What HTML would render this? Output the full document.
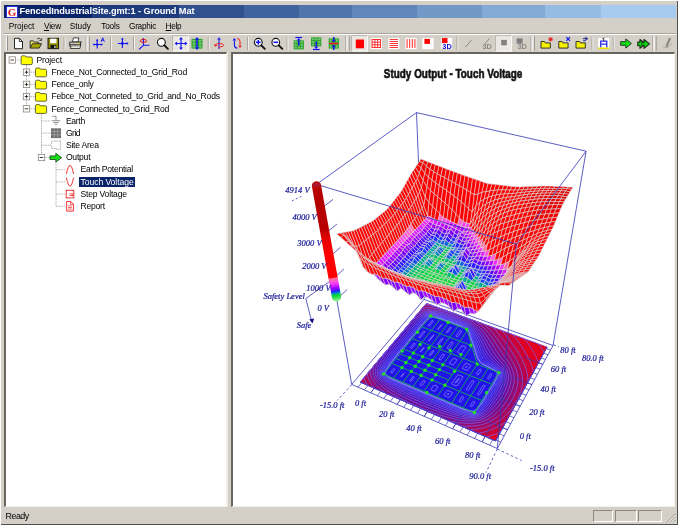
<!DOCTYPE html>
<html lang="en"><head><meta charset="utf-8">
<title>FencedIndustrialSite.gmt:1 - Ground Mat</title>
<style>

html,body{margin:0;padding:0;background:#fff;}
body{width:680px;height:527px;overflow:hidden;position:relative;font-family:"Liberation Sans",sans-serif;font-size:8.25px;color:#000;}
#win{will-change:transform;position:absolute;left:1px;top:1px;width:676px;height:523px;background:#d4d0c8;border-right:1px solid #505050;border-bottom:1px solid #505050;}
#win div,#win span{position:absolute;}
#title{left:3px;top:4px;width:672px;height:13px;background:linear-gradient(to right,#0a246a 0,#0a246a 88px,#1c3a7c 88px,#1c3a7c 175px,#30508e 175px,#30508e 240px,#40629e 240px,#40629e 295px,#5074ac 295px,#5074ac 348px,#6086ba 348px,#6086ba 413px,#7298c8 413px,#7298c8 478px,#84aad6 478px,#84aad6 541px,#96bce4 541px,#96bce4 597px,#a6caf0 597px);}
#title .ttl{left:15.5px;top:1px;color:#fff;font-weight:bold;font-size:9.2px;white-space:nowrap;line-height:11px}
#menu{left:3px;top:18px;width:672px;height:15px;}
#menu span{top:3.4px;line-height:10px;white-space:nowrap}
#menu u{text-decoration:underline;text-underline-offset:1px}
#tbar{left:3px;top:33px;width:672px;height:18px;border-top:1px solid #fff;box-shadow:0 -1px 0 #a8a49c;}
.sep{top:3px;width:1px;height:13px;background:#8c8880;border-right:1px solid #fff;}
.grip{top:2px;width:2px;height:15px;background:#fff;border-right:1px solid #8c8880;}
#tree{left:3px;top:51px;width:223px;height:455px;background:#fff;border-left:2px solid #686660;border-top:2px solid #686660;box-sizing:border-box;overflow:hidden;border-right:1px solid #f4f2ee;border-bottom:1px solid #f4f2ee}
#view{left:230px;top:51px;width:444px;height:455px;background:#fff;border-left:2px solid #686660;border-top:2px solid #686660;box-sizing:border-box;overflow:hidden;border-right:1px solid #f4f2ee;border-bottom:1px solid #f4f2ee}
#split{left:226px;top:51px;width:4px;height:455px;background:#d4d0c8;border-left:1px solid #ece9e2;box-sizing:border-box}
#status{left:3px;top:507px;width:672px;height:16px;}
#status .rdy{left:1.6px;top:3.4px;line-height:10px;font-size:8.9px;letter-spacing:-0.5px}
.pane{top:2px;height:12px;border:1px solid;border-color:#8c8880 #fff #fff #8c8880;box-sizing:border-box}
.ti{white-space:nowrap;line-height:12px;font-size:8.6px;height:12px}
.sel{background:#0a246a;color:#fff}

</style></head>
<body>
<div id="win">
<div id="title"><svg style="position:absolute;left:2px;top:0.5px" width="12" height="12" viewBox="0 0 12 12"><rect x="0.5" y="0.5" width="11" height="11" fill="#fff" stroke="#2a2ae0"/><text x="6" y="10" font-family="Liberation Serif,serif" font-weight="bold" font-size="11" fill="#e02020" text-anchor="middle">G</text></svg><span class="ttl" style="letter-spacing:-0.07px">FencedIndustrialSite.gmt:1 - Ground Mat</span></div>
<div id="menu"><span class="mi" style="left:4.8px;letter-spacing:-0.013px">Project</span><span class="mi" style="left:40.0px;letter-spacing:-0.188px"><u>V</u>iew</span><span class="mi" style="left:65.7px;letter-spacing:0.038px">Study</span><span class="mi" style="left:97.2px;letter-spacing:-0.153px">Tools</span><span class="mi" style="left:125.0px;letter-spacing:-0.27px">Graphic</span><span class="mi" style="left:161.6px;letter-spacing:-0.346px"><u>H</u>elp</span></div>
<div id="tbar"><svg style="position:absolute;left:0;top:0" width="672" height="18" viewBox="4 35 672 18"><path d="M6.3 36.4v14.4" stroke="#fff" stroke-width="1"/><path d="M7.5 36.4v14.4" stroke="#8c8880" stroke-width="0.9"/><g transform="translate(18.50 43.5)"><path d="M-4 -5.2h4.8l3.2 3.2v7.2h-8z" fill="#fff" stroke="#111" stroke-width="0.9" stroke-linejoin="round"/><path d="M0.8 -5.2v3.2h3.2" fill="none" stroke="#111" stroke-width="0.8"/></g><g transform="translate(36.00 43.5)"><path d="M-5.8 4.6v-7.2h3l1 1.2h4.4v2" fill="#e8e460" stroke="#222" stroke-width="0.9" stroke-linejoin="round"/><path d="M-5.8 4.6l2.2 -4.4h9.2l-2.4 4.4z" fill="#a8a400" stroke="#222" stroke-width="0.9" stroke-linejoin="round"/><path d="M1.2 -4.6q2.2 -1.6 3.6 0.4" fill="none" stroke="#222" stroke-width="0.8"/><path d="M5.6 -5.2v2.2h-2.2" fill="none" stroke="#222" stroke-width="0.8"/></g><g transform="translate(53.30 43.5)"><rect x="-5.3" y="-5.2" width="10.6" height="10.4" fill="#8c8800" stroke="#111" stroke-width="0.9"/><rect x="-3.2" y="-4.8" width="6.4" height="4.6" fill="#fff"/><rect x="-2.8" y="1.6" width="5.6" height="3.4" fill="#111"/><rect x="1" y="2.3" width="1.3" height="2.2" fill="#ddd"/></g><path d="M64.2 37v13" stroke="#8c8880" stroke-width="0.8"/><path d="M65.0 37v13" stroke="#fff" stroke-width="0.8"/><g transform="translate(75.70 43.5)"><path d="M-3.4 -1.6l1.2 -4h5.4l-0.8 4z" fill="#fff" stroke="#222" stroke-width="0.8" stroke-linejoin="round"/><path d="M-6 -1.4h11.8l-1 0v4.2h-9.6l-1.2 -0z" fill="#c8c4bc" stroke="#222" stroke-width="0.9" stroke-linejoin="round"/><path d="M-6 1.2h11.6M-4.6 2.8l-0.8 2.2h9.6l0.6 -2.2" fill="#e8e6e0" stroke="#222" stroke-width="0.8"/><rect x="1.6" y="-0.4" width="2.2" height="1" fill="#e8e000"/></g><path d="M88.1 36.4v14.4" stroke="#fff" stroke-width="1"/><path d="M89.3 36.4v14.4" stroke="#8c8880" stroke-width="0.9"/><path d="M86.1 36v15.4" stroke="#8c8880" stroke-width="0.8"/><path d="M86.8 36v15.4" stroke="#fff" stroke-width="0.8"/><g transform="translate(99.00 43.5)"><path d="M-5.4 1h8.2M-1.8 -3.6v8.6" stroke="#1414f0" stroke-width="1.1"/><circle cx="-1.8" cy="1" r="1.3" fill="#1414f0"/><circle cx="-1.8" cy="-3.2" r="1" fill="#1414f0"/><circle cx="2.6" cy="1" r="1" fill="#1414f0"/><circle cx="-5" cy="1" r="0.9" fill="#1414f0"/><path d="M2 -1.6l1.7 -4.2l1.7 4.2M2.7 -3.2h2" fill="none" stroke="#1414f0" stroke-width="0.9"/></g><path d="M110.6 37v13" stroke="#8c8880" stroke-width="0.8"/><path d="M111.4 37v13" stroke="#fff" stroke-width="0.8"/><g transform="translate(123.00 43.5)"><path d="M-5.2 0h9.4M-0.6 -4.6v9.2" stroke="#1414f0" stroke-width="1.1"/><circle cx="-0.6" cy="0" r="1.4" fill="#1414f0"/><circle cx="-0.6" cy="-4.4" r="1" fill="#1414f0"/><path d="M5.6 0.0L3.6 1.5L3.6 -1.5Z" fill="#1414f0"/></g><path d="M133.6 37v13" stroke="#8c8880" stroke-width="0.8"/><path d="M134.4 37v13" stroke="#fff" stroke-width="0.8"/><g transform="translate(144.00 43.5)"><path d="M-0.6 -5.4v7.2l6 0M-0.6 1.8l-4.4 4" stroke="#1414f0" stroke-width="1.1" fill="none"/><ellipse cx="-0.6" cy="-2.6" rx="3.2" ry="1.5" fill="none" stroke="#f01414" stroke-width="1"/></g><g transform="translate(162.60 43.5)"><circle cx="-1.2" cy="-1.2" r="3.9" fill="#fff" stroke="#111" stroke-width="1.1"/><path d="M1.8 1.8L5.3 5.3" stroke="#111" stroke-width="1.9" stroke-linecap="round"/></g><rect x="172.5" y="35.6" width="16" height="15.6" fill="#ebe8e3"/><path d="M172.5 51.2v-15.6h16" fill="none" stroke="#aaa69e" stroke-width="0.7"/><path d="M172.5 51.2h16v-15.6" fill="none" stroke="#fff" stroke-width="0.8"/><g transform="translate(181.00 43.5)"><path d="M-5 0h10M0 -5v10" stroke="#1414f0" stroke-width="1.2"/><path d="M6.4 0.0L3.9 1.9L3.9 -1.9Z" fill="#1414f0"/><path d="M-6.4 0.0L-3.9 -1.9L-3.9 1.9Z" fill="#1414f0"/><path d="M0.0 6.4L-1.9 3.9L1.9 3.9Z" fill="#1414f0"/><path d="M0.0 -6.4L1.9 -3.9L-1.9 -3.9Z" fill="#1414f0"/></g><g transform="translate(197.00 43.5)"><rect x="-5" y="-4.2" width="10" height="8.8" fill="#7ec87e" stroke="#18a018" stroke-width="0.9"/><path d="M-1.6666666666666665 -4.2v8.8M1.666666666666667 -4.2v8.8M-5 -1.2666666666666666h10M-5 1.666666666666667h10" stroke="#18a018" stroke-width="0.8" fill="none"/><path d="M0 -4v8" stroke="#1414f0" stroke-width="1.6"/><path d="M0.0 -6.6L2.2 -3.7L-2.2 -3.7Z" fill="#1414f0"/><path d="M0.0 6.6L-2.2 3.7L2.2 3.7Z" fill="#1414f0"/></g><path d="M208.3 37v13" stroke="#8c8880" stroke-width="0.8"/><path d="M209.2 37v13" stroke="#fff" stroke-width="0.8"/><g transform="translate(219.00 43.5)"><path d="M0 -3.6v9" stroke="#1414f0" stroke-width="1.1"/><path d="M0.0 -6.2L1.9 -3.7L-1.9 -3.7Z" fill="#1414f0"/><path d="M-3.6 2.2a4.2 1.7 0 1 1 3 1.2" fill="none" stroke="#f01414" stroke-width="0.9"/><path d="M-4.2 3.2L-4.6 0.4L-1.6 2.1Z" fill="#f01414"/></g><g transform="translate(237.00 43.5)"><path d="M-2.6 -2.8v4.6q0.4 2.8 3 2.8" fill="none" stroke="#1414f0" stroke-width="1.1"/><path d="M-2.6 -5.6L-0.7 -3.1L-4.5 -3.1Z" fill="#1414f0"/><path d="M0.2 -5q2.6 0 2.8 2.8v3.6" fill="none" stroke="#f01414" stroke-width="1"/><path d="M3.0 4.4L1.2 2.1L4.8 2.1Z" fill="#f01414"/></g><path d="M247.6 37v13" stroke="#8c8880" stroke-width="0.8"/><path d="M248.4 37v13" stroke="#fff" stroke-width="0.8"/><g transform="translate(259.50 43.5)"><circle cx="-1.2" cy="-1.2" r="3.9" fill="#fff" stroke="#111" stroke-width="1.1"/><path d="M-3.6 -1.2h4.8M-1.2 -3.6v4.8" stroke="#1414f0" stroke-width="1.5"/><path d="M1.8 1.8L5.3 5.3" stroke="#111" stroke-width="1.9" stroke-linecap="round"/></g><g transform="translate(277.00 43.5)"><circle cx="-1.2" cy="-1.2" r="3.9" fill="#fff" stroke="#111" stroke-width="1.1"/><path d="M-3.6 -1.2h4.8" stroke="#1414f0" stroke-width="1.6"/><path d="M1.8 1.8L5.3 5.3" stroke="#111" stroke-width="1.9" stroke-linecap="round"/></g><path d="M287.1 37v13" stroke="#8c8880" stroke-width="0.8"/><path d="M287.9 37v13" stroke="#fff" stroke-width="0.8"/><g transform="translate(298.75 43.5)"><rect x="-4.6" y="-2.6" width="9.2" height="8" fill="#7ec87e" stroke="#18a018" stroke-width="0.9"/><path d="M-1.5333333333333332 -2.6v8M1.5333333333333332 -2.6v8M-4.6 0.06666666666666643h9.2M-4.6 2.733333333333333h9.2" stroke="#18a018" stroke-width="0.8" fill="none"/><path d="M-3.4 -6h6.8" stroke="#1414f0" stroke-width="1.2"/><path d="M0 -3v5" stroke="#1414f0" stroke-width="1.5"/><path d="M0.0 -5.6L2.1 -2.9L-2.1 -2.9Z" fill="#1414f0"/></g><g transform="translate(316.25 43.5)"><rect x="-4.6" y="-5.6" width="9.2" height="8" fill="#7ec87e" stroke="#18a018" stroke-width="0.9"/><path d="M-1.5333333333333332 -5.6v8M1.5333333333333332 -5.6v8M-4.6 -2.933333333333333h9.2M-4.6 -0.2666666666666666h9.2" stroke="#18a018" stroke-width="0.8" fill="none"/><path d="M-3.4 6h6.8" stroke="#1414f0" stroke-width="1.2"/><path d="M0 -2v5" stroke="#1414f0" stroke-width="1.5"/><path d="M0.0 5.6L-2.1 2.9L2.1 2.9Z" fill="#1414f0"/></g><g transform="translate(333.75 43.5)"><rect x="-4.6" y="-4.6" width="9.2" height="9.2" fill="#7ec87e" stroke="#18a018" stroke-width="0.9"/><path d="M-1.5333333333333332 -4.6v9.2M1.5333333333333332 -4.6v9.2M-4.6 -1.5333333333333332h9.2M-4.6 1.5333333333333332h9.2" stroke="#18a018" stroke-width="0.8" fill="none"/><path d="M0 -6.4v3M0 3.4v3" stroke="#1414f0" stroke-width="1.5"/><path d="M0.0 -0.8L-2.0 -3.4L2.0 -3.4Z" fill="#1414f0"/><path d="M0.0 0.8L2.0 3.4L-2.0 3.4Z" fill="#1414f0"/><path d="M-4.4 0h8.8" stroke="#f01414" stroke-width="1.5"/></g><path d="M348.0 36.4v14.4" stroke="#fff" stroke-width="1"/><path d="M349.2 36.4v14.4" stroke="#8c8880" stroke-width="0.9"/><path d="M346.0 36v15.4" stroke="#8c8880" stroke-width="0.8"/><path d="M346.7 36v15.4" stroke="#fff" stroke-width="0.8"/><rect x="351.5" y="35.6" width="16" height="15.6" fill="#ebe8e3"/><path d="M351.5 51.2v-15.6h16" fill="none" stroke="#aaa69e" stroke-width="0.7"/><path d="M351.5 51.2h16v-15.6" fill="none" stroke="#fff" stroke-width="0.8"/><g transform="translate(360.00 43.5)"><rect x="-4.2" y="-4" width="8.2" height="8.8" fill="#ff0000"/></g><g transform="translate(376.30 43.5)"><rect x="-5.6" y="-5.6" width="11.2" height="11.2" fill="#fff"/><path d="M-4.2 -4.4v8.8M-1.4 -4.4v8.8M1.4 -4.4v8.8M4.2 -4.4v8.8M-4.6 -4h9.2M-4.6 -1.3h9.2M-4.6 1.3h9.2M-4.6 4h9.2" stroke="#ff2020" stroke-width="0.9"/></g><g transform="translate(393.75 43.5)"><rect x="-5.6" y="-5.6" width="11.2" height="11.2" fill="#fff"/><path d="M-4.2 -4h8.4M-4.2 -2h8.4M-4.2 0h8.4M-4.2 2h8.4M-4.2 4h8.4" stroke="#ff2020" stroke-width="0.9"/></g><g transform="translate(411.00 43.5)"><rect x="-5.6" y="-5.6" width="11.2" height="11.2" fill="#fff"/><path d="M-3.9 -4.4v8.8M-1.3 -4.4v8.8M1.3 -4.4v8.8M3.9 -4.4v8.8" stroke="#ff2020" stroke-width="1"/></g><g transform="translate(428.00 43.5)"><rect x="-5.6" y="-5.6" width="11.2" height="11.2" fill="#fff"/><rect x="-3.6" y="-4.6" width="5.6" height="5" fill="#ff0000"/></g><g transform="translate(446.50 43.5)"><rect x="-5.6" y="-5.6" width="11.2" height="11.2" fill="#fff"/><rect x="-4.6" y="-5.4" width="5.6" height="5" fill="#ff0000"/><text x="-4.2" y="5.4" font-family="Liberation Sans,sans-serif" font-weight="bold" font-size="7.4" fill="#1010e0" textLength="9.4" lengthAdjust="spacingAndGlyphs">3D</text></g><path d="M457.1 37v13" stroke="#8c8880" stroke-width="0.8"/><path d="M457.9 37v13" stroke="#fff" stroke-width="0.8"/><g transform="translate(468.75 43.5)"><path d="M-3.4 3.6L3.2 -3.8" stroke="#8c8880" stroke-width="1"/></g><g transform="translate(487.00 43.5)"><path d="M-2.4 0.4L2.6 -5" stroke="#8c8880" stroke-width="1"/><text x="-4.6" y="5.6" font-family="Liberation Sans,sans-serif" font-weight="bold" font-size="7.4" fill="#8c8880" textLength="9.4" lengthAdjust="spacingAndGlyphs">3D</text></g><rect x="495.5" y="35.6" width="16" height="15.6" fill="#ebe8e3"/><path d="M495.5 51.2v-15.6h16" fill="none" stroke="#aaa69e" stroke-width="0.7"/><path d="M495.5 51.2h16v-15.6" fill="none" stroke="#fff" stroke-width="0.8"/><g transform="translate(504.00 43.5)"><rect x="-2.8" y="-3.6" width="5.6" height="5.4" fill="#808080"/></g><g transform="translate(521.00 43.5)"><rect x="-4.4" y="-5.2" width="6" height="5.4" fill="#808080"/><text x="-3.6" y="5.8" font-family="Liberation Sans,sans-serif" font-weight="bold" font-size="7.4" fill="#8c8880" textLength="9.4" lengthAdjust="spacingAndGlyphs">3D</text></g><path d="M533.1 36.4v14.4" stroke="#fff" stroke-width="1"/><path d="M534.4 36.4v14.4" stroke="#8c8880" stroke-width="0.9"/><path d="M531.1 36v15.4" stroke="#8c8880" stroke-width="0.8"/><path d="M531.9 36v15.4" stroke="#fff" stroke-width="0.8"/><g transform="translate(546.00 43.5)"><path d="M-5 -0.6v-1.4h3.4l0.8 1.4h5.1v5.2h-9.3z" fill="#f4f000" stroke="#222" stroke-width="0.9" stroke-linejoin="round"/><path d="M4.6 -6.4v4.4M2.4 -4.2h4.4M3 -5.8l3.2 3.2M6.2 -5.8l-3.2 3.2" stroke="#f01414" stroke-width="1"/></g><g transform="translate(563.75 43.5)"><path d="M-5 -0.6v-1.4h3.4l0.8 1.4h5.1v5.2h-9.3z" fill="#f4f000" stroke="#222" stroke-width="0.9" stroke-linejoin="round"/><path d="M2.6 -6.4l3.6 3.8M6.2 -6.4l-3.6 3.8" stroke="#1414f0" stroke-width="1.2"/></g><g transform="translate(581.00 43.5)"><path d="M-5 -0.6v-1.4h3.4l0.8 1.4h5.1v5.2h-9.3z" fill="#f4f000" stroke="#222" stroke-width="0.9" stroke-linejoin="round"/><path d="M2 -4.8h4.4M4.2 -6.4l2.4 1.6l-2.4 1.6" fill="none" stroke="#202090" stroke-width="1"/><path d="M2.2 -2.8h2.6" stroke="#202090" stroke-width="0.9"/></g><path d="M592.1 37v13" stroke="#8c8880" stroke-width="0.8"/><path d="M592.9 37v13" stroke="#fff" stroke-width="0.8"/><g transform="translate(603.75 43.5)"><rect x="-5.6" y="-5.6" width="11.2" height="11.2" fill="#fff"/><path d="M-3 4v-6.4h6v6.4M-3 0.6h6" fill="none" stroke="#2828e0" stroke-width="1.3"/><path d="M0 -5.4v3M-1.4 -4.4l1.4 -1.4" stroke="#222" stroke-width="0.9" fill="none"/><path d="M-5.6 4.8h11.2" stroke="#e8e000" stroke-width="1.6"/></g><path d="M613.4 37v13" stroke="#8c8880" stroke-width="0.8"/><path d="M614.1 37v13" stroke="#fff" stroke-width="0.8"/><g transform="translate(626.00 43.5)"><path d="M-5.4 -1.8h5.2v-2.8l5.6 4.6l-5.6 4.6v-2.8h-5.2z" fill="#10e010" stroke="#222" stroke-width="0.9" stroke-linejoin="round"/></g><g transform="translate(643.75 43.5)"><path d="M-6 -1.4h2.2v-2.6l4 3.2v-3.2l5.6 4.4l-5.6 4.4v-3.2l-4 3.2v-2.6h-2.2z" fill="#10d810" stroke="#1c2c1c" stroke-width="1.1" stroke-linejoin="round"/><path d="M-1.8 -2.6v5.2" stroke="#1c2c1c" stroke-width="0.9"/></g><path d="M654.9 36.4v14.4" stroke="#fff" stroke-width="1"/><path d="M656.1 36.4v14.4" stroke="#8c8880" stroke-width="0.9"/><path d="M652.9 36v15.4" stroke="#8c8880" stroke-width="0.8"/><path d="M653.6 36v15.4" stroke="#fff" stroke-width="0.8"/><g transform="translate(667.50 43.5)"><path d="M-1.2 3.2L2.6 -5.4" stroke="#8c8880" stroke-width="2.2"/><path d="M-5 2.6q2.6 3 5.4 1.2q3.4 -2.4 4 -4.2" fill="none" stroke="#a8a49c" stroke-width="0.9"/></g></svg></div>
<div id="tree"><svg style="position:absolute;left:0;top:0" width="222" height="180" viewBox="6 54 222 180"><path d="M12.3 60.0h8M26.5 65.0V108.8M26.5 72.2h8.5M26.5 84.4h8.5M26.5 96.6h8.5M26.5 108.8h8.5M41.5 113.8V157.5M41.5 120.9h9M41.5 133.1h9M41.5 145.3h9M41.5 157.5h9M56 162.5V206.3M56 169.7h9M56 181.9h9M56 194.1h9M56 206.3h9" stroke="#8c8880" stroke-width="0.8" stroke-dasharray="0.8 0.8" fill="none"/><rect x="9.1" y="56.8" width="6.4" height="6.4" fill="#fff" stroke="#8c8880" stroke-width="0.8"/><path d="M10.5 60.0h3.6" stroke="#111" stroke-width="0.8"/><g transform="translate(26.7 60.0)"><path d="M-5.6 -2.6q0 -1.6 1.4 -1.6h2.2q1 0 1.4 1.2h4.8q1.4 0 1.4 1.4v5q0 1.2 -1.4 1.2h-8.4q-1.4 0 -1.4 -1.2z" fill="#ffff00" stroke="#3c3c28" stroke-width="0.8"/></g><rect x="23.3" y="69.0" width="6.4" height="6.4" fill="#fff" stroke="#8c8880" stroke-width="0.8"/><path d="M24.7 72.2h3.6" stroke="#111" stroke-width="0.8"/><path d="M26.5 70.4v3.6" stroke="#111" stroke-width="0.8"/><g transform="translate(41.0 72.2)"><path d="M-5.6 -2.6q0 -1.6 1.4 -1.6h2.2q1 0 1.4 1.2h4.8q1.4 0 1.4 1.4v5q0 1.2 -1.4 1.2h-8.4q-1.4 0 -1.4 -1.2z" fill="#ffff00" stroke="#3c3c28" stroke-width="0.8"/></g><rect x="23.3" y="81.2" width="6.4" height="6.4" fill="#fff" stroke="#8c8880" stroke-width="0.8"/><path d="M24.7 84.4h3.6" stroke="#111" stroke-width="0.8"/><path d="M26.5 82.6v3.6" stroke="#111" stroke-width="0.8"/><g transform="translate(41.0 84.4)"><path d="M-5.6 -2.6q0 -1.6 1.4 -1.6h2.2q1 0 1.4 1.2h4.8q1.4 0 1.4 1.4v5q0 1.2 -1.4 1.2h-8.4q-1.4 0 -1.4 -1.2z" fill="#ffff00" stroke="#3c3c28" stroke-width="0.8"/></g><rect x="23.3" y="93.4" width="6.4" height="6.4" fill="#fff" stroke="#8c8880" stroke-width="0.8"/><path d="M24.7 96.6h3.6" stroke="#111" stroke-width="0.8"/><path d="M26.5 94.8v3.6" stroke="#111" stroke-width="0.8"/><g transform="translate(41.0 96.6)"><path d="M-5.6 -2.6q0 -1.6 1.4 -1.6h2.2q1 0 1.4 1.2h4.8q1.4 0 1.4 1.4v5q0 1.2 -1.4 1.2h-8.4q-1.4 0 -1.4 -1.2z" fill="#ffff00" stroke="#3c3c28" stroke-width="0.8"/></g><rect x="23.3" y="105.6" width="6.4" height="6.4" fill="#fff" stroke="#8c8880" stroke-width="0.8"/><path d="M24.7 108.8h3.6" stroke="#111" stroke-width="0.8"/><g transform="translate(41.0 108.8)"><path d="M-5.6 -2.6q0 -1.6 1.4 -1.6h2.2q1 0 1.4 1.2h4.8q1.4 0 1.4 1.4v5q0 1.2 -1.4 1.2h-8.4q-1.4 0 -1.4 -1.2z" fill="#ffff00" stroke="#3c3c28" stroke-width="0.8"/></g><g transform="translate(56.0 120.9)"><path d="M-3.8 -4.6h3.8v4.4M-4.2 -0.2h8.4M-2.8 1.6h5.6M-1.3 3.4h2.6" fill="none" stroke="#808080" stroke-width="0.85"/></g><g transform="translate(56.0 133.1)"><rect x="-5" y="-4.8" width="10" height="9.8" fill="#6e6e6e"/><path d="M-1.7 -4.8v9.8M1.7 -4.8v9.8M-5 -1.6h10M-5 1.7h10" stroke="#b4b4b4" stroke-width="0.6"/></g><g transform="translate(56.0 145.3)"><path d="M-4.4 -4.2h7.6l1.2 -0.8v9.2h-3.6v-1h-5.2v-3.2l-1 -0.6l1 -0.8z" fill="none" stroke="#a4a4a4" stroke-width="0.8" stroke-dasharray="1.8 0.6"/></g><rect x="38.3" y="154.3" width="6.4" height="6.4" fill="#fff" stroke="#8c8880" stroke-width="0.8"/><path d="M39.7 157.5h3.6" stroke="#111" stroke-width="0.8"/><g transform="translate(56.0 157.5)"><path d="M-6 -1.6h5.8v-2.6l5.8 4.4l-5.8 4.4v-2.6h-5.8z" fill="#10e010" stroke="#1a3a1a" stroke-width="0.8" stroke-linejoin="round"/></g><g transform="translate(70.0 169.7)"><path d="M-3.6 4.2q3.6 -17 7.2 0" fill="none" stroke="#f02020" stroke-width="0.9"/></g><g transform="translate(70.0 181.9)"><path d="M-3.6 -4.2q3.6 17 7.2 0" fill="none" stroke="#f02020" stroke-width="0.9"/></g><g transform="translate(70.0 194.1)"><rect x="-3.8" y="-3.8" width="7.6" height="7.6" fill="#fff" stroke="#f02020" stroke-width="0.9"/><path d="M-0.4 -0.2h3.4v1.6h-3.4" fill="none" stroke="#f02020" stroke-width="0.8"/></g><g transform="translate(70.0 206.3)"><path d="M-3.4 -4.8h4.2l2.6 2.6v7h-6.8z" fill="#fff" stroke="#f02020" stroke-width="0.9"/><path d="M-1.8 -0.4h3.6M-1.8 1.2h3.6M-1.8 2.8h3.6M0.6 -4.6v2.6h2.6" fill="none" stroke="#f02020" stroke-width="0.7"/></g></svg><span class="ti" style="left:30.5px;top:-0.3px;letter-spacing:-0.193px;">Project</span><span class="ti" style="left:45.4px;top:11.9px;letter-spacing:-0.203px;">Fnece_Not_Connected_to_Grid_Rod</span><span class="ti" style="left:45.4px;top:24.1px;letter-spacing:-0.214px;">Fence_only</span><span class="ti" style="left:45.4px;top:36.3px;letter-spacing:-0.221px;">Febce_Not_Conneted_to_Grid_and_No_Rods</span><span class="ti" style="left:45.4px;top:48.5px;letter-spacing:-0.224px;">Fence_Connected_to_Grid_Rod</span><span class="ti" style="left:59.9px;top:60.6px;letter-spacing:-0.309px;">Earth</span><span class="ti" style="left:59.9px;top:72.8px;letter-spacing:-0.513px;">Grid</span><span class="ti" style="left:59.9px;top:85.0px;letter-spacing:-0.231px;">Site Area</span><span class="ti" style="left:59.9px;top:97.2px;letter-spacing:-0.235px;">Output</span><span class="ti" style="left:74.5px;top:109.4px;letter-spacing:-0.265px;">Earth Potential</span><div class="sel" style="left:72.9px;top:122.7px;width:55.7px;height:10.6px"></div><span class="ti" style="left:74.5px;top:121.6px;letter-spacing:-0.069px;color:#fff;">Touch Voltage</span><span class="ti" style="left:74.5px;top:133.8px;letter-spacing:-0.204px;">Step Voltage</span><span class="ti" style="left:74.5px;top:146.0px;letter-spacing:-0.249px;">Report</span></div>
<div id="split"></div>
<div id="view"><svg style="position:absolute;left:-233px;top:-54px" width="680" height="527" viewBox="0 0 680 527">
<text x="383.8" y="77.6" font-family="Liberation Sans,sans-serif" font-weight="bold" font-size="13.4" fill="#141414" stroke="#141414" stroke-width="0.65" textLength="138.6" lengthAdjust="spacingAndGlyphs">Study Output - Touch Voltage</text>
<path d="M351.7,384.4 424.1,299.4M424.1,299.4 553,345.5M424.1,299.4 416.5,112.6" fill="none" stroke="#3434b4" stroke-width="0.8"/>
<polygon points="360.3,382 495.5,440.9 547.2,347 426.4,303.5" fill="#e4001e"/>
<path d="M360.3,382 362,382.8 363.6,383.5 365.3,384.2 366.9,384.9 368.6,385.6 370.2,386.4 371.9,387.1 373.6,387.8 375.2,388.5 376.9,389.3 378.6,390 380.3,390.7 382,391.5 383.7,392.2 385.4,392.9 387.1,393.7 388.8,394.4 390.5,395.2 392.2,395.9 393.9,396.7 395.6,397.4 397.4,398.2 399.1,398.9 400.8,399.7 402.6,400.4 404.3,401.2 406.1,402 407.8,402.7 409.6,403.5 411.3,404.3 413.1,405 414.9,405.8 416.6,406.6 418.4,407.4 420.2,408.1 422,408.9 423.8,409.7 425.6,410.5 427.4,411.3 429.2,412.1 431,412.8 432.8,413.6 434.6,414.4 436.5,415.2 438.3,416 440.1,416.8 442,417.6 443.8,418.4 445.7,419.2 447.5,420 449.4,420.8 451.2,421.7 453.1,422.5 455,423.3 456.9,424.1 458.7,424.9 460.6,425.8 462.5,426.6 464.4,427.4 466.3,428.2 468.2,429.1 470.1,429.9 472.1,430.7 474,431.6 475.9,432.4 477.8,433.3 479.8,434.1 481.7,434.9 483.7,435.8 485.6,436.6 487.6,437.5 489.5,438.4 491.5,439.2 493.5,440.1 495.5,440.9 496.3,439.5 497.1,438 497.9,436.6 498.7,435.1 499.5,433.7 500.3,432.2 501,430.8 501.8,429.4 502.6,428 503.4,426.6 504.1,425.2 504.9,423.8 505.7,422.4 506.4,421 507.2,419.6 507.9,418.3 508.7,416.9 509.4,415.5 510.2,414.2 510.9,412.8 511.7,411.5 512.4,410.2 513.1,408.8 513.9,407.5 514.6,406.2 515.3,404.9 516,403.6 516.7,402.3 517.4,401 518.2,399.7 518.9,398.4 519.6,397.2 520.3,395.9 521,394.6 521.7,393.4 522.3,392.1 523,390.9 523.7,389.6 524.4,388.4 525.1,387.1 525.8,385.9 526.4,384.7 527.1,383.5 527.8,382.3 528.4,381 529.1,379.8 529.8,378.6 530.4,377.5 531.1,376.3 531.7,375.1 532.4,373.9 533,372.7 533.7,371.6 534.3,370.4 534.9,369.2 535.6,368.1 536.2,366.9 536.8,365.8 537.5,364.6 538.1,363.5 538.7,362.4 539.3,361.3 539.9,360.1 540.6,359 541.2,357.9 541.8,356.8 542.4,355.7 543,354.6 543.6,353.5 544.2,352.4 544.8,351.3 545.4,350.2 546,349.2 546.6,348.1 547.2,347 545.4,346.4 543.7,345.8 541.9,345.1 540.2,344.5 538.5,343.9 536.7,343.3 535,342.6 533.3,342 531.6,341.4 529.9,340.8 528.2,340.2 526.5,339.6 524.8,338.9 523.1,338.3 521.4,337.7 519.7,337.1 518,336.5 516.3,335.9 514.7,335.3 513,334.7 511.3,334.1 509.6,333.5 508,332.9 506.3,332.3 504.7,331.7 503,331.1 501.4,330.5 499.7,329.9 498.1,329.3 496.5,328.7 494.8,328.2 493.2,327.6 491.6,327 489.9,326.4 488.3,325.8 486.7,325.2 485.1,324.7 483.5,324.1 481.9,323.5 480.3,322.9 478.7,322.3 477.1,321.8 475.5,321.2 473.9,320.6 472.3,320.1 470.8,319.5 469.2,318.9 467.6,318.4 466,317.8 464.5,317.2 462.9,316.7 461.3,316.1 459.8,315.5 458.2,315 456.7,314.4 455.1,313.9 453.6,313.3 452.1,312.7 450.5,312.2 449,311.6 447.5,311.1 445.9,310.5 444.4,310 442.9,309.4 441.4,308.9 439.8,308.4 438.3,307.8 436.8,307.3 435.3,306.7 433.8,306.2 432.3,305.6 430.8,305.1 429.3,304.6 427.8,304 426.4,303.5 425.6,304.4 424.8,305.3 424.1,306.2 423.3,307.1 422.5,308.1 421.7,309 421,309.9 420.2,310.8 419.4,311.8 418.6,312.7 417.8,313.6 417,314.6 416.2,315.5 415.4,316.5 414.6,317.4 413.8,318.4 413,319.4 412.2,320.3 411.4,321.3 410.6,322.3 409.8,323.2 408.9,324.2 408.1,325.2 407.3,326.2 406.4,327.2 405.6,328.2 404.8,329.2 403.9,330.2 403.1,331.2 402.2,332.2 401.4,333.2 400.5,334.2 399.7,335.3 398.8,336.3 397.9,337.3 397.1,338.3 396.2,339.4 395.3,340.4 394.4,341.5 393.6,342.5 392.7,343.6 391.8,344.6 390.9,345.7 390,346.8 389.1,347.8 388.2,348.9 387.3,350 386.4,351.1 385.5,352.2 384.5,353.2 383.6,354.3 382.7,355.4 381.8,356.5 380.8,357.7 379.9,358.8 378.9,359.9 378,361 377.1,362.1 376.1,363.3 375.1,364.4 374.2,365.6 373.2,366.7 372.3,367.8 371.3,369 370.3,370.2 369.3,371.3 368.3,372.5 367.4,373.7 366.4,374.9 365.4,376 364.4,377.2 363.4,378.4 362.4,379.6 361.3,380.8Z" fill="#e4001e" fill-rule="evenodd" stroke="#7466f0" stroke-width="0.75"/>
<path d="M360.3,382 362,382.8 363.6,383.5 365.3,384.2 366.9,384.9 368.6,385.6 370.2,386.4 371.9,387.1 373.6,387.8 375.2,388.5 376.9,389.3 378.6,390 380.3,390.7 382,391.5 383.7,392.2 385.4,392.9 387.1,393.7 388.8,394.4 390.5,395.2 392.2,395.9 393.9,396.7 395.6,397.4 397.4,398.2 399.1,398.9 400.8,399.7 402.6,400.4 404.3,401.2 406.1,402 407.8,402.7 409.6,403.5 411.3,404.3 413.1,405 414.9,405.8 416.6,406.6 418.4,407.4 420.2,408.1 422,408.9 423.8,409.7 425.6,410.5 427.4,411.3 429.2,412.1 431,412.8 432.8,413.6 434.6,414.4 436.5,415.2 438.3,416 440.1,416.8 442,417.6 443.8,418.4 445.7,419.2 447.5,420 449.4,420.8 451.2,421.7 453.1,422.5 455,423.3 456.9,424.1 458.7,424.9 460.6,425.8 462.5,426.6 464.4,427.4 466.3,428.2 468.2,429.1 470.1,429.9 472.1,430.7 474,431.6 475.9,432.4 477.8,433.3 479.8,434.1 481.7,434.9 483.7,435.8 485.6,436.6 487.6,437.5 489.5,438.4 491.5,439.2 493.5,440.1 495.5,440.9 496.3,439.5 497.1,438 497.9,436.6 498.7,435.1 499.5,433.7 500.3,432.2 501,430.8 501.8,429.4 502.6,428 503.4,426.6 504.1,425.2 504.9,423.8 505.7,422.4 506.4,421 507.2,419.6 507.9,418.3 508.7,416.9 509.4,415.5 510.2,414.2 510.9,412.8 511.7,411.5 512.4,410.2 513.1,408.8 513.9,407.5 514.6,406.2 515.3,404.9 516,403.6 516.7,402.3 517.4,401 518.2,399.7 518.9,398.4 519.6,397.2 520.3,395.9 521,394.6 521.7,393.4 522.3,392.1 523,390.9 523.7,389.6 524.4,388.4 525.1,387.1 525.8,385.9 526.4,384.7 527.1,383.5 527.8,382.3 528.4,381 529.1,379.8 529.8,378.6 530.4,377.5 531.1,376.3 531.7,375.1 532.4,373.9 533,372.7 533.7,371.6 534.3,370.4 534.9,369.2 535.6,368.1 536.2,366.9 536.8,365.8 537.5,364.6 538.1,363.5 538.7,362.4 539.3,361.3 539.9,360.1 540.6,359 541.2,357.9 541.8,356.8 542.4,355.7 543,354.6 543.6,353.5 543.5,351.7 542.9,350.6 542,349 541,347.3 540.3,346.2 539.4,344.9 538.5,343.9 536.7,343.3 535,342.6 533.3,342 531.6,341.4 529.9,340.8 528.2,340.2 526.5,339.6 524.8,338.9 523.1,338.3 521.4,337.7 519.7,337.1 518,336.5 516.3,335.9 514.7,335.3 513,334.7 511.3,334.1 509.6,333.5 508,332.9 506.3,332.3 504.7,331.7 503,331.1 501.4,330.5 499.7,329.9 498.1,329.3 496.5,328.7 494.8,328.2 493.2,327.6 491.6,327 489.9,326.4 488.3,325.8 486.7,325.2 485.1,324.7 483.5,324.1 481.9,323.5 480.3,322.9 478.7,322.3 477.1,321.8 475.5,321.2 473.9,320.6 472.3,320.1 470.8,319.5 469.2,318.9 467.6,318.4 466,317.8 464.5,317.2 462.9,316.7 461.3,316.1 459.8,315.5 458.2,315 456.7,314.4 455.1,313.9 453.6,313.3 452.1,312.7 450.5,312.2 449,311.6 447.5,311.1 445.9,310.5 444.4,310 442.9,309.4 441.4,308.9 439.8,308.4 438.3,307.8 436.8,307.3 435.3,306.7 433.8,306.2 432.3,305.6 430.8,305.1 429.3,304.6 427.8,304 426.4,303.5 425.6,304.4 424.8,305.3 424.1,306.2 423.3,307.1 422.5,308.1 421.7,309 421,309.9 420.2,310.8 419.4,311.8 418.6,312.7 417.8,313.6 417,314.6 416.2,315.5 415.4,316.5 414.6,317.4 413.8,318.4 413,319.4 412.2,320.3 411.4,321.3 410.6,322.3 409.8,323.2 408.9,324.2 408.1,325.2 407.3,326.2 406.4,327.2 405.6,328.2 404.8,329.2 403.9,330.2 403.1,331.2 402.2,332.2 401.4,333.2 400.5,334.2 399.7,335.3 398.8,336.3 397.9,337.3 397.1,338.3 396.2,339.4 395.3,340.4 394.4,341.5 393.6,342.5 392.7,343.6 391.8,344.6 390.9,345.7 390,346.8 389.1,347.8 388.2,348.9 387.3,350 386.4,351.1 385.5,352.2 384.5,353.2 383.6,354.3 382.7,355.4 381.8,356.5 380.8,357.7 379.9,358.8 378.9,359.9 378,361 377.1,362.1 376.1,363.3 375.1,364.4 374.2,365.6 373.2,366.7 372.3,367.8 371.3,369 370.3,370.2 369.3,371.3 368.3,372.5 367.4,373.7 366.4,374.9 365.4,376 364.4,377.2 363.4,378.4 362.4,379.6 361.3,380.8Z" fill="#e4001e" fill-rule="evenodd" stroke="#7466f0" stroke-width="0.75"/>
<path d="M360.3,382 362,382.8 363.6,383.5 365.3,384.2 366.9,384.9 368.6,385.6 370.2,386.4 371.9,387.1 373.6,387.8 375.2,388.5 376.9,389.3 378.6,390 380.3,390.7 382,391.5 383.7,392.2 385.4,392.9 387.1,393.7 388.8,394.4 390.5,395.2 392.2,395.9 393.9,396.7 395.6,397.4 397.4,398.2 399.1,398.9 400.8,399.7 402.6,400.4 404.3,401.2 406.1,402 407.8,402.7 409.6,403.5 411.3,404.3 413.1,405 414.9,405.8 416.6,406.6 418.4,407.4 420.2,408.1 422,408.9 423.8,409.7 425.6,410.5 427.4,411.3 429.2,412.1 431,412.8 432.8,413.6 434.6,414.4 436.5,415.2 438.3,416 440.1,416.8 442,417.6 443.8,418.4 445.7,419.2 447.5,420 449.4,420.8 451.2,421.7 453.1,422.5 455,423.3 456.9,424.1 458.7,424.9 460.6,425.8 462.5,426.6 464.4,427.4 466.3,428.2 468.2,429.1 470.1,429.9 472.1,430.7 474,431.6 475.9,432.4 477.8,433.3 479.8,434.1 481.7,434.9 483.7,435.8 485.6,436.6 487.6,437.5 489.5,438.4 491.5,439.2 493.5,440.1 495.5,440.9 496.3,439.5 497.1,438 497.9,436.6 498.7,435.1 499.5,433.7 500.3,432.2 501,430.8 501.8,429.4 502.6,428 503.4,426.6 504.1,425.2 504.9,423.8 505.7,422.4 506.4,421 507.2,419.6 507.9,418.3 508.7,416.9 509.4,415.5 510.2,414.2 510.9,412.8 511.7,411.5 512.4,410.2 513.1,408.8 513.9,407.5 514.6,406.2 515.3,404.9 516,403.6 516.7,402.3 517.4,401 518.2,399.7 518.9,398.4 519.6,397.2 520.3,395.9 521,394.6 521.7,393.4 522.3,392.1 523,390.9 523.7,389.6 524.4,388.4 525.1,387.1 525.8,385.9 526.4,384.7 527.1,383.5 527.8,382.3 528.4,381 529.1,379.8 529.8,378.6 530.4,377.5 531.1,376.3 531.7,375.1 532.4,373.9 533,372.7 533.7,371.6 534.3,370.4 534.9,369.2 535.6,368.1 536.2,366.9 536.8,365.8 537.5,364.6 538.1,363.5 538.1,361.5 537.4,359.9 536.7,358.3 536,356.6 535.2,355.2 534.3,353.4 533.7,352.3 532.9,350.9 532.1,349.5 531.4,348.4 530.5,346.9 529.8,345.9 528.8,344.4 528.1,343.3 527.1,342 526.2,340.7 525.4,339.7 523.9,338.6 522.2,338 520.5,337.4 518.9,336.8 517.2,336.2 515.5,335.6 513.8,335 512.1,334.4 510.5,333.8 508.8,333.2 507.2,332.6 505.5,332 503.8,331.4 502.2,330.8 500.6,330.2 498.9,329.6 497.3,329 495.6,328.5 494,327.9 492.4,327.3 490.8,326.7 489.1,326.1 487.5,325.5 485.9,324.9 484.3,324.4 482.7,323.8 481.1,323.2 479.5,322.6 477.9,322.1 476.3,321.5 474.7,320.9 473.1,320.3 471.5,319.8 470,319.2 468.4,318.6 466.8,318.1 465.3,317.5 463.7,316.9 462.1,316.4 460.6,315.8 459,315.3 457.5,314.7 455.9,314.1 454.4,313.6 452.8,313 451.3,312.5 449.7,311.9 448.2,311.4 446.7,310.8 445.2,310.3 443.6,309.7 442.1,309.2 440.6,308.6 439.1,308.1 437.6,307.5 436.1,307 434.6,306.5 433.1,305.9 431.6,305.4 430.1,304.8 428.6,304.3 427.1,303.8 425.6,304.4 424.8,305.3 424.1,306.2 423.3,307.1 422.5,308.1 421.7,309 421,309.9 420.2,310.8 419.4,311.8 418.6,312.7 417.8,313.6 417,314.6 416.2,315.5 415.4,316.5 414.6,317.4 413.8,318.4 413,319.4 412.2,320.3 411.4,321.3 410.6,322.3 409.8,323.2 408.9,324.2 408.1,325.2 407.3,326.2 406.4,327.2 405.6,328.2 404.8,329.2 403.9,330.2 403.1,331.2 402.2,332.2 401.4,333.2 400.5,334.2 399.7,335.3 398.8,336.3 397.9,337.3 397.1,338.3 396.2,339.4 395.3,340.4 394.4,341.5 393.6,342.5 392.7,343.6 391.8,344.6 390.9,345.7 390,346.8 389.1,347.8 388.2,348.9 387.3,350 386.4,351.1 385.5,352.2 384.5,353.2 383.6,354.3 382.7,355.4 381.8,356.5 380.8,357.7 379.9,358.8 378.9,359.9 378,361 377.1,362.1 376.1,363.3 375.1,364.4 374.2,365.6 373.2,366.7 372.3,367.8 371.3,369 370.3,370.2 369.3,371.3 368.3,372.5 367.4,373.7 366.4,374.9 365.4,376 364.4,377.2 363.4,378.4 362.4,379.6 361.3,380.8Z" fill="#df0023" fill-rule="evenodd" stroke="#7466f0" stroke-width="0.75"/>
<path d="M360.3,382 362,382.8 363.6,383.5 365.3,384.2 366.9,384.9 368.6,385.6 370.2,386.4 371.9,387.1 373.6,387.8 375.2,388.5 376.9,389.3 378.6,390 380.3,390.7 382,391.5 383.7,392.2 385.4,392.9 387.1,393.7 388.8,394.4 390.5,395.2 392.2,395.9 393.9,396.7 395.6,397.4 397.4,398.2 399.1,398.9 400.8,399.7 402.6,400.4 404.3,401.2 406.1,402 407.8,402.7 409.6,403.5 411.3,404.3 413.1,405 414.9,405.8 416.6,406.6 418.4,407.4 420.2,408.1 422,408.9 423.8,409.7 425.6,410.5 427.4,411.3 429.2,412.1 431,412.8 432.8,413.6 434.6,414.4 436.5,415.2 438.3,416 440.1,416.8 442,417.6 443.8,418.4 445.7,419.2 447.5,420 449.4,420.8 451.2,421.7 453.1,422.5 455,423.3 456.9,424.1 458.7,424.9 460.6,425.8 462.5,426.6 464.4,427.4 466.3,428.2 468.2,429.1 470.1,429.9 472.1,430.7 474,431.6 475.9,432.4 477.8,433.3 479.8,434.1 481.7,434.9 483.7,435.8 485.6,436.6 487.7,436.7 489,436.3 491,435.7 492.5,435.2 493.8,434.8 495.6,434.1 497,433.5 498.8,432.7 500,432.2 501,430.8 501.8,429.4 502.6,428 503.4,426.6 504.1,425.2 504.9,423.8 505.7,422.4 506.4,421 507.2,419.6 507.9,418.3 508.7,416.9 509.4,415.5 510.2,414.2 510.9,412.8 511.7,411.5 512.4,410.2 513.1,408.8 513.9,407.5 514.6,406.2 515.3,404.9 516,403.6 516.7,402.3 517.4,401 518.2,399.7 518.9,398.4 519.6,397.2 520.3,395.9 521,394.6 521.7,393.4 522.3,392.1 523,390.9 523.7,389.6 524.4,388.4 525.1,387.1 525.8,385.9 526.4,384.7 527.1,383.5 527.8,382.3 528.4,381 529.1,379.8 529.8,378.6 530.4,377.5 531.1,376.3 531.7,375.1 532.4,373.9 533,372.7 533.1,370.6 532.7,369.3 532.3,368 531.9,366.8 531.5,365.6 531.1,364.3 530.4,362.7 529.8,361.1 529,359.5 528.3,358 527.4,356.2 526.8,355 526,353.7 525.2,352.2 524.6,351.1 523.6,349.6 523,348.6 522,347 521.3,346 520.3,344.6 519.5,343.4 518.7,342.2 517.6,340.8 516.4,339.2 515.6,338.1 514.8,337.3 514.1,336.4 513.3,335.5 512.6,334.6 511.3,334.1 509.6,333.5 508,332.9 506.3,332.3 504.7,331.7 503,331.1 501.4,330.5 499.7,329.9 498.1,329.3 496.5,328.7 494.8,328.2 493.2,327.6 491.6,327 489.9,326.4 488.3,325.8 486.7,325.2 485.1,324.7 483.5,324.1 481.9,323.5 480.3,322.9 478.7,322.3 477.1,321.8 475.5,321.2 473.9,320.6 472.3,320.1 470.8,319.5 469.2,318.9 467.6,318.4 466,317.8 464.5,317.2 462.9,316.7 461.3,316.1 459.8,315.5 458.2,315 456.7,314.4 455.1,313.9 453.6,313.3 452.1,312.7 450.5,312.2 449,311.6 447.5,311.1 445.9,310.5 444.4,310 442.9,309.4 441.4,308.9 439.8,308.4 438.3,307.8 436.8,307.3 435.3,306.7 433.8,306.2 432.3,305.6 430.8,305.1 429.3,304.6 427.8,304 426.4,303.5 425.6,304.4 424.8,305.3 424.1,306.2 423.3,307.1 422.5,308.1 421.7,309 421,309.9 420.2,310.8 419.4,311.8 418.6,312.7 417.8,313.6 417,314.6 416.2,315.5 415.4,316.5 414.6,317.4 413.8,318.4 413,319.4 412.2,320.3 411.4,321.3 410.6,322.3 409.8,323.2 408.9,324.2 408.1,325.2 407.3,326.2 406.4,327.2 405.6,328.2 404.8,329.2 403.9,330.2 403.1,331.2 402.2,332.2 401.4,333.2 400.5,334.2 399.7,335.3 398.8,336.3 397.9,337.3 397.1,338.3 396.2,339.4 395.3,340.4 394.4,341.5 393.6,342.5 392.7,343.6 391.8,344.6 390.9,345.7 390,346.8 389.1,347.8 388.2,348.9 387.3,350 386.4,351.1 385.5,352.2 384.5,353.2 383.6,354.3 382.7,355.4 381.8,356.5 380.8,357.7 379.9,358.8 378.9,359.9 378,361 377.1,362.1 376.1,363.3 375.1,364.4 374.2,365.6 373.2,366.7 372.3,367.8 371.3,369 370.3,370.2 369.3,371.3 368.3,372.5 367.4,373.7 366.4,374.9 365.4,376 364.4,377.2 363.4,378.4 362.4,379.6 361.3,380.8Z" fill="#cc0237" fill-rule="evenodd" stroke="#7466f0" stroke-width="0.75"/>
<path d="M360.3,382 362,382.8 363.6,383.5 365.3,384.2 366.9,384.9 368.6,385.6 370.2,386.4 371.9,387.1 373.6,387.8 375.2,388.5 376.9,389.3 378.6,390 380.3,390.7 382,391.5 383.7,392.2 385.4,392.9 387.1,393.7 388.8,394.4 390.5,395.2 392.2,395.9 393.9,396.7 395.6,397.4 397.4,398.2 399.1,398.9 400.8,399.7 402.6,400.4 404.3,401.2 406.1,402 407.8,402.7 409.6,403.5 411.3,404.3 413.1,405 414.9,405.8 416.6,406.6 418.4,407.4 420.2,408.1 422,408.9 423.8,409.7 425.6,410.5 427.4,411.3 429.2,412.1 431,412.8 432.8,413.6 434.6,414.4 436.5,415.2 438.3,416 440.1,416.8 442,417.6 443.8,418.4 445.7,419.2 447.5,420 449.4,420.8 451.2,421.7 453.1,422.5 455,423.3 456.9,424.1 458.7,424.9 460.6,425.8 462.5,426.6 464.4,427.4 466.3,428.2 468.2,429.1 470.1,429.9 472.1,430.7 474,431.6 475.9,432.4 477.8,433.2 479.3,433 480.8,432.7 482.2,432.5 483.6,432.2 484.9,431.8 486.1,431.5 487.6,431.1 489.1,430.6 490.6,430.1 491.9,429.6 493.7,428.8 495,428.2 496.9,427.3 498.7,426.4 500.4,425.4 502.2,424.3 503.8,423.3 505.3,422.2 506.4,421 507.2,419.6 507.9,418.3 508.7,416.9 509.4,415.5 510.2,414.2 510.9,412.8 511.7,411.5 512.4,410.2 513.1,408.8 513.9,407.5 514.6,406.2 515.3,404.9 516,403.6 516.7,402.3 517.4,401 518.2,399.7 518.9,398.4 519.6,397.2 520.3,395.9 521,394.6 521.7,393.4 522.3,392.1 523,390.9 523.7,389.6 524.4,388.4 525.1,387.1 525.8,385.9 526.4,384.7 527.1,383.5 527.8,382.3 527.9,380.1 527.8,378.2 527.6,376.5 527.4,374.9 527.1,373.4 526.8,372 526.5,370.7 526.1,369.4 525.7,368.1 525.3,366.9 524.8,365.4 524.1,363.8 523.6,362.5 523,361.3 522.2,359.6 521.6,358.5 520.9,357.1 520.1,355.6 519.5,354.5 518.5,352.9 517.4,351.2 516.4,349.5 515.3,347.8 514.6,346.8 513.6,345.4 512.8,344.2 511.9,343 510.8,341.5 509.7,340 508.8,338.9 508,337.8 506.8,336.4 505.9,335.3 505.1,334.4 504.3,333.5 503.5,332.5 502.7,331.6 501.8,330.7 500.6,330.2 498.9,329.6 497.3,329 495.6,328.5 494,327.9 492.4,327.3 490.8,326.7 489.1,326.1 487.5,325.5 485.9,324.9 484.3,324.4 482.7,323.8 481.1,323.2 479.5,322.6 477.9,322.1 476.3,321.5 474.7,320.9 473.1,320.3 471.5,319.8 470,319.2 468.4,318.6 466.8,318.1 465.3,317.5 463.7,316.9 462.1,316.4 460.6,315.8 459,315.3 457.5,314.7 455.9,314.1 454.4,313.6 452.8,313 451.3,312.5 449.7,311.9 448.2,311.4 446.7,310.8 445.2,310.3 443.6,309.7 442.1,309.2 440.6,308.6 439.1,308.1 437.6,307.5 436.1,307 434.6,306.5 433.1,305.9 431.6,305.4 430.1,304.8 428.6,304.3 427.1,303.8 425.6,304.4 424.8,305.3 424.1,306.2 423.3,307.1 422.5,308.1 421.7,309 421,309.9 420.2,310.8 419.4,311.8 418.6,312.7 417.8,313.6 417,314.6 416.2,315.5 415.4,316.5 414.6,317.4 413.8,318.4 413,319.4 412.2,320.3 411.4,321.3 410.6,322.3 409.8,323.2 408.9,324.2 408.1,325.2 407.3,326.2 406.4,327.2 405.6,328.2 404.8,329.2 403.9,330.2 403.1,331.2 402.2,332.2 401.4,333.2 400.5,334.2 399.7,335.3 398.8,336.3 397.9,337.3 397.1,338.3 396.2,339.4 395.3,340.4 394.4,341.5 393.6,342.5 392.7,343.6 391.8,344.6 390.9,345.7 390,346.8 389.1,347.8 388.2,348.9 387.3,350 386.4,351.1 385.5,352.2 384.5,353.2 383.6,354.3 382.7,355.4 381.8,356.5 380.8,357.7 379.9,358.8 378.9,359.9 378,361 377.1,362.1 376.1,363.3 375.1,364.4 374.2,365.6 373.2,366.7 372.3,367.8 371.3,369 370.3,370.2 369.3,371.3 368.3,372.5 367.4,373.7 366.4,374.9 365.4,376 364.4,377.2 363.4,378.4 362.4,379.6 361.3,380.8 360.3,382Z" fill="#b9044b" fill-rule="evenodd" stroke="#7466f0" stroke-width="0.75"/>
<path d="M366.8,384 367.5,385.2 369.4,386 371.1,386.7 372.7,387.4 374.4,388.2 376.1,388.9 377.7,389.6 379.4,390.4 381.1,391.1 382.8,391.8 384.5,392.6 386.2,393.3 387.9,394.1 389.6,394.8 391.3,395.6 393,396.3 394.8,397 396.5,397.8 398.2,398.6 400,399.3 401.7,400.1 403.4,400.8 405.2,401.6 406.9,402.4 408.7,403.1 410.4,403.9 412.2,404.7 414,405.4 415.8,406.2 417.5,407 419.3,407.7 421.1,408.5 422.9,409.3 424.7,410.1 426.5,410.9 428.3,411.7 430.1,412.4 431.9,413.2 433.7,414 435.6,414.8 437.4,415.6 439.2,416.4 441.1,417.2 442.9,418 444.7,418.8 446.6,419.6 448.4,420.4 450.3,421.3 452.2,422.1 454,422.9 455.9,423.7 457.8,424.5 459.7,425.3 461.6,426.2 463.5,427 465.4,427.8 467.3,428.6 469.2,429.5 471.5,429.6 473.3,429.5 475,429.3 476.6,429.1 478,428.9 479.5,428.6 480.9,428.4 482.3,428 483.6,427.7 484.9,427.3 486.4,426.9 487.9,426.3 489.3,425.8 491,425.1 492.3,424.5 494.2,423.5 495.9,422.6 497.6,421.5 499.2,420.5 500.7,419.4 501.9,418.5 502.8,417.8 504.1,416.7 505.4,415.5 506.5,414.4 507.8,413.2 508.9,412 509.9,410.8 510.9,409.6 511.9,408.3 512.8,407.1 513.7,405.9 514.6,404.6 515.4,403.3 516.1,402.1 516.8,400.8 517.5,399.5 518.2,398.2 518.8,396.8 519.3,395.5 519.8,394.2 520.3,392.8 520.8,391.5 521.1,390.1 521.5,388.7 521.8,387.3 522,385.9 522.2,384.5 522.4,382.4 522.4,380.2 522.4,378 522.2,376.5 522,374.9 521.7,373.4 521.4,371.9 521,370.6 520.7,369.4 520.1,367.8 519.5,366.2 518.9,364.9 518.4,363.7 517.6,362 517,360.9 516.2,359.4 515.4,358 514.7,356.8 513.9,355.3 513.2,354.2 512.2,352.8 511.5,351.6 510.6,350.2 509.8,349 509,347.8 508,346.3 507.3,345.4 506.2,343.8 505.5,342.8 504.6,341.5 503.6,340.2 502.3,338.5 501.5,337.5 500.8,336.6 500.1,335.7 499.3,334.8 498.6,333.9 497.8,333 496.9,332 496.1,331.1 495.2,330.2 494.3,329.2 493.3,328.2 492.4,327.3 490.8,326.7 489.1,326.1 487.5,325.5 485.9,324.9 484.3,324.4 482.7,323.8 481.1,323.2 479.5,322.6 477.9,322.1 476.3,321.5 474.7,320.9 473.1,320.3 471.5,319.8 470,319.2 468.4,318.6 466.8,318.1 465.3,317.5 463.7,316.9 462.1,316.4 460.6,315.8 459,315.3 457.5,314.7 455.9,314.1 454.4,313.6 452.8,313 451.3,312.5 449.7,311.9 448.2,311.4 446.7,310.8 445.2,310.3 443.6,309.7 442.1,309.2 440.6,308.6 439.1,308.1 437.6,307.5 436.1,307 434.6,306.5 433.1,305.9 431.6,305.4 429.9,305 427.9,305.2 425.6,305.5 424.1,306.2 423.3,307.1 422.5,308.1 421.7,309 421,309.9 420.2,310.8 419.4,311.8 418.6,312.7 417.8,313.6 417,314.6 416.2,315.5 415.4,316.5 414.6,317.4 413.8,318.4 413,319.4 412.2,320.3 411.4,321.3 410.6,322.3 409.8,323.2 408.9,324.2 408.1,325.2 407.3,326.2 406.4,327.2 405.6,328.2 404.8,329.2 403.9,330.2 403.1,331.2 402.2,332.2 401.4,333.2 400.5,334.2 399.7,335.3 398.8,336.3 397.9,337.3 397.1,338.3 396.2,339.4 395.3,340.4 394.4,341.5 393.6,342.5 392.7,343.6 391.8,344.6 390.9,345.7 390,346.8 389.1,347.8 388.2,348.9 387.3,350 386.4,351.1 385.5,352.2 384.5,353.2 383.6,354.3 382.7,355.4 381.8,356.5 380.8,357.7 379.9,358.8 378.9,359.9 378,361 377.1,362.1 376.1,363.3 375.1,364.4 374.2,365.6 373.2,366.7 372.3,367.8 371.3,369 370.3,370.2 369.3,371.3 368.3,372.5 367.4,373.7 366.4,374.9 365.4,376 364.4,377.2 364.3,378.8 365,380.5 365.6,381.9 366.2,382.9Z" fill="#a7065e" fill-rule="evenodd" stroke="#7466f0" stroke-width="0.75"/>
<path d="M373.9,387.1 375.2,388.5 376.9,389.3 378.6,390 380.3,390.7 382,391.5 383.7,392.2 385.4,392.9 387.1,393.7 388.8,394.4 390.5,395.2 392.2,395.9 393.9,396.7 395.6,397.4 397.4,398.2 399.1,398.9 400.8,399.7 402.6,400.4 404.3,401.2 406.1,402 407.8,402.7 409.6,403.5 411.3,404.3 413.1,405 414.9,405.8 416.6,406.6 418.4,407.4 420.2,408.1 422,408.9 423.8,409.7 425.6,410.5 427.4,411.3 429.2,412.1 431,412.8 432.8,413.6 434.6,414.4 436.5,415.2 438.3,416 440.1,416.8 442,417.6 443.8,418.4 445.7,419.2 447.5,420 449.4,420.8 451.2,421.7 453.1,422.5 455,423.3 456.9,424.1 458.7,424.9 460.6,425.8 462.9,426 465.2,426.2 467.5,426.2 469.9,426.2 471.7,426.1 473.5,426 475,425.9 476.7,425.6 478.2,425.4 479.6,425.1 480.9,424.8 483.1,424.2 484.5,423.8 486.1,423.2 487.7,422.5 489.3,421.8 490.6,421.2 492.4,420.2 494,419.2 495.6,418.1 496.6,417.4 497.7,416.5 498.7,415.7 499.7,414.8 501,413.7 502.2,412.5 503.3,411.4 504.4,410.2 505.5,409 506.5,407.8 507.4,406.7 508.4,405.3 509.3,404 510.1,402.8 510.9,401.5 511.7,400.2 512.4,399 513.1,397.7 513.7,396.4 514.3,395.1 514.9,393.7 515.4,392.4 515.9,391.1 516.3,389.7 516.7,388.4 517.1,387 517.4,385.6 517.6,384.2 517.8,382.1 517.9,379.9 517.9,378.1 517.8,376.4 517.5,374.8 517.3,373.4 516.9,372.1 516.6,370.8 516,369.1 515.3,367.4 514.6,365.7 513.9,364.3 513.3,363.1 512.3,361.5 511.3,359.7 510.2,357.9 509.6,356.9 508.5,355.3 507.8,354.2 506.9,352.8 506,351.6 505.3,350.4 504.3,348.9 503.1,347.1 502,345.6 501.3,344.5 500.4,343.2 499.4,341.9 498.7,340.9 497.6,339.4 496.9,338.3 496,337.2 494.9,335.7 494.1,334.8 493.4,333.9 492.6,333 491.8,332.1 491,331.1 490.2,330.2 489.3,329.3 488.3,328.3 487.3,327.3 486.2,326.3 485.1,325.3 484.2,324.5 482.7,323.8 481.1,323.2 479.5,322.6 477.9,322.1 476.3,321.5 474.7,320.9 473.1,320.3 471.5,319.8 470,319.2 468.4,318.6 466.8,318.1 465.3,317.5 463.7,316.9 462.1,316.4 460.6,315.8 459,315.3 457.5,314.7 455.9,314.1 454.4,313.6 452.8,313 451.3,312.5 449.7,311.9 448.2,311.4 446.7,310.8 445.2,310.3 443.6,309.7 442.1,309.2 440.6,308.6 439.1,308.1 437.6,307.5 436.2,307 434.4,307 432.9,307 431.1,307.1 429,307.3 427.5,307.5 425.7,307.7 424.1,308 422.1,308.5 421.4,309.4 420.6,310.4 419.8,311.3 419,312.2 418.2,313.2 417.4,314.1 416.6,315.1 415.8,316 415,317 414.2,317.9 413.4,318.9 412.6,319.8 411.8,320.8 411,321.8 410.2,322.8 409.3,323.7 408.5,324.7 407.7,325.7 406.9,326.7 406,327.7 405.2,328.7 404.3,329.7 403.5,330.7 402.7,331.7 401.8,332.7 400.9,333.7 400.1,334.7 399.2,335.8 398.4,336.8 397.5,337.8 396.6,338.9 395.8,339.9 394.9,340.9 394,342 393.1,343 392.2,344.1 391.3,345.2 390.4,346.2 389.5,347.3 388.6,348.4 387.7,349.4 386.8,350.5 385.9,351.6 385,352.7 384.1,353.8 383.1,354.9 382.2,356 381.3,357.1 380.4,358.2 379.4,359.3 378.5,360.5 377.5,361.6 376.6,362.7 375.6,363.8 374.7,365 373.7,366.1 372.7,367.3 371.8,368.4 370.8,369.6 369.8,370.7 368.8,371.9 367.8,373.1 367.2,374.4 367.6,376 368.2,377.9 369,379.7 369.7,381.2 370.3,382.2 371,383.4 371.8,384.5 372.8,385.8Z" fill="#950870" fill-rule="evenodd" stroke="#7466f0" stroke-width="0.75"/>
<path d="M383.2,391.2 384.7,392.3 386,393.2 387.9,394.1 389.6,394.8 391.3,395.6 393,396.3 394.8,397 396.5,397.8 398.2,398.6 400,399.3 401.7,400.1 403.4,400.8 405.2,401.6 406.9,402.4 408.7,403.1 410.4,403.9 412.2,404.7 414,405.4 415.8,406.2 417.5,407 419.3,407.7 421.1,408.5 422.9,409.3 424.7,410.1 426.5,410.9 428.3,411.7 430.1,412.4 431.9,413.2 433.7,414 435.6,414.8 437.4,415.6 439.2,416.4 441.1,417.2 442.9,418 444.7,418.8 446.6,419.6 448.4,420.4 450.5,421 452.6,421.4 454.7,421.8 456.4,422.1 457.9,422.4 459.6,422.7 461.2,422.9 463.5,423.1 465,423.2 466.9,423.4 469.3,423.4 471.4,423.4 473.2,423.3 474.9,423.1 476.4,422.9 477.9,422.6 479.2,422.4 480.5,422 482.3,421.5 483.9,420.9 485.4,420.3 486.9,419.6 488.7,418.7 490.4,417.7 491.9,416.6 493.4,415.5 494.7,414.5 496.1,413.3 497.1,412.4 497.9,411.6 499.1,410.4 499.9,409.6 500.7,408.6 501.8,407.4 502.7,406.2 503.6,405.1 504.6,403.7 505.5,402.5 506.3,401.2 507.1,400 507.9,398.7 508.6,397.4 509.3,396.1 509.9,394.9 510.5,393.6 511.1,392.2 511.6,391 512.2,389.6 512.6,388.2 513,386.9 513.4,385.5 513.7,384.1 513.9,382.8 514.1,380.8 514.2,379.2 514.1,377 514,375.4 513.7,373.9 513.4,372.5 513,371.3 512.5,369.9 511.8,368.2 511.2,367 510.5,365.5 509.6,364.1 508.9,362.8 508,361.5 507.1,360.1 506.3,359 505.2,357.3 504.5,356.4 503.5,354.9 502.6,353.6 501.8,352.5 500.8,350.9 499.6,349.2 499,348.3 498,346.8 497.3,345.6 496.5,344.4 495.5,343 494.9,342 493.8,340.5 492.8,339 492,337.8 491.2,336.7 490.1,335.3 489.3,334.3 488.4,333.1 487.3,331.8 486.3,330.7 485.6,329.8 484.6,328.8 483.8,328 482.6,326.8 481.5,325.8 480.2,324.7 478.8,323.6 477.5,322.6 476.1,321.7 475.1,321.1 473.9,320.6 472.3,320.1 470.8,319.5 469.2,318.9 467.6,318.4 466,317.8 464.5,317.2 462.9,316.7 461.3,316.1 459.8,315.5 458.2,315 456.7,314.4 455.1,313.9 453.6,313.3 452.1,312.7 450.5,312.2 449,311.6 447.5,311.1 445.9,310.5 444.4,310 443.1,309.5 441.1,309.2 439.3,309 437.5,308.9 435.6,308.8 433.7,308.8 431.6,308.8 429.9,309 428.5,309.1 426.4,309.5 425,309.7 423.3,310.2 421.5,310.7 419.8,311.3 419,312.2 418.2,313.2 417.4,314.1 416.6,315.1 415.8,316 415,317 414.2,317.9 413.4,318.9 412.6,319.8 411.8,320.8 411,321.8 410.2,322.8 409.3,323.7 408.5,324.7 407.7,325.7 406.9,326.7 406,327.7 405.2,328.7 404.3,329.7 403.5,330.7 402.7,331.7 401.8,332.7 400.9,333.7 400.1,334.7 399.2,335.8 398.4,336.8 397.5,337.8 396.6,338.9 395.8,339.9 394.9,340.9 394,342 393.1,343 392.2,344.1 391.3,345.2 390.4,346.2 389.5,347.3 388.6,348.4 387.7,349.4 386.8,350.5 385.9,351.6 385,352.7 384.1,353.8 383.1,354.9 382.2,356 381.3,357.1 380.4,358.2 379.4,359.3 378.5,360.5 377.5,361.6 376.6,362.7 375.6,363.8 374.7,365 373.7,366.1 372.7,367.3 371.8,368.4 370.8,369.6 370.2,370.9 370.3,372.5 370.5,374.2 371,376 371.6,377.8 372.1,379 372.7,380 373.4,381.1 374.2,382.3 375,383.3 376.1,384.7 377.3,386 378.6,387.2 379.9,388.4 380.9,389.3 381.9,390.1Z" fill="#840a82" fill-rule="evenodd" stroke="#7466f0" stroke-width="0.75"/>
<path d="M404.6,400.5 406.5,401.4 408.2,402.2 409.9,403 411.6,403.8 413.4,404.6 415.1,405.4 416.9,406.2 418.7,407 420.5,407.7 422.3,408.5 424.1,409.2 426,409.9 427.8,410.6 429.7,411.3 431.6,412 433.4,412.7 435.3,413.4 437.3,414 439.2,414.7 441.1,415.3 443.1,415.9 445.1,416.5 446.4,416.9 448,417.4 450.1,417.9 451.8,418.4 453.1,418.7 455.2,419.2 457.3,419.6 459.4,420 461.6,420.4 463.8,420.7 465.6,420.9 467.2,421 469.5,421.1 471.9,421.1 473.9,420.9 475.5,420.8 477,420.5 478.3,420.2 479.7,419.9 481.2,419.4 482.7,418.8 483.9,418.3 485.7,417.4 487.4,416.4 489,415.4 489.9,414.7 491.1,413.7 492.1,412.9 493,412.1 494.3,410.9 495.4,409.7 496.5,408.5 497.6,407.3 498.6,406.1 499.5,404.9 500.5,403.7 501.4,402.4 502.2,401.2 503,399.9 503.8,398.7 504.6,397.4 505.3,396.1 506,394.8 506.7,393.6 507.3,392.3 507.9,391 508.5,389.6 509,388.3 509.4,387 509.9,385.7 510.2,384.3 510.5,382.9 510.8,381.5 511,379.4 511.1,377.2 511,375.7 510.7,374.2 510.3,372.6 509.8,371.1 509.1,369.3 508.4,368 507.6,366.6 506.8,365.3 505.8,363.8 505.1,362.8 504.4,361.8 503.6,360.9 502.9,359.9 502.2,358.9 501.5,358 500.7,357 500,356.1 499.4,355.1 498.7,354.1 497.5,352.5 496.8,351.5 495.9,350.1 495.1,348.8 494.3,347.7 493.4,346.2 492.3,344.5 491.3,342.8 490.3,341.2 489.2,339.6 488.5,338.5 487.7,337.2 486.8,335.9 485.6,334.3 484.9,333.3 484,332.2 482.9,330.8 481.9,329.7 481,328.8 480.1,327.8 479,326.8 478.1,326 476.9,324.9 475.6,323.9 474.2,323 472.9,322.1 471.5,321.2 470.1,320.5 468.6,319.7 467.2,319 465.7,318.3 464.2,317.6 462.7,317 461.2,316.3 459.6,315.8 458.1,315.2 456.5,314.7 454.9,314.1 453.3,313.6 451.7,313.2 450.1,312.7 448.5,312.3 446.8,311.9 445.1,311.6 443.4,311.2 441.7,310.9 439.9,310.7 438.1,310.5 436.3,310.3 434.4,310.2 432.4,310.2 430.5,310.4 428.2,310.7 425.9,311.1 424.6,311.5 423.2,311.9 421.8,312.4 420.3,313 418.7,313.8 417.1,314.6 416.2,315.5 415.4,316.5 414.6,317.4 413.8,318.4 413,319.4 412.2,320.3 411.4,321.3 410.6,322.3 409.8,323.2 408.9,324.2 408.1,325.2 407.3,326.2 406.4,327.2 405.6,328.2 404.8,329.2 403.9,330.2 403.1,331.2 402.2,332.2 401.4,333.2 400.5,334.2 399.7,335.3 398.8,336.3 397.9,337.3 397.1,338.3 396.2,339.4 395.3,340.4 394.4,341.5 393.6,342.5 392.7,343.6 391.8,344.6 390.9,345.7 390,346.8 389.1,347.8 388.2,348.9 387.3,350 386.4,351.1 385.5,352.2 384.5,353.2 383.6,354.3 382.7,355.4 381.8,356.5 380.8,357.7 379.9,358.8 378.9,359.9 378,361 377.1,362.1 376.1,363.3 375.1,364.4 374.2,365.6 373.5,366.8 373.2,368.3 373,369.7 373,371.3 373.1,372.9 373.3,374.5 373.9,376.4 374.7,378.2 375.5,379.6 376.3,380.7 377.2,381.9 378.4,383.2 379.6,384.5 380.9,385.7 382.3,386.8 383.6,387.9 385.1,389 386.5,390 388,391 389.5,392 390.5,392.6 391.8,393.5 393.4,394.4 394.9,395.3 396.5,396.2 398.1,397.1 399.8,398 401.4,398.9 403.1,399.7Z" fill="#730c93" fill-rule="evenodd" stroke="#7466f0" stroke-width="0.75"/>
<path d="M400.4,395.3 402.3,396.2 403.9,397.1 405.6,397.9 407.3,398.7 409,399.5 410.7,400.3 412.5,401.1 414.2,401.9 416,402.7 417.7,403.4 419.5,404.2 421.3,405 423.1,405.7 424.9,406.5 426.7,407.2 428.5,407.9 430.4,408.6 432.2,409.3 434.1,410 436,410.7 437.9,411.4 439.7,412.1 441.7,412.7 443.6,413.4 445.5,414 447.5,414.6 449.4,415.2 451.4,415.8 453.4,416.4 455.5,416.9 457.5,417.4 459.6,417.8 461.5,418.2 463.9,418.6 466.1,418.9 468.3,419.1 470.6,419.2 473,419.2 475.3,418.9 476.7,418.7 478.1,418.4 479.7,417.9 481.2,417.3 482.4,416.8 484.2,415.9 485.8,414.9 487.2,413.8 488.6,412.7 489.9,411.6 491.1,410.4 492.2,409.2 493.3,408 494.4,406.8 495.4,405.6 496.3,404.4 497.2,403.2 498.1,401.9 499,400.7 499.8,399.4 500.6,398.1 501.4,396.9 502.2,395.6 502.9,394.3 503.6,393.1 504.2,391.8 504.8,390.5 505.4,389.2 506,387.9 506.5,386.6 507,385.3 507.4,383.9 507.8,382.6 508.1,381.2 508.3,379.8 508.5,377.7 508.4,375.5 508.2,373.9 507.8,372.6 507.1,370.6 506.5,369.4 505.6,367.9 504.8,366.8 503.6,365.2 502.7,364 501.8,363 501,361.9 500.1,360.9 499.3,359.9 498.4,358.9 497.6,357.9 496.8,356.9 496,355.9 495.3,355 494.7,354 493.5,352.3 492.8,351.3 491.9,349.8 491.2,348.7 490.4,347.3 489.7,346.1 488.9,344.8 488.2,343.6 487.5,342.3 486.8,341.1 486,339.8 485.3,338.6 484.5,337.4 483.7,336.1 483,335.1 482,333.6 481.3,332.6 480.4,331.4 479.3,330.1 478.3,329 477.4,328.1 476.4,327.1 475.1,326 473.8,324.9 472.5,324 471.1,323.1 469.7,322.3 468.3,321.5 466.9,320.7 465.4,320 463.9,319.3 462.4,318.7 460.9,318 459.4,317.4 457.8,316.8 456.2,316.3 454.7,315.8 453.1,315.2 451.5,314.7 449.9,314.3 448.3,313.8 446.6,313.4 445,313 443.6,312.7 441.6,312.3 440.1,312.1 438.1,311.8 436.3,311.6 434.4,311.5 432.4,311.4 430.5,311.6 428.1,311.9 426.1,312.4 424.3,313 422.8,313.6 421.3,314.3 419.9,315 418.6,315.8 417.3,316.6 416.1,317.4 415,318.2 413.9,319 412.8,319.9 411.8,320.8 411,321.8 410.2,322.8 409.3,323.7 408.5,324.7 407.7,325.7 406.9,326.7 406,327.7 405.2,328.7 404.3,329.7 403.5,330.7 402.7,331.7 401.8,332.7 400.9,333.7 400.1,334.7 399.2,335.8 398.4,336.8 397.5,337.8 396.6,338.9 395.8,339.9 394.9,340.9 394,342 393.1,343 392.2,344.1 391.3,345.2 390.4,346.2 389.5,347.3 388.6,348.4 387.7,349.4 386.8,350.5 385.9,351.6 385,352.7 384.1,353.8 383.1,354.9 382.2,356 381.3,357.1 380.4,358.2 379.4,359.3 378.5,360.5 377.9,361.7 377.4,363 376.8,364.4 376.4,365.7 376,367.1 375.6,368.5 375.4,369.9 375.3,371.5 375.3,373.1 375.7,374.8 376.2,376.4 376.9,377.7 377.5,378.8 378.4,380 379.6,381.3 380.4,382.2 381.7,383.3 382.9,384.4 384.4,385.6 385.4,386.3 386.5,387.1 388,388.1 389.5,389.1 391,390 392.6,391 394.2,391.9 395.7,392.8 397.4,393.7 399,394.5Z" fill="#640da3" fill-rule="evenodd" stroke="#7466f0" stroke-width="0.75"/>
<path d="M401.7,393.3 402.9,393.9 404.5,394.7 406.2,395.5 407.9,396.3 409.6,397.1 411.3,397.9 413.1,398.7 414.8,399.5 416.5,400.3 418.3,401 420.1,401.8 421.8,402.5 423.6,403.3 425.4,404 427.2,404.8 429,405.5 430.9,406.2 432.7,406.9 434.5,407.7 436.4,408.4 438.1,409 440.1,409.8 442,410.4 443.9,411.1 445.8,411.8 447.7,412.4 449,412.8 450.7,413.4 452.6,414 454.6,414.6 455.9,414.9 457.6,415.4 459.6,415.9 461.7,416.4 463.8,416.8 465.9,417.2 467.7,417.4 469.2,417.6 471.5,417.7 474,417.6 475.7,417.4 477,417.1 479.3,416.4 481.1,415.6 482.9,414.5 484.5,413.5 485.8,412.4 487.1,411.2 488.3,410.1 489.4,408.9 490.4,407.8 491.6,406.5 492.5,405.3 493.5,404 494.4,402.8 495.3,401.5 496.1,400.3 497,399 497.8,397.8 498.6,396.5 499.3,395.3 500.1,394 500.8,392.7 501.5,391.5 502.1,390.2 502.8,388.9 503.4,387.6 503.9,386.3 504.4,385 504.9,383.7 505.3,382.4 505.7,381 506,379.7 506.2,378.3 506.3,376.1 506.2,374.6 505.9,373 505.3,371.4 504.3,369.6 503.1,367.8 502.1,366.6 501.2,365.6 500.1,364.4 499.2,363.5 498,362.2 496.9,361.1 496,360.1 494.9,358.9 494.1,358 493.2,356.9 492.5,355.9 491.8,355 490.7,353.4 490,352.3 489.1,350.9 488.4,349.6 487.6,348.3 487,347.1 486.2,345.7 485.3,343.9 484.4,342.2 483.5,340.5 482.6,338.9 481.6,337.2 480.7,335.6 479.7,334 478.6,332.5 477.8,331.4 477.1,330.4 475.9,329.1 474.8,327.9 473.5,326.8 472.3,325.7 470.9,324.8 469.9,324.1 468.9,323.5 467.4,322.7 466,321.9 464.5,321.2 463,320.5 461.5,319.9 460,319.2 458.4,318.6 456.9,318 455.3,317.5 453.8,316.9 452.2,316.4 450.6,315.9 449,315.4 447.4,315 445.8,314.5 444.1,314.1 442.4,313.7 440.8,313.3 439,313 437.3,312.8 435.5,312.6 433.6,312.5 431.6,312.5 430,312.6 428.3,312.9 426.8,313.3 425.1,313.9 423.6,314.6 422.5,315.1 421,316 419.7,316.8 418.6,317.7 417.4,318.5 416.4,319.3 415.3,320.2 414.2,321.1 413.2,322 412.2,322.9 411.2,323.8 410.2,324.7 409.3,325.7 408.3,326.6 407.4,327.5 406.4,328.5 405.5,329.5 404.5,330.4 403.6,331.4 402.7,332.4 401.8,333.4 400.9,334.4 400,335.4 399.1,336.4 398.2,337.4 397.3,338.4 396.4,339.5 395.5,340.5 394.6,341.5 393.8,342.6 392.9,343.7 392,344.7 391.2,345.8 390.3,346.9 389.5,348 388.6,349.1 387.8,350.2 387,351.3 386.2,352.5 385.4,353.6 384.6,354.8 383.9,355.9 383.1,357.1 382.4,358.3 381.7,359.5 381,360.7 380.3,362 379.7,363.2 379.1,364.5 378.6,365.8 378.1,367.2 377.7,368.6 377.3,370 377.2,371.5 377.2,373.1 377.5,374.7 378.2,376.6 379,377.8 379.7,378.8 380.9,380.1 382.2,381.3 383.5,382.4 384.9,383.5 386.3,384.5 387.8,385.5 389.3,386.5 390.8,387.4 392.4,388.3 393.4,388.9 394.7,389.7 396.3,390.5 397.9,391.4 399.6,392.2 401.2,393.1Z" fill="#550fb2" fill-rule="evenodd" stroke="#7466f0" stroke-width="0.75"/>
<path d="M398.1,389.3 400,390.2 401.6,391 403.3,391.9 404.9,392.7 406.6,393.5 408.3,394.2 410,395 411.7,395.8 413.5,396.6 415.2,397.3 416.9,398.1 418.7,398.9 420.4,399.6 422.2,400.4 424,401.1 425.8,401.9 427.6,402.6 429.4,403.4 431.2,404.1 433,404.8 434.8,405.5 436.7,406.3 438.5,407 440.4,407.7 442.2,408.4 444.1,409.1 446,409.8 447.9,410.5 449.8,411.1 451.7,411.8 453.6,412.4 455.1,412.9 456.6,413.4 458.5,413.9 460.5,414.5 462.6,415 464.6,415.5 466.7,415.9 468.9,416.2 471.2,416.4 473.3,416.4 475,416.2 476.4,416 478.6,415.2 480.5,414.3 482,413.3 483.4,412.2 484.7,411.1 485.9,409.9 487,408.7 488.1,407.5 489.1,406.3 490.1,405.1 491,403.8 491.9,402.6 492.8,401.3 493.6,400.1 494.4,398.8 495.3,397.5 496,396.3 496.8,395 497.6,393.8 498.3,392.5 499,391.2 499.7,390 500.4,388.7 501,387.4 501.6,386.2 502.2,384.9 502.7,383.6 503.2,382.4 503.6,381 504,379.6 504.3,378.3 504.5,376.3 504.5,374.7 504.2,373.2 503.5,371.4 502.8,370.1 501.6,368.5 500.5,367.4 499.6,366.4 498.2,365.1 496.8,363.9 495.4,362.7 494.1,361.4 492.9,360.2 491.8,359.1 490.9,358.1 490.1,357.1 489.3,356.1 488.7,355.2 488,354.2 487,352.5 486,350.8 485.2,349.1 484.3,347.4 483.7,346.2 483.1,345 482.4,343.5 481.6,341.8 480.8,340.2 479.9,338.6 479.3,337.4 478.7,336.1 478,334.9 477.3,333.7 476.6,332.6 475.6,331.2 474.5,329.7 473.3,328.5 472.2,327.4 470.8,326.3 469.5,325.3 468.1,324.5 466.7,323.7 465.2,322.9 463.8,322.2 462.2,321.6 460.7,320.9 459.2,320.3 457.7,319.7 456.1,319.1 454.5,318.5 453,318 451.4,317.4 449.8,316.9 448.2,316.4 446.6,315.9 445,315.5 443.4,315 441.7,314.6 440,314.2 438.3,313.9 436.6,313.6 434.8,313.4 432.9,313.3 430.9,313.4 429.3,313.6 427.3,314.1 425.9,314.6 424.3,315.4 423,316.2 421.8,317 420.7,317.8 419.6,318.7 418.5,319.5 417.5,320.4 416.5,321.3 415.5,322.2 414.5,323.1 413.6,324 412.6,325 411.7,325.9 410.7,326.9 409.8,327.8 408.9,328.8 408,329.8 407.1,330.7 406.1,331.7 405.2,332.7 404.3,333.7 403.4,334.7 402.5,335.7 401.7,336.7 400.8,337.7 399.9,338.8 399,339.8 398.1,340.8 397.2,341.9 396.4,342.9 395.5,344 394.6,345 393.7,346.1 392.9,347.2 392,348.3 391.2,349.4 390.3,350.5 389.5,351.6 388.6,352.7 387.8,353.9 387,355 386.2,356.2 385.5,357.3 384.7,358.5 383.9,359.7 383.2,360.9 382.6,362 381.8,363.4 381.2,364.6 380.5,365.9 380,367.2 379.5,368.5 379.1,369.9 378.8,371.4 378.7,372.9 378.9,374.4 379.4,375.6 380.1,377 381.2,378.3 382.5,379.6 383.8,380.7 385.2,381.7 386.6,382.7 388.1,383.7 389.6,384.6 390.9,385.4 391.9,386 393.5,386.9 395.1,387.7 396.7,388.6Z" fill="#4810c1" fill-rule="evenodd" stroke="#7466f0" stroke-width="0.75"/>
<path d="M401.8,389.2 403.5,390 405.2,390.8 406.9,391.6 408.6,392.4 410.3,393.2 412,393.9 413.7,394.7 415.4,395.4 417.2,396.2 418.9,397 420.7,397.7 422.4,398.5 424.2,399.2 426,400 427.8,400.7 429.5,401.4 431.3,402.2 433.1,402.9 435,403.6 436.8,404.4 438.6,405.1 440.4,405.8 441.9,406.4 443.2,406.9 445.1,407.6 446.9,408.3 448.8,409 450.7,409.7 452.6,410.4 454.5,411.1 456.2,411.7 458.4,412.4 460.3,413 462.3,413.6 464.3,414.1 466.4,414.6 468.5,415 470.7,415.3 472.9,415.4 474.6,415.2 476,415 478.2,414.2 479.9,413.2 481.3,412.2 482.6,411 483.8,409.8 484.9,408.6 485.9,407.4 486.9,406.2 487.9,405 488.8,403.7 489.7,402.5 490.5,401.2 491.4,399.9 492.2,398.7 493,397.4 493.8,396.2 494.6,394.9 495.3,393.6 496.1,392.4 496.8,391.1 497.5,389.9 498.2,388.6 498.9,387.4 499.5,386.1 500.2,384.8 500.7,383.5 501.3,382.3 501.8,381 502.2,379.7 502.6,378.3 502.9,377 503.1,375.1 502.9,373.5 502.2,371.6 501.5,370.5 500.2,369 498.8,367.7 497.4,366.5 495.9,365.3 494.9,364.5 493.8,363.6 492.3,362.5 490.9,361.3 489.6,360 488.3,358.6 487.3,357.4 486.6,356.4 485.5,354.8 484.9,353.7 484.1,352.1 483.2,350.4 482.4,348.7 481.9,347.5 481.4,346.3 480.7,344.7 479.9,343.1 479.4,341.9 478.9,340.8 478.1,339.2 477.4,337.6 476.6,336 476,334.8 475.4,333.6 474.6,332.4 473.8,331.2 473.1,330.2 472,328.9 470.8,327.7 469.5,326.7 468.2,325.8 466.8,325 465.3,324.2 463.8,323.5 462.3,322.8 460.8,322.1 459.3,321.5 457.7,320.9 456.2,320.3 454.6,319.7 453.1,319.2 451.5,318.6 449.9,318.1 448.3,317.6 446.7,317 445.1,316.6 443.5,316.1 441.9,315.6 440.3,315.2 438.6,314.8 436.9,314.5 435.1,314.2 433.3,314 431.3,314 429.5,314.3 427.8,314.8 426.2,315.5 424.8,316.2 423.7,317 422.6,317.9 421.5,318.7 420.5,319.6 419.5,320.5 418.5,321.4 417.5,322.3 416.6,323.2 415.6,324.2 414.7,325.1 413.8,326.1 412.9,327 412,328 411.1,329 410.2,329.9 409.3,330.9 408.4,331.9 407.5,332.9 406.6,333.9 405.7,334.9 404.8,335.9 404,336.9 403.1,338 402.2,339 401.3,340 400.4,341.1 399.6,342.1 398.7,343.1 397.8,344.2 396.9,345.3 396,346.3 395.2,347.4 394.3,348.5 393.4,349.6 392.6,350.7 391.7,351.8 390.9,352.9 390,354 389.2,355.1 388.4,356.3 387.6,357.4 386.8,358.6 386,359.8 385.2,361 384.5,362.2 383.7,363.4 383,364.6 382.3,365.9 381.7,367.1 381.1,368.4 380.6,369.8 380.2,371.2 380,372.7 380.2,374.2 380.9,376 382,377.4 383.2,378.6 384.6,379.7 386,380.7 387.5,381.6 389,382.6 390.5,383.4 391.7,384.1 392.9,384.7 394.5,385.6 396.1,386.4 397.7,387.2 399.4,388 401,388.8Z" fill="#3b11ce" fill-rule="evenodd" stroke="#7466f0" stroke-width="0.75"/>
<path d="M401.8,387.6 403.6,388.4 405.3,389.2 407,390 408.7,390.7 410.4,391.5 412.1,392.2 413.8,393 415.5,393.7 417.3,394.5 419,395.3 420.7,396 422.5,396.7 424.3,397.5 426,398.2 427.8,399 429.6,399.7 431.4,400.5 433.2,401.2 435,401.9 436.8,402.7 438.6,403.4 440.4,404.1 442.3,404.9 444.1,405.6 445.9,406.3 447.8,407.1 449.6,407.8 451.5,408.5 453.4,409.2 455.3,409.9 457.2,410.6 459.1,411.3 461,411.9 463,412.5 465,413.1 466.5,413.5 468,413.9 470.1,414.3 472.3,414.5 474.6,414.4 475.9,414.1 477.8,413.3 479.4,412.2 480.7,411.1 481.9,409.9 482.8,408.8 484,407.4 485,406.2 485.9,405 486.8,403.7 487.7,402.5 488.5,401.3 489.4,399.9 490.2,398.7 491,397.4 491.7,396.1 492.5,394.9 493.3,393.6 494.1,392.4 494.8,391.1 495.6,389.9 496.3,388.6 497,387.4 497.7,386.1 498.2,385 498.9,383.6 499.5,382.3 500.1,381 500.6,379.8 501.1,378.5 501.5,377.1 501.7,375.8 501.7,373.7 501.1,371.9 500.3,370.7 498.9,369.3 498,368.6 496.7,367.6 495.2,366.5 493.7,365.5 492.2,364.4 490.7,363.4 489.4,362.4 487.8,361.1 486.6,359.9 485.7,358.9 484.9,357.9 484.2,356.9 483.2,355.1 482.3,353.4 481.5,351.8 480.9,350.4 480.2,348.6 479.5,347 479,345.6 478.2,343.8 477.6,342.3 477,340.8 476.3,339.1 475.6,337.6 475,336.3 474.2,334.5 473.4,332.9 472.4,331.3 471.4,329.8 470.3,328.6 469,327.5 467.6,326.5 466.2,325.7 464.8,325 463.3,324.3 461.8,323.6 460.2,322.9 458.7,322.3 457.1,321.7 455.6,321.1 454,320.5 452.4,320 450.9,319.4 449.3,318.9 447.7,318.3 446.1,317.8 444.6,317.3 442.9,316.8 441.3,316.3 439.7,315.9 438.1,315.5 436.4,315.1 434.6,314.8 432.8,314.6 430.8,314.7 428.6,315.2 427.1,315.8 425.9,316.6 424.7,317.4 423.7,318.3 422.7,319.2 421.7,320.1 420.7,321 419.8,321.9 418.8,322.8 417.9,323.8 417,324.7 416.1,325.7 415.2,326.6 414.4,327.6 413.5,328.6 412.6,329.6 411.8,330.5 410.9,331.5 410,332.5 409.1,333.5 408.2,334.5 407.3,335.5 406.5,336.5 405.6,337.6 404.7,338.6 403.9,339.6 403,340.7 402.1,341.7 401.2,342.8 400.3,343.8 399.5,344.9 398.6,345.9 397.7,347 396.8,348.1 395.9,349.1 395,350.2 394.2,351.3 393.3,352.4 392.5,353.5 391.6,354.7 390.8,355.8 389.9,356.9 389.2,357.8 388.3,359.2 387.4,360.4 386.6,361.6 385.9,362.7 385.1,364 384.3,365.2 383.6,366.4 382.9,367.7 382.3,368.9 381.7,370.3 381.3,371.7 381.1,373.2 381.5,374.9 382.2,376 383.3,377.2 384.6,378.3 385.8,379.1 386.7,379.8 388.2,380.7 389.8,381.6 391.3,382.4 392.9,383.3 394.5,384.1 396.2,384.9 397.8,385.7 399.4,386.5 401.1,387.3Z" fill="#3013d9" fill-rule="evenodd" stroke="#7466f0" stroke-width="0.75"/>
<path d="M396.5,383.7 397.7,384.3 399.4,385.1 401.1,385.8 402.7,386.6 404.4,387.3 406.1,388.1 407.8,388.9 409.5,389.6 411.2,390.4 412.9,391.1 414.6,391.8 416.4,392.6 418.1,393.3 419.8,394.1 421.6,394.8 423.3,395.6 425.1,396.3 426.9,397 428.6,397.8 430.4,398.5 432.2,399.3 434,400 435.8,400.8 437.6,401.5 439.4,402.2 441.2,403 443,403.7 444.8,404.5 446.7,405.2 448.5,406 450.3,406.7 452.2,407.4 454.1,408.1 455.9,408.9 457.8,409.6 459.7,410.3 461.6,411 463.5,411.6 465.4,412.2 467.5,412.8 469.6,413.3 471.7,413.6 474,413.6 475.4,413.3 476.8,412.8 478.3,411.7 479.6,410.6 480.7,409.4 481.7,408.2 482.7,406.9 483.7,405.7 484.6,404.4 485.5,403.2 486.3,401.9 487.2,400.6 488,399.3 488.7,398.1 489.5,396.8 490.3,395.5 491.1,394.3 491.8,393 492.6,391.8 493.4,390.5 494.1,389.3 494.9,388 495.6,386.8 496.3,385.6 497,384.3 497.6,383.1 498.2,381.8 498.8,380.5 499.3,379.3 499.9,378 500.3,376.7 500.6,375.4 500.6,373.6 500.2,372.3 499.6,371.3 498.4,370.2 496.9,369 495.4,368 493.8,367 492.2,366 490.7,365.1 489.1,364.1 487.6,363.1 486.1,362 484.8,360.8 483.6,359.5 482.8,358.5 481.9,357 481.3,355.8 480.5,354.3 479.8,352.5 479.3,351.3 478.8,350.1 478.3,348.5 477.8,347.3 477.1,345.4 476.5,343.8 475.9,342.4 475.3,340.7 474.8,339.5 474.1,337.7 473.5,336.1 472.9,334.8 472.1,333.1 471.3,331.5 470.3,330 469.2,328.8 467.9,327.7 466.4,326.8 465.1,326.1 463.5,325.3 462,324.6 460.5,324 458.9,323.3 457.4,322.7 455.8,322.2 454.2,321.6 452.7,321 451.1,320.4 449.5,319.9 448,319.3 446.4,318.8 444.8,318.2 443.2,317.7 441.6,317.2 440,316.7 438.5,316.3 436.7,315.9 435.1,315.5 433.3,315.2 431.4,315.2 429.5,315.5 428,316.2 426.8,317 425.7,317.8 424.7,318.7 423.7,319.6 422.8,320.5 421.9,321.4 420.9,322.3 420,323.3 419.1,324.2 418.2,325.2 417.4,326.1 416.5,327.1 415.7,328.1 414.8,329.1 414,330.1 413.1,331.1 412.3,332.1 411.4,333.1 410.5,334.1 409.6,335.1 408.7,336.1 407.9,337.1 407,338.1 406.2,339.2 405.3,340.2 404.5,341.2 403.6,342.3 402.7,343.3 401.8,344.4 400.9,345.4 400,346.5 399.1,347.6 398.2,348.6 397.4,349.7 396.5,350.8 395.6,351.9 394.7,353 393.9,354.1 393,355.2 392.1,356.3 391.3,357.5 390.4,358.6 389.6,359.8 388.7,360.9 387.9,362 387.1,363.3 386.3,364.5 385.5,365.7 384.8,366.9 384,368.1 383.3,369.4 382.7,370.7 382.2,372.1 382.1,373.6 382.7,375.2 383.8,376.5 385.2,377.6 386.6,378.5 388.1,379.4 389.7,380.3 391.3,381.1 392.9,381.9 394.5,382.7 396.1,383.5Z" fill="#2713e2" fill-rule="evenodd" stroke="#7466f0" stroke-width="0.75"/>
<path d="M389.7,379.2 391.1,379.9 392.7,380.7 394.3,381.5 396,382.2 397.6,383 399.3,383.8 400.9,384.5 402.6,385.3 404.3,386 406,386.7 407.7,387.5 409.4,388.2 411.1,389 412.8,389.7 414.5,390.5 416.3,391.2 418,391.9 419.7,392.7 421.5,393.4 423.2,394.2 425,394.9 426.7,395.6 428.5,396.4 430.3,397.1 432,397.9 433.8,398.6 435.6,399.4 437.4,400.1 439.2,400.8 441,401.6 442.8,402.3 444.6,403.1 446.4,403.8 448.2,404.6 450.1,405.4 451.9,406.1 453.7,406.8 455.6,407.6 457.5,408.3 459.3,409 461.2,409.7 463.1,410.4 465,411.1 467,411.7 469,412.2 471.1,412.7 473.1,412.9 474.6,412.7 476.1,412.1 477.3,411.3 478.5,410.2 479.6,408.9 480.6,407.7 481.5,406.4 482.5,405.2 483.4,403.9 484.3,402.7 485.1,401.4 485.9,400.1 486.7,398.8 487.4,397.5 488.2,396.3 489,395 489.7,393.7 490.5,392.5 491.3,391.2 492,390 492.8,388.8 493.6,387.5 494.3,386.3 495.1,385.1 495.7,383.8 496.4,382.6 497,381.3 497.6,380.1 498.2,378.8 498.7,377.5 499.2,376.3 499.6,374.9 499.4,372.7 498.6,371.5 497.5,370.5 496.4,369.8 494.9,368.8 493.3,367.9 491.6,367 490.6,366.4 489.2,365.7 487.6,364.8 486.5,364.1 485.3,363.3 484.1,362.5 483.1,361.7 481.9,360.3 481.1,359.2 480.3,357.8 479.6,356.5 478.9,355 478.3,353.3 477.8,352 477.2,350.1 476.7,348.9 476.2,347 475.7,345.8 475,343.9 474.4,342.4 473.9,340.9 473.3,339.3 472.8,338 472.2,336.3 471.7,335.1 471,333.3 470.3,331.8 469.7,330.7 468.6,329.4 467.4,328.3 466,327.4 464.5,326.6 463.1,325.9 461.5,325.3 460,324.6 458.4,324 456.9,323.4 455.3,322.8 453.7,322.2 452.2,321.6 450.6,321.1 449,320.5 447.5,320 445.9,319.4 444.3,318.9 442.7,318.3 441.2,317.8 439.6,317.3 437.9,316.9 436.3,316.4 434.6,316 432.9,315.8 430.9,315.8 429.6,316.1 428.2,316.9 427.1,317.7 426.1,318.6 425.2,319.5 424.2,320.4 423.3,321.3 422.4,322.3 421.5,323.2 420.6,324.1 419.8,325.1 418.9,326.1 418.1,327 417.3,328 416.4,329 415.6,330 414.8,331 413.9,332 413.1,333 412.2,334 411.3,335 410.4,336.1 409.6,337.1 408.7,338.1 407.9,339.1 407,340.2 406.2,341.2 405.3,342.3 404.5,343.3 403.6,344.4 402.7,345.4 401.8,346.5 400.9,347.5 400,348.6 399.1,349.7 398.2,350.8 397.3,351.9 396.4,353 395.6,354.1 394.7,355.2 393.8,356.3 392.9,357.4 392.1,358.5 391.2,359.7 390.3,360.8 389.5,362 388.6,363.1 387.8,364.3 387,365.5 386.2,366.7 385.4,367.9 384.7,369.2 384,370.4 383.4,371.8 383.1,373.2 383.7,375 385,376.4 386.5,377.3 388,378.2 389.5,379.1Z" fill="#2214e8" fill-rule="evenodd" stroke="#7466f0" stroke-width="0.75"/>
<path d="M392.4,379.5 394.1,380.3 395.8,381 397.4,381.8 399.1,382.5 400.7,383.3 402.4,384 404.1,384.8 405.8,385.5 407.5,386.2 409.2,386.9 410.9,387.7 412.6,388.4 414.4,389.1 416.1,389.9 417.8,390.6 419.6,391.3 421.3,392.1 423,392.9 424.8,393.6 426.6,394.3 428.3,395 430.1,395.7 431.8,396.5 433.6,397.3 435.4,398 437.1,398.8 439,399.5 440.8,400.2 442.6,400.9 444.4,401.7 446.2,402.5 448,403.3 449.8,404.1 451.6,404.8 453.4,405.5 455.3,406.3 457.1,407 459,407.8 460.8,408.5 462.7,409.3 464.6,409.9 466.5,410.6 468.5,411.1 469.8,411.5 471.6,411.9 473.9,411.9 475.4,411.4 476.8,410.2 477.9,409 478.9,407.8 479.8,406.5 480.8,405.3 481.7,404 482.6,402.8 483.5,401.5 484.3,400.3 485.1,399 485.8,397.7 486.5,396.4 487.3,395.1 488,393.8 488.8,392.6 489.6,391.3 490.3,390.1 491.1,388.9 491.9,387.6 492.7,386.4 493.5,385.2 494.2,384 494.8,382.7 495.5,381.5 496.1,380.2 496.7,379 497.3,377.7 497.8,376.5 498.3,375.2 498.5,373.8 498.1,372.4 496.7,371.1 495.2,370.1 493.5,369.2 492.4,368.5 491.1,367.8 489.4,367 487.8,366.2 486.3,365.5 484.5,364.5 483,363.5 481.6,362.4 480.3,361.1 479.6,360 478.7,358.6 478.2,357.4 477.5,355.7 476.9,354.1 476.4,352.5 475.9,351 475.4,349.5 475.1,348.2 474.5,346.4 474.1,345.1 473.4,343.3 473,342.2 472.3,340.3 471.7,338.8 471.2,337.3 470.8,335.8 470.3,334.3 469.7,332.8 469.1,331.5 468.4,330.4 467.6,329.5 466.3,328.4 464.8,327.6 463.3,326.9 461.8,326.2 460.3,325.6 458.7,324.9 457.2,324.3 455.6,323.8 454,323.2 452.4,322.6 450.9,322 449.3,321.4 447.8,320.9 446.2,320.3 444.6,319.8 443.1,319.2 441.5,318.7 439.9,318.1 438.3,317.7 436.7,317.2 435,316.8 433.3,316.5 431.4,316.4 429.8,316.8 428.6,317.6 427.5,318.5 426.6,319.4 425.7,320.3 424.8,321.3 423.9,322.2 423,323.1 422.2,323.9 421.2,325 420.4,326 419.5,327 418.8,328 418,329 417.2,330 416.4,331 415.5,332 414.7,333 413.8,334 413,335 412.1,336 411.2,337 410.3,338 409.5,339.1 408.7,340.1 407.9,341.2 407,342.3 406.2,343.3 405.3,344.4 404.4,345.4 403.4,346.4 402.5,347.5 401.6,348.5 400.7,349.6 399.8,350.7 398.9,351.8 398,352.9 397.2,354 396.3,355.1 395.4,356.2 394.5,357.3 393.6,358.4 392.7,359.6 391.9,360.7 391,361.8 390.1,363 389.3,364.2 388.6,365.2 387.7,366.6 386.9,367.8 386.1,369 385.4,370.2 384.7,371.5 384.2,372.9 384.5,374.3 385.7,375.6 387.1,376.6 388.6,377.5 390.1,378.3 391.7,379.2Z" fill="#2214e8" fill-rule="evenodd" stroke="#7466f0" stroke-width="0.75"/>
<path d="M392.9,379 391.4,378.1 389.9,377.2 388.4,376.3 387,375.3 386,374.4 385.5,373 386.1,371.3 386.8,370.1 387.6,368.8 388.3,367.6 389.1,366.4 389.8,365.1 390.5,363.9 391.4,362.8 392.3,361.6 393.2,360.5 394,359.3 394.9,358.2 395.8,357.1 396.7,356 397.6,354.9 398.5,353.8 399.4,352.7 400.3,351.6 401.2,350.5 402.1,349.4 403,348.4 403.9,347.3 404.9,346.3 405.8,345.3 406.7,344.2 407.5,343.3 408.4,342.1 409.2,341 410,340 410.8,338.9 411.6,337.9 412.5,336.9 413.5,335.9 414.4,334.9 415.3,333.9 416.2,332.9 417,331.9 417.8,330.9 418.5,329.8 419.3,328.8 420,327.8 420.7,326.8 421.6,325.8 422.5,324.9 423.5,323.9 424.5,323 425.4,322.1 426.3,321.2 427.2,320.2 428.1,319.3 429.2,318.5 430.3,317.6 431.7,317.2 433.6,317.3 435.4,317.6 437.1,318 438.7,318.4 440.1,318.7 441.9,319.4 443.4,320 445,320.6 446.6,321.1 448.2,321.6 449.8,322.2 451.3,322.8 452.8,323.4 454.4,324 456,324.6 457.6,325.1 459.1,325.7 460.7,326.4 462.1,327.2 463.6,327.9 465.1,328.6 466.5,329.5 467.7,330.7 468.3,331.7 469,333.2 469.4,334.7 469.9,336.1 470.3,337.6 470.8,339 471.3,340.6 471.9,342.1 472.5,343.7 473.1,345 473.6,346.8 474,348.2 474.4,349.8 474.8,351.3 475.2,352.7 475.7,354.4 476.2,355.9 476.9,357.6 477.5,358.8 478.2,360.2 479,361.4 480.2,362.8 481.7,363.9 483.2,364.9 484.8,365.7 486.5,366.5 488.2,367.3 489.9,368.1 491.1,368.8 492.3,369.4 493.9,370.4 494.9,371 496.2,371.9 497.1,373.2 496.8,375.3 496.3,376.6 495.9,377.8 495.3,379.1 494.7,380.4 494.1,381.7 493.6,383 493,384.2 492.2,385.5 491.3,386.6 490.4,387.8 489.6,389 488.8,390.2 488,391.5 487.2,392.7 486.4,394 485.7,395.2 485,396.5 484.4,397.9 483.7,399.2 483,400.5 482.2,401.8 481.2,403 480.2,404.2 479.2,405.5 478.3,406.6 477.1,407.9 476,409.1 475,410.1 473.8,410.7 472.4,410.9 470.1,410.5 468,410.1 466,409.5 464,409 462.8,408.5 461.2,407.9 460.1,407.4 458.5,406.7 456.7,405.9 455.2,405.3 453.9,404.8 452,404.1 450.2,403.3 448.5,402.5 446.7,401.7 444.9,400.9 443.2,400.1 441.3,399.4 439.5,398.7 437.7,398 435.9,397.3 434.1,396.5 432.4,395.7 430.7,395 429.3,394.4 428,393.8 426.2,393.2 424.4,392.5 422.7,391.8 421,391 419.3,390.2 417.5,389.5 415.8,388.8 414,388.1 412.3,387.4 410.6,386.6 408.9,385.9 407.2,385.1 405.5,384.4 403.8,383.7 402.1,383 400.4,382.3 398.8,381.5 397.1,380.8 395.4,380.1 393.8,379.4 392.9,379M390.5,372.4 392,373 393,371.9 393.9,370.7 394.8,369.5 393.8,368.4 392.9,369.5 391.9,370.6 391,371.8 390.5,372.4M400.8,376.7 402.3,375.8 403.2,374.6 404.1,373.4 402.6,374.3 401.6,375.5 400.8,376.7M410,380.6 411.2,381.1 412.1,379.9 413,378.7 413.9,377.5 413.3,376.4 412.2,377.6 411.3,378.7 410.4,380 410,380.6M420,384.8 421.3,385.9 422.6,385 423.5,383.8 424.3,382.6 425.1,381.3 424,380.7 422.6,381.1 421.8,382.3 420.9,383.5 420,384.8M431,389.4 431.6,390.3 433.4,391 435.1,391.1 436,389.9 436.8,388.6 437.7,387.4 436.9,386 435.2,385.3 433.6,385.7 432.7,386.9 431.8,388.1 431,389.4M444.1,394.9 444.9,395.9 446.7,396.6 448.4,397.4 450.1,396.6 450.9,395.3 451.7,394 452.6,392.7 451,391.9 449.2,391.1 447.4,390.4 446.3,391.7 445.4,393 444.6,394.2 444.1,394.9M458.9,401.1 460.2,402.2 461.4,401.3 462.2,400 463,398.7 463.7,397.4 462.6,396.7 461.3,397.2 460.5,398.5 459.7,399.8 458.9,401.1M470.3,405.9 471.2,406.9 472.5,406 473.4,404.7 474.2,403.4 474.8,402 473.5,401.2 472.3,402.6 471.5,403.9 470.7,405.2 470.3,405.9M451.7,383.7 452.6,384.4 454.4,385.1 456.2,385.8 457.6,385.3 458.4,384.1 459.2,382.9 460,381.7 460.8,380.5 461.6,379.3 462.4,378.1 463.1,376.8 461.6,376.1 459.9,375.4 458.1,374.7 457,375.9 456.2,377.1 455.4,378.3 454.6,379.5 453.8,380.7 453,381.9 452.1,383.1 451.7,383.7M466.4,389.7 467.7,390.6 468.7,389.9 469.5,388.6 470.3,387.4 471.1,386.2 471.9,384.9 472.7,383.7 473.5,382.5 474.1,381.2 473,380.7 471.8,381.1 471,382.3 470.2,383.5 469.4,384.7 468.6,385.9 467.8,387.2 467,388.4 466.4,389.7M477.5,394.3 478.6,395 479.7,394.4 480.5,393.1 481.3,391.9 482.1,390.6 482.8,389.4 483.6,388.1 484.4,386.9 484.8,385.6 483.7,385 482.6,386.2 481.8,387.4 481,388.6 480.3,389.9 479.5,391.1 478.7,392.4 477.9,393.6 477.5,394.3M410.3,347.7 411.7,348.3 412.6,347.2 413.5,346.2 414.3,345.1 415.2,344.1 414.2,343 413.3,344 412.4,345.1 411.6,346.1 410.7,347.2 410.3,347.7M420.2,351.7 421.7,350.8 422.5,349.7 423.3,348.7 424.2,347.6 422.7,348.4 421.9,349.5 421.1,350.6 420.2,351.7M429.2,355.2 430.8,355.1 431.6,354 432.5,353 433.2,351.9 434,350.7 432.5,350.8 431.6,351.9 430.8,353 430,354.1 429.2,355.2M438.9,359.1 440.2,359.9 441.3,359.3 442.1,358.2 442.9,357.1 443.8,356 444.3,354.8 442.6,354.1 441.7,355.2 440.9,356.3 440.1,357.4 439.2,358.5 438.9,359.1M449.5,363.3 451.1,364.3 452.8,364.9 453.9,364.3 454.7,363.1 455.5,362 456.3,360.9 456.9,359.7 455.8,359.1 454.2,358.5 452.7,358.8 451.9,359.9 451.1,361 450.3,362.1 449.5,363.3M462.2,368.3 464,369.3 465.7,370 467.5,370.4 468.3,369.3 469.1,368.1 469.9,367 470.6,365.8 469.4,364.4 467.7,363.8 466,363.1 464.9,364.3 464.2,365.4 463.4,366.6 462.6,367.7 462.2,368.3M476.5,374 477.9,374.8 478.9,374.2 479.6,373 480.4,371.8 481.1,370.6 480.5,369.1 479.1,369.8 478.3,371 477.6,372.2 476.8,373.3 476.5,374M487.5,378.3 488.5,379 489.7,378.4 490.4,377.2 491.1,376 491.9,374.9 490.9,373.4 490.1,374.2 489.3,375.3 488.6,376.5 487.9,377.7 487.5,378.3M418.8,337.3 420.1,337.7 421,336.8 421.8,335.7 422.6,334.7 423.4,333.7 424.3,332.7 425,331.6 423.7,331.1 422.8,332.1 422,333.1 421.1,334.1 420.4,335.2 419.5,336.2 418.8,337.3M428.6,341 429.9,340.2 430.7,339.1 431.5,338.1 432.3,337.1 433.1,336.1 433.9,335 432.5,335.8 431.8,336.9 430.9,337.9 430.2,338.9 429.3,339.9 428.6,341M437.4,344.4 438.9,344.3 439.7,343.3 440.5,342.2 441.3,341.2 442.1,340.1 442.9,339.1 442.2,338.2 441.3,339.2 440.5,340.2 439.7,341.2 438.9,342.3 438.1,343.3 437.4,344.4M447,348.1 448.3,348.9 449.3,348.3 450.1,347.3 450.9,346.2 451.6,345.1 452.4,344.1 453.2,343 452.4,341.8 451.1,342.3 450.4,343.3 449.6,344.4 448.8,345.4 448.1,346.5 447.3,347.6 447,348.1M457.3,352.1 459,353.1 460.7,353.7 462.1,352.6 462.9,351.5 463.6,350.4 464.4,349.3 465.1,348.3 465.8,347.2 464.7,346.5 463.1,345.9 461.6,346.2 460.8,347.3 460,348.4 459.3,349.4 458.5,350.5 457.7,351.6 457.3,352.1M428.1,325.6 429.3,326.1 430.2,325.2 431,324.2 431.8,323.2 432.6,322.2 433.3,321.3 432.3,320.3 431.5,321.2 430.8,322.2 430,323.2 429.2,324.2 428.4,325.1 428.1,325.6M437.6,329.2 439,328.5 439.8,327.5 440.6,326.5 441.3,325.5 442.1,324.5 440.7,325.3 440,326.3 439.2,327.2 438.5,328.3 437.6,329.2M446.5,332.6 448.3,331.9 449.1,330.9 449.8,329.9 450.6,328.9 451.3,327.9 450.5,327 449.7,328 449,329 448.2,330 447.5,331 446.7,332 446.5,332.6M455.8,336.1 457.2,336.7 458.5,335.8 459.2,334.7 460,333.7 460.7,332.7 461.5,331.7 460.9,330.3 459.5,331 458.7,332 458,333 457.2,334 456.5,335 455.8,336.1M388.8,377.2 387.3,376.3 385.9,375.3 384.7,374 384.8,372.3 385.4,371 386.1,369.8 386.9,368.5 387.7,367.3 388.5,366.1 389.2,364.9 390,363.7 390.9,362.5 391.7,361.4 392.6,360.3 393.5,359.1 394.4,358 395.3,356.9 396.2,355.8 397.1,354.7 397.9,353.6 398.8,352.5 399.7,351.4 400.6,350.3 401.5,349.2 402.4,348.2 403.3,347.1 404.3,346.1 405.2,345 406.1,344 407,342.9 407.8,341.9 408.6,340.8 409.4,339.7 410.2,338.7 411.1,337.6 412,336.6 412.9,335.6 413.8,334.6 414.6,333.6 415.5,332.6 416.3,331.6 417.2,330.6 417.9,329.6 418.7,328.6 419.5,327.6 420.3,326.6 421.1,325.6 422,324.7 422.9,323.7 423.8,322.8 424.7,321.8 425.6,320.9 426.5,320 427.4,319.1 428.4,318.2 429.5,317.3 431,316.7 433.1,316.7 434.8,317 436.2,317.3 438.2,317.9 439.8,318.3 441.4,318.8 442.9,319.4 444.5,320 446,320.5 447.6,321 449.2,321.6 450.8,322.2 452.3,322.8 453.9,323.4 455.4,324 457,324.5 458.6,325.1 460.1,325.8 461.7,326.4 463.2,327.1 464.4,327.7 465.4,328.2 466.8,329.1 468,330.3 468.9,331.8 469.6,333.4 470.1,334.9 470.6,336.4 471,337.6 471.5,339.3 472,340.6 472.7,342.4 473.3,343.9 473.8,345.5 474.3,347 474.8,348.5 475.2,350 475.6,351.6 476,353 476.6,354.7 477.1,356.1 477.9,358 478.8,359.7 480,361.5 481.3,362.8 482.8,363.9 484.3,364.8 486,365.7 487.6,366.5 489.3,367.3 490.9,368.1 492.6,369 494.2,369.9 495.8,370.8 497.1,371.8 497.9,372.8 498.1,374.2 497.7,375.7 497.1,376.9 496.6,378.2 496,379.4 495.4,380.7 494.8,381.9 494.2,383.2 493.5,384.5 492.8,385.7 492,386.9 491.1,388.1 490.3,389.3 489.5,390.5 488.8,391.8 488,393 487.2,394.3 486.5,395.6 485.7,396.8 485,398.1 484.3,399.5 483.6,400.8 482.7,402 481.8,403.3 480.9,404.5 480.1,405.5 479,407 478,408.2 476.9,409.5 475.9,410.5 475,411.1 472.9,411.6 470.7,411.4 468.7,410.9 466.7,410.3 464.8,409.7 462.8,409 461,408.3 459.1,407.5 457.3,406.7 455.5,406 453.6,405.3 451.7,404.5 449.9,403.8 448.1,403 446.4,402.2 444.6,401.4 442.8,400.6 441,399.9 439.2,399.2 437.3,398.5 435.5,397.8 433.8,397 432.1,396.2 430.3,395.4 428.5,394.7 426.8,394 425,393.3 423.2,392.6 421.5,391.8 419.8,391.1 418,390.3 416.3,389.6 414.6,388.9 412.8,388.2 411.1,387.4 409.4,386.7 407.7,385.9 406,385.2 404.3,384.5 402.6,383.8 400.9,383.1 399.3,382.3 397.6,381.5 396,380.8 394.3,380.1 392.7,379.3 391.1,378.5 389.5,377.7 388.8,377.2M447.4,394.6 449.1,393.7 447.7,393.9 447.4,394.6M455.2,382.8 457,382 457.8,380.8 458.6,379.6 459.4,378.4 457.7,379.2 456.9,380.4 456.1,381.6 455.2,382.8M465.6,367.4 467.3,366.7 465.6,367.4" fill="none" stroke="#a4a0ff" stroke-width="0.6"/>
<path d="M383.5,374.1 430.7,315.9M430.7,315.9 466.8,329.2M466.8,329.2 477.3,364.1M477.3,364.1 498.9,372.6M498.9,372.6 474.4,412.6M474.4,412.6 383.5,374.1M393.4,378.4 440,319.3M402.9,382.4 448.7,322.6M412.9,386.6 458,326M423.8,391.2 467.3,330.8M437,396.8 471.9,346.2M451.7,403 477.2,364.2M463.1,407.8 488.1,368.4M392.1,363.5 481.8,400.5M403.8,349.1 491.7,384.2M412.4,338.6 477.1,363.7M421.9,326.8 471.7,345.6M396.1,358.5 448.6,379.9M400,353.8 452.2,374.8" fill="none" stroke="#12a858" stroke-width="0.9"/>
<g fill="#22e222"><circle cx="383.5" cy="374.1" r="1.7"/><circle cx="402.2" cy="351.1" r="1.7"/><circle cx="417.4" cy="332.3" r="1.7"/><circle cx="430.7" cy="315.9" r="1.7"/><circle cx="448.1" cy="322.3" r="1.7"/><circle cx="466.8" cy="329.2" r="1.7"/><circle cx="470.8" cy="345.3" r="1.7"/><circle cx="477.3" cy="364.1" r="1.7"/><circle cx="498.9" cy="372.6" r="1.7"/><circle cx="486.6" cy="392.6" r="1.7"/><circle cx="474.4" cy="412.6" r="1.7"/><circle cx="426.8" cy="392.5" r="1.7"/><circle cx="420.1" cy="344.4" r="1.7"/><circle cx="429" cy="347.9" r="1.7"/><circle cx="439.7" cy="346.4" r="1.7"/><circle cx="450.3" cy="350.5" r="1.7"/><circle cx="461" cy="354.6" r="1.7"/><circle cx="454.5" cy="371.4" r="1.7"/><circle cx="445" cy="385.2" r="1.7"/><circle cx="402" cy="367.6" r="1.7"/><circle cx="405.9" cy="362.5" r="1.7"/><circle cx="409.7" cy="357.7" r="1.7"/><circle cx="413.4" cy="353" r="1.7"/><circle cx="411.3" cy="371.4" r="1.7"/><circle cx="415.2" cy="366.3" r="1.7"/><circle cx="419" cy="361.4" r="1.7"/><circle cx="422.6" cy="356.7" r="1.7"/><circle cx="421.1" cy="375.5" r="1.7"/><circle cx="425" cy="370.3" r="1.7"/><circle cx="428.7" cy="365.3" r="1.7"/><circle cx="432.3" cy="360.5" r="1.7"/><circle cx="432" cy="379.9" r="1.7"/><circle cx="435.7" cy="374.7" r="1.7"/><circle cx="439.4" cy="369.6" r="1.7"/><circle cx="442.9" cy="364.8" r="1.7"/></g>
<path d="M358,387.1 361.7,382.6M364.3,389.9 368,385.4M370.7,392.8 374.4,388.2M377.2,395.6 380.8,391M383.7,398.5 387.3,393.8M390.3,401.4 393.9,396.7M397,404.3 400.5,399.6M403.7,407.3 407.2,402.5M410.5,410.3 413.9,405.4M417.3,413.3 420.7,408.4M424.2,416.3 427.6,411.4M431.2,419.4 434.6,414.4M438.3,422.5 441.6,417.5M445.4,425.6 448.7,420.5M452.6,428.8 455.8,423.7M459.8,432 463,426.8M467.2,435.2 470.3,430M474.6,438.5 477.7,433.2M482.1,441.8 485.1,436.4M489.7,445.1 492.7,439.7M500.8,442.1 496,440M504.1,435.8 499.4,433.8M507.5,429.7 502.8,427.7M510.7,423.7 506,421.7M513.9,417.8 509.3,415.8M517.1,412 512.5,410.1M520.1,406.3 515.6,404.4M523.2,400.7 518.6,398.9M526.1,395.2 521.6,393.4M529,389.8 524.6,388.1M531.9,384.6 527.5,382.8M534.7,379.4 530.3,377.7M537.5,374.3 533.1,372.6M540.2,369.3 535.8,367.6M542.8,364.3 538.5,362.7M545.5,359.5 541.2,357.9M548,354.8 543.8,353.2M550.6,350.1 546.3,348.6M507.5,429.7 487.2,421.1M520.1,406.3 500.5,398.3M531.9,384.6 512.8,377.1M542.8,364.3 524.3,357.4M370.7,392.8 382,378.7M397,404.3 407.8,389.8M424.2,416.3 434.6,401.2M452.6,428.8 462.5,413.1M482.1,441.8 491.4,425.4M360.3,382 495.5,440.9M495.5,440.9 547.2,347" fill="none" stroke="#3434b4" stroke-width="0.7"/>
<path d="M351.7 384.8L337 400.5M497.3 449L486 472.5M497.3 449L521.5 460.5M553.5 344.7L559 347" fill="none" stroke="#3434b4" stroke-width="0.8" stroke-dasharray="2.5 2.5"/>
<path d="M292 200.8L302.5 195.8" fill="none" stroke="#3434b4" stroke-width="0.8" stroke-dasharray="2 2.2"/>
<path d="M336.8,299.4 347.1,289.4M333.2,278.9 343.9,269M329.3,257.1 340.5,247.3M325.2,233.7 336.9,224.1M320.8,208.8 333,199.4M333 279L305.8 298.6L311.6 321" fill="none" stroke="#3434b4" stroke-width="0.8"/>
<path d="M309.3 319.2L314.2 318.4L312.4 323.6Z" fill="#101080"/>
<filter id="sb" x="-5%" y="-5%" width="110%" height="110%"><feGaussianBlur stdDeviation="0.5"/></filter><g filter="url(#sb)" stroke="#dcd4d4" stroke-width="0.6" stroke-linejoin="round">
<path d="M425.7,218.4 429.3,221.5 431,217.3 427.5,215.5Z" fill="#fe4ee7"/>
<path d="M429.3,221.5 432.8,223.4 434.5,219 431,217.3Z" fill="#f129fe"/>
<path d="M432.8,223.4 436.4,225.4 438.1,220.7 434.5,219Z" fill="#dc18ff"/>
<path d="M427.5,223.6 431.1,227.3 432.8,223.4 429.3,221.5Z" fill="#be00ff"/>
<path d="M423.9,220.3 427.5,223.6 429.3,221.5 425.7,218.4Z" fill="#f22cfc"/>
<path d="M431.1,227.3 434.7,229.7 436.4,225.4 432.8,223.4Z" fill="#9a00ff"/>
<path d="M427.5,215.5 431,217.3 432.5,206.2 428.9,202.2Z" fill="#ff0000"/>
<path d="M431,217.3 434.5,219 436.1,209.9 432.5,206.2Z" fill="#ff0000"/>
<path d="M434.5,219 438.1,220.7 439.7,213.7 436.1,209.9Z" fill="#ff0000"/>
<path d="M436.4,225.4 439.9,225.8 441.6,222.4 438.1,220.7Z" fill="#d210ff"/>
<path d="M438.1,220.7 441.6,222.4 443.3,217.4 439.7,213.7Z" fill="#ff65c4"/>
<path d="M421.9,208.1 425.7,218.4 427.5,215.5 423.7,205.2Z" fill="#ff0000"/>
<path d="M429.3,229.3 432.9,233.4 434.7,229.7 431.1,227.3Z" fill="#7000ff"/>
<path d="M441.6,222.4 445.2,224.1 446.9,219.2 443.3,217.4Z" fill="#fc49ea"/>
<path d="M434.7,229.7 438.2,228.9 439.9,225.8 436.4,225.4Z" fill="#9c00ff"/>
<path d="M425.7,225.5 429.3,229.3 431.1,227.3 427.5,223.6Z" fill="#ad00ff"/>
<path d="M439.9,225.8 443.5,228.3 445.2,224.1 441.6,222.4Z" fill="#c505ff"/>
<path d="M445.2,224.1 448.8,225.8 450.5,221 446.9,219.2Z" fill="#f432f9"/>
<path d="M422.1,222.3 425.7,225.5 427.5,223.6 423.9,220.3Z" fill="#ef27ff"/>
<path d="M423.7,205.2 427.5,215.5 428.9,202.2 425.2,197Z" fill="#ff0000"/>
<path d="M443.5,228.3 447.1,230.3 448.8,225.8 445.2,224.1Z" fill="#ae00ff"/>
<path d="M432.9,233.4 436.5,232.6 438.2,228.9 434.7,229.7Z" fill="#6c01ff"/>
<path d="M438.2,228.9 441.8,232.3 443.5,228.3 439.9,225.8Z" fill="#9500ff"/>
<path d="M420.1,210.9 423.9,220.3 425.7,218.4 421.9,208.1Z" fill="#ff0000"/>
<path d="M441.8,232.3 445.4,234.3 447.1,230.3 443.5,228.3Z" fill="#7200ff"/>
<path d="M448.8,225.8 452.4,227.4 454.1,222.8 450.5,221Z" fill="#e721ff"/>
<path d="M427.5,231.2 431.2,235.4 432.9,233.4 429.3,229.3Z" fill="#5f05ff"/>
<path d="M436.5,232.6 440.1,236 441.8,232.3 438.2,228.9Z" fill="#6702ff"/>
<path d="M440.1,236 443.6,237.9 445.4,234.3 441.8,232.3Z" fill="#3613ff"/>
<path d="M447.1,230.3 450.7,229 452.4,227.4 448.8,225.8Z" fill="#af00ff"/>
<path d="M431.2,235.4 434.7,235.6 436.5,232.6 432.9,233.4Z" fill="#460dff"/>
<path d="M452.4,227.4 456,229.1 457.7,224.5 454.1,222.8Z" fill="#d613ff"/>
<path d="M423.9,227.4 427.5,231.2 429.3,229.3 425.7,225.5Z" fill="#ab00ff"/>
<path d="M420.3,224.3 423.9,227.4 425.7,225.5 422.1,222.3Z" fill="#eb24ff"/>
<path d="M443.3,217.4 446.9,219.2 448.6,206.4 445,203Z" fill="#ff0000"/>
<path d="M418.3,213.6 422.1,222.3 423.9,220.3 420.1,210.9Z" fill="#ff0000"/>
<path d="M439.7,213.7 443.3,217.4 445,203 441.3,199.8Z" fill="#ff0000"/>
<path d="M446.9,219.2 450.5,221 452.2,209.9 448.6,206.4Z" fill="#ff0000"/>
<path d="M456,229.1 459.6,230.8 461.3,226.2 457.7,224.5Z" fill="#c506ff"/>
<path d="M434.7,235.6 438.3,239.2 440.1,236 436.5,232.6Z" fill="#3712ff"/>
<path d="M450.5,221 454.1,222.8 455.8,213.7 452.2,209.9Z" fill="#ff0000"/>
<path d="M450.7,229 454.3,233 456,229.1 452.4,227.4Z" fill="#a500ff"/>
<path d="M454.1,222.8 457.7,224.5 459.4,217.8 455.8,213.7Z" fill="#ff0000"/>
<path d="M438.3,239.2 441.9,241.1 443.6,237.9 440.1,236Z" fill="#1e35fc"/>
<path d="M445.4,234.3 448.9,232.5 450.7,229 447.1,230.3Z" fill="#8800ff"/>
<path d="M457.7,224.5 461.3,226.2 463,221.2 459.4,217.8Z" fill="#ff5fce"/>
<path d="M436.1,209.9 439.7,213.7 441.3,199.8 437.7,196.7Z" fill="#ff0000"/>
<path d="M425.8,234.1 429.4,237.4 431.2,235.4 427.5,231.2Z" fill="#5608ff"/>
<path d="M454.3,233 457.9,235 459.6,230.8 456,229.1Z" fill="#8500ff"/>
<path d="M429.4,237.4 433,240.1 434.7,235.6 431.2,235.4Z" fill="#2e1bfe"/>
<path d="M432.5,206.2 436.1,209.9 437.7,196.7 434.1,193.5Z" fill="#ff0000"/>
<path d="M461.3,226.2 464.9,227.9 466.6,223 463,221.2Z" fill="#fa42ef"/>
<path d="M459.6,230.8 463.2,232.3 464.9,227.9 461.3,226.2Z" fill="#b600ff"/>
<path d="M422.1,230.3 425.8,234.1 427.5,231.2 423.9,227.4Z" fill="#9c00ff"/>
<path d="M433,240.1 436.6,242.4 438.3,239.2 434.7,235.6Z" fill="#1e35fc"/>
<path d="M428.9,202.2 432.5,206.2 434.1,193.5 430.4,190.2Z" fill="#ff0000"/>
<path d="M443.6,237.9 447.2,236 448.9,232.5 445.4,234.3Z" fill="#5608ff"/>
<path d="M452.6,236.9 456.2,238.8 457.9,235 454.3,233Z" fill="#4a0cff"/>
<path d="M448.9,232.5 452.6,236.9 454.3,233 450.7,229Z" fill="#8200ff"/>
<path d="M436.6,242.4 440.2,244.1 441.9,241.1 438.3,239.2Z" fill="#0b71d4"/>
<path d="M418.4,226.3 422.1,230.3 423.9,227.4 420.3,224.3Z" fill="#e11cff"/>
<path d="M416.4,216.3 420.3,224.3 422.1,222.3 418.3,213.6Z" fill="#ff0000"/>
<path d="M425.2,197 428.9,202.2 430.4,190.2 426.8,186.3Z" fill="#ff0000"/>
<path d="M457.9,235 461.6,232.6 463.2,232.3 459.6,230.8Z" fill="#8f00ff"/>
<path d="M464.9,227.9 468.6,227.8 470.3,223.8 466.6,223Z" fill="#fa42ee"/>
<path d="M450.8,240.3 454.5,242.2 456.2,238.8 452.6,236.9Z" fill="#2529fd"/>
<path d="M441.9,241.1 445.5,239.6 447.2,236 443.6,237.9Z" fill="#2d1dfe"/>
<path d="M447.2,236 450.8,240.3 452.6,236.9 448.9,232.5Z" fill="#5309ff"/>
<path d="M419.6,192 423.7,205.2 425.2,197 421.4,187.3Z" fill="#ff0000"/>
<path d="M427.6,239.3 431.2,241.3 433,240.1 429.4,237.4Z" fill="#2628fd"/>
<path d="M417.8,195.2 421.9,208.1 423.7,205.2 419.6,192Z" fill="#ff0000"/>
<path d="M423.9,235.4 427.6,239.3 429.4,237.4 425.8,234.1Z" fill="#500aff"/>
<path d="M463.2,232.3 466.9,231.5 468.6,227.8 464.9,227.9Z" fill="#c304ff"/>
<path d="M431.2,241.3 434.8,243.8 436.6,242.4 433,240.1Z" fill="#1545fa"/>
<path d="M440.2,244.1 443.8,245.5 445.5,239.6 441.9,241.1Z" fill="#105be7"/>
<path d="M420.3,232.1 423.9,235.4 425.8,234.1 422.1,230.3Z" fill="#9300ff"/>
<path d="M434.8,243.8 438.4,246.5 440.2,244.1 436.6,242.4Z" fill="#01a0a9"/>
<path d="M445.5,239.6 449.1,243.4 450.8,240.3 447.2,236Z" fill="#2c1efe"/>
<path d="M449.1,243.4 452.8,244.9 454.5,242.2 450.8,240.3Z" fill="#1448f9"/>
<path d="M414.6,218.9 418.4,226.3 420.3,224.3 416.4,216.3Z" fill="#ff0000"/>
<path d="M456.2,238.8 459.9,235.7 461.6,232.6 457.9,235Z" fill="#7700ff"/>
<path d="M416.6,228.3 420.3,232.1 422.1,230.3 418.4,226.3Z" fill="#d815ff"/>
<path d="M416,198.3 420.1,210.9 421.9,208.1 417.8,195.2Z" fill="#ff0000"/>
<path d="M461.6,232.6 465.2,234.5 466.9,231.5 463.2,232.3Z" fill="#a900ff"/>
<path d="M443.8,245.5 447.4,246.8 449.1,243.4 445.5,239.6Z" fill="#0e63e0"/>
<path d="M421.4,187.3 425.2,197 426.8,186.3 423,180.2Z" fill="#ff0000"/>
<path d="M438.4,246.5 442,247.3 443.8,245.5 440.2,244.1Z" fill="#00b67f"/>
<path d="M463,221.2 466.6,223 468.6,208.6 464.9,205Z" fill="#ff0000"/>
<path d="M459.4,217.8 463,221.2 464.9,205 461.3,201.7Z" fill="#ff0000"/>
<path d="M466.6,223 470.3,223.8 472.2,211.7 468.6,208.6Z" fill="#ff0000"/>
<path d="M454.5,242.2 458.2,238.7 459.9,235.7 456.2,238.8Z" fill="#4d0bff"/>
<path d="M455.8,213.7 459.4,217.8 461.3,201.7 457.6,198.7Z" fill="#ff0000"/>
<path d="M422.1,237.2 425.7,241.3 427.6,239.3 423.9,235.4Z" fill="#5409ff"/>
<path d="M447.4,246.8 451,247.6 452.8,244.9 449.1,243.4Z" fill="#029eac"/>
<path d="M425.7,241.3 429.3,241.5 431.2,241.3 427.6,239.3Z" fill="#2e1bfe"/>
<path d="M452.2,209.9 455.8,213.7 457.6,198.7 454,195.8Z" fill="#ff0000"/>
<path d="M466.9,231.5 470.6,230.4 472.4,226.4 468.6,227.8Z" fill="#f433f8"/>
<path d="M414.2,201.4 418.3,213.6 420.1,210.9 416,198.3Z" fill="#ff0000"/>
<path d="M448.6,206.4 452.2,209.9 454,195.8 450.3,193.1Z" fill="#ff0000"/>
<path d="M434.1,193.5 437.7,196.7 439.3,185.4 435.7,182.8Z" fill="#ff0000"/>
<path d="M442,247.3 445.6,248.7 447.4,246.8 443.8,245.5Z" fill="#00b978"/>
<path d="M412.7,221.5 416.6,228.3 418.4,226.3 414.6,218.9Z" fill="#ff0000"/>
<path d="M430.4,190.2 434.1,193.5 435.7,182.8 432,180.1Z" fill="#ff0000"/>
<path d="M437.7,196.7 441.3,199.8 443,187.9 439.3,185.4Z" fill="#ff0000"/>
<path d="M468.6,227.8 472.4,226.4 474.2,216.6 470.3,223.8Z" fill="#ff0000"/>
<path d="M445,203 448.6,206.4 450.3,193.1 446.6,190.4Z" fill="#ff0000"/>
<path d="M433,245.8 436.6,248.5 438.4,246.5 434.8,243.8Z" fill="#01a2a8"/>
<path d="M441.3,199.8 445,203 446.6,190.4 443,187.9Z" fill="#ff0000"/>
<path d="M418.4,233.2 422.1,237.2 423.9,235.4 420.3,232.1Z" fill="#9d00ff"/>
<path d="M429.3,241.5 433,245.8 434.8,243.8 431.2,241.3Z" fill="#1e35fc"/>
<path d="M426.8,186.3 430.4,190.2 432,180.1 428.4,177Z" fill="#ff0000"/>
<path d="M459.9,235.7 463.5,237.7 465.2,234.5 461.6,232.6Z" fill="#9d00ff"/>
<path d="M414.7,230.3 418.4,233.2 420.3,232.1 416.6,228.3Z" fill="#dc18ff"/>
<path d="M452.8,244.9 456.4,242.3 458.2,238.7 454.5,242.2Z" fill="#2d1dfe"/>
<path d="M465.2,234.5 468.9,234.3 470.6,230.4 466.9,231.5Z" fill="#c707ff"/>
<path d="M423,180.2 426.8,186.3 428.4,177 424.7,172.9Z" fill="#ff0000"/>
<path d="M445.6,248.7 449.3,250.1 451,247.6 447.4,246.8Z" fill="#00bd70"/>
<path d="M412.3,204.3 416.4,216.3 418.3,213.6 414.2,201.4Z" fill="#ff0000"/>
<path d="M436.6,248.5 440.2,246.6 442,247.3 438.4,246.5Z" fill="#029cad"/>
<path d="M451,247.6 454.7,247.9 456.4,242.3 452.8,244.9Z" fill="#1545fa"/>
<path d="M420.2,239.2 423.9,243.3 425.7,241.3 422.1,237.2Z" fill="#5309ff"/>
<path d="M458.2,238.7 461.8,241 463.5,237.7 459.9,235.7Z" fill="#7d00ff"/>
<path d="M463.5,237.7 467.2,238 468.9,234.3 465.2,234.5Z" fill="#9f00ff"/>
<path d="M410.9,224 414.7,230.3 416.6,228.3 412.7,221.5Z" fill="#ff0000"/>
<path d="M423.9,243.3 427.5,243.5 429.3,241.5 425.7,241.3Z" fill="#3314ff"/>
<path d="M415.7,181.5 419.6,192 421.4,187.3 417.5,177.9Z" fill="#ff0000"/>
<path d="M417.5,177.9 421.4,187.3 423,180.2 419.2,173.2Z" fill="#ff0000"/>
<path d="M431.2,247.8 434.8,250.5 436.6,248.5 433,245.8Z" fill="#00a5a4"/>
<path d="M416.5,235.1 420.2,239.2 422.1,237.2 418.4,233.2Z" fill="#a200ff"/>
<path d="M427.5,243.5 431.2,247.8 433,245.8 429.3,241.5Z" fill="#242cfd"/>
<path d="M419.1,161.8 422.7,162.5 424.5,160.5 420.9,159.1Z" fill="#f00000"/>
<path d="M440.2,246.6 443.9,250.9 445.6,248.7 442,247.3Z" fill="#029bae"/>
<path d="M412.8,232.3 416.5,235.1 418.4,233.2 414.7,230.3Z" fill="#de1aff"/>
<path d="M410.5,207.3 414.6,218.9 416.4,216.3 412.3,204.3Z" fill="#ff0000"/>
<path d="M428.4,177 432,180.1 433.7,171.5 430,169.1Z" fill="#fe0000"/>
<path d="M449.3,250.1 453,249.9 454.7,247.9 451,247.6Z" fill="#00a6a3"/>
<path d="M419.2,173.2 423,180.2 424.7,172.9 421,167.9Z" fill="#fd0000"/>
<path d="M470.3,223.8 474.2,216.6 476.2,205.5 472.2,211.7Z" fill="#ff0000"/>
<path d="M461.8,241 465.5,241.6 467.2,238 463.5,237.7Z" fill="#7900ff"/>
<path d="M424.7,172.9 428.4,177 430,169.1 426.4,166.1Z" fill="#fa0000"/>
<path d="M413.8,184.7 417.8,195.2 419.6,192 415.7,181.5Z" fill="#ff0000"/>
<path d="M456.4,242.3 460.1,244 461.8,241 458.2,238.7Z" fill="#5807ff"/>
<path d="M432,180.1 435.7,182.8 437.3,173.7 433.7,171.5Z" fill="#ff0000"/>
<path d="M443.9,250.9 447.5,252.3 449.3,250.1 445.6,248.7Z" fill="#00c65b"/>
<path d="M422.7,162.5 426.4,166.1 428.1,161.9 424.5,160.5Z" fill="#f10000"/>
<path d="M435.7,182.8 439.3,185.4 441,175.7 437.3,173.7Z" fill="#ff0000"/>
<path d="M468.9,234.3 472.7,233.1 474.4,228.9 470.6,230.4Z" fill="#f83df2"/>
<path d="M421,167.9 424.7,172.9 426.4,166.1 422.7,162.5Z" fill="#f60000"/>
<path d="M470.6,230.4 474.4,228.9 476.3,219.6 472.4,226.4Z" fill="#ff0000"/>
<path d="M454.7,247.9 458.4,248.2 460.1,244 456.4,242.3Z" fill="#2629fd"/>
<path d="M418.3,241.2 422,245.4 423.9,243.3 420.2,239.2Z" fill="#500aff"/>
<path d="M426.4,166.1 430,169.1 431.8,163.3 428.1,161.9Z" fill="#f30000"/>
<path d="M417.3,164.6 421,167.9 422.7,162.5 419.1,161.8Z" fill="#f20000"/>
<path d="M409,226.5 412.8,232.3 414.7,230.3 410.9,224Z" fill="#ff71b1"/>
<path d="M439.3,185.4 443,187.9 444.7,177.6 441,175.7Z" fill="#ff0000"/>
<path d="M434.8,250.5 438.4,248.6 440.2,246.6 436.6,248.5Z" fill="#0c6ada"/>
<path d="M460.1,244 463.8,245 465.5,241.6 461.8,241Z" fill="#500aff"/>
<path d="M412,188 416,198.3 417.8,195.2 413.8,184.7Z" fill="#ff0000"/>
<path d="M467.2,238 471,237 472.7,233.1 468.9,234.3Z" fill="#ca09ff"/>
<path d="M422,245.4 425.6,245.6 427.5,243.5 423.9,243.3Z" fill="#3115ff"/>
<path d="M430,169.1 433.7,171.5 435.4,164.7 431.8,163.3Z" fill="#f50000"/>
<path d="M443,187.9 446.6,190.4 448.4,179.6 444.7,177.6Z" fill="#ff0000"/>
<path d="M429.3,249.8 433,252.5 434.8,250.5 431.2,247.8Z" fill="#00a7a0"/>
<path d="M408.6,210 412.7,221.5 414.6,218.9 410.5,207.3Z" fill="#ff0000"/>
<path d="M415.4,167.4 419.2,173.2 421,167.9 417.3,164.6Z" fill="#f60000"/>
<path d="M414.6,237.1 418.3,241.2 420.2,239.2 416.5,235.1Z" fill="#9f00ff"/>
<path d="M446.6,190.4 450.3,193.1 452,181.6 448.4,179.6Z" fill="#ff0000"/>
<path d="M425.6,245.6 429.3,249.8 431.2,247.8 427.5,243.5Z" fill="#232efc"/>
<path d="M453,249.9 456.7,250.2 458.4,248.2 454.7,247.9Z" fill="#1057eb"/>
<path d="M410.9,234.4 414.6,237.1 416.5,235.1 412.8,232.3Z" fill="#db17ff"/>
<path d="M433.7,171.5 437.3,173.7 439.1,166.1 435.4,164.7Z" fill="#f60000"/>
<path d="M450.3,193.1 454,195.8 455.7,183.7 452,181.6Z" fill="#ff0000"/>
<path d="M413.6,170.2 417.5,177.9 419.2,173.2 415.4,167.4Z" fill="#fa0000"/>
<path d="M465.5,241.6 469.3,240.4 471,237 467.2,238Z" fill="#9d00ff"/>
<path d="M438.4,248.6 442.1,252.9 443.9,250.9 440.2,246.6Z" fill="#0c6ed6"/>
<path d="M458.4,248.2 462.1,248.2 463.8,245 460.1,244Z" fill="#2b20fe"/>
<path d="M442.1,252.9 445.8,254.4 447.5,252.3 443.9,250.9Z" fill="#00cd4c"/>
<path d="M447.5,252.3 451.2,249.6 453,249.9 449.3,250.1Z" fill="#0689be"/>
<path d="M454,195.8 457.6,198.7 459.4,185.7 455.7,183.7Z" fill="#ff0000"/>
<path d="M410.1,191.3 414.2,201.4 416,198.3 412,188Z" fill="#ff0000"/>
<path d="M457.6,198.7 461.3,201.7 463.2,187.8 459.4,185.7Z" fill="#ff0000"/>
<path d="M472.4,226.4 476.3,219.6 478.2,210.5 474.2,216.6Z" fill="#ff0000"/>
<path d="M407.1,229 410.9,234.4 412.8,232.3 409,226.5Z" fill="#ff68bf"/>
<path d="M437.3,173.7 441,175.7 442.7,167.5 439.1,166.1Z" fill="#f80000"/>
<path d="M416.4,243.2 420.2,247.4 422,245.4 418.3,241.2Z" fill="#4d0bff"/>
<path d="M461.3,201.7 464.9,205 466.9,190.1 463.2,187.8Z" fill="#ff0000"/>
<path d="M464.9,205 468.6,208.6 470.6,192.5 466.9,190.1Z" fill="#ff0000"/>
<path d="M468.6,208.6 472.2,211.7 474.3,194.6 470.6,192.5Z" fill="#ff0000"/>
<path d="M406.7,212.5 410.9,224 412.7,221.5 408.6,210Z" fill="#ff0000"/>
<path d="M411.7,173 415.7,181.5 417.5,177.9 413.6,170.2Z" fill="#fd0000"/>
<path d="M433,252.5 436.6,250.6 438.4,248.6 434.8,250.5Z" fill="#0c6cd8"/>
<path d="M420.2,247.4 423.8,247.9 425.6,245.6 422,245.4Z" fill="#2f19ff"/>
<path d="M427.5,251.9 431.2,254.5 433,252.5 429.3,249.8Z" fill="#00a99c"/>
<path d="M441,175.7 444.7,177.6 446.4,168.9 442.7,167.5Z" fill="#f90000"/>
<path d="M463.8,245 467.6,242.5 469.3,240.4 465.5,241.6Z" fill="#7f00ff"/>
<path d="M412.7,239.4 416.4,243.2 418.3,241.2 414.6,237.1Z" fill="#9b00ff"/>
<path d="M456.7,250.2 460.4,251.2 462.1,248.2 458.4,248.2Z" fill="#1c39fb"/>
<path d="M408.3,194.5 412.3,204.3 414.2,201.4 410.1,191.3Z" fill="#ff0000"/>
<path d="M423.8,247.9 427.5,251.9 429.3,249.8 425.6,245.6Z" fill="#2131fc"/>
<path d="M409,236.5 412.7,239.4 414.6,237.1 410.9,234.4Z" fill="#d613ff"/>
<path d="M471,237 474.8,235.8 476.6,230.9 472.7,233.1Z" fill="#fe4de8"/>
<path d="M409.8,176 413.8,184.7 415.7,181.5 411.7,173Z" fill="#ff0000"/>
<path d="M444.7,177.6 448.4,179.6 450.1,170.3 446.4,168.9Z" fill="#fa0000"/>
<path d="M451.2,249.6 454.9,252.5 456.7,250.2 453,249.9Z" fill="#1840fb"/>
<path d="M436.6,250.6 440.3,254.9 442.1,252.9 438.4,248.6Z" fill="#0b71d3"/>
<path d="M440.3,254.9 444,256.6 445.8,254.4 442.1,252.9Z" fill="#00d142"/>
<path d="M472.7,233.1 476.6,230.9 478.5,222.5 474.4,228.9Z" fill="#ff0000"/>
<path d="M462.1,248.2 465.9,247.9 467.6,242.5 463.8,245Z" fill="#5309ff"/>
<path d="M405.2,231.5 409,236.5 410.9,234.4 407.1,229Z" fill="#ff5fcd"/>
<path d="M414.6,246.3 418.3,249.5 420.2,247.4 416.4,243.2Z" fill="#420fff"/>
<path d="M404.8,215.1 409,226.5 410.9,224 406.7,212.5Z" fill="#ff0000"/>
<path d="M445.8,254.4 449.5,251.9 451.2,249.6 447.5,252.3Z" fill="#0d69da"/>
<path d="M469.3,240.4 473.1,239.8 474.8,235.8 471,237Z" fill="#d512ff"/>
<path d="M418.3,249.5 422,252.1 423.8,247.9 420.2,247.4Z" fill="#2529fd"/>
<path d="M406.4,197.7 410.5,207.3 412.3,204.3 408.3,194.5Z" fill="#ff0000"/>
<path d="M431.2,254.5 434.8,253.9 436.6,250.6 433,252.5Z" fill="#0687c0"/>
<path d="M448.4,179.6 452,181.6 453.8,171.7 450.1,170.3Z" fill="#fb0000"/>
<path d="M472.2,211.7 476.2,205.5 478.2,193.7 474.3,194.6Z" fill="#ff0000"/>
<path d="M410.8,242.6 414.6,246.3 416.4,243.2 412.7,239.4Z" fill="#8900ff"/>
<path d="M422,252.1 425.7,254.5 427.5,251.9 423.8,247.9Z" fill="#1544fa"/>
<path d="M454.9,252.5 458.7,254 460.4,251.2 456.7,250.2Z" fill="#1446fa"/>
<path d="M408,179.4 412,188 413.8,184.7 409.8,176Z" fill="#ff0000"/>
<path d="M425.7,254.5 429.3,256.6 431.2,254.5 427.5,251.9Z" fill="#00b18a"/>
<path d="M460.4,251.2 464.2,250.4 465.9,247.9 462.1,248.2Z" fill="#2c1efe"/>
<path d="M407,238.5 410.8,242.6 412.7,239.4 409,236.5Z" fill="#c808ff"/>
<path d="M474.2,216.6 478.2,210.5 480.2,201.4 476.2,205.5Z" fill="#ff0000"/>
<path d="M452,181.6 455.7,183.7 457.5,173.1 453.8,171.7Z" fill="#fc0000"/>
<path d="M474.4,228.9 478.5,222.5 480.4,214.4 476.3,219.6Z" fill="#ff0000"/>
<path d="M467.6,242.5 471.4,243.5 473.1,239.8 469.3,240.4Z" fill="#b100ff"/>
<path d="M434.8,253.9 438.5,257 440.3,254.9 436.6,250.6Z" fill="#058bbc"/>
<path d="M404.5,200.6 408.6,210 410.5,207.3 406.4,197.7Z" fill="#ff0000"/>
<path d="M402.8,217.6 407.1,229 409,226.5 404.8,215.1Z" fill="#ff0000"/>
<path d="M438.5,257 442.2,258.7 444,256.6 440.3,254.9Z" fill="#00d43c"/>
<path d="M403.2,234 407,238.5 409,236.5 405.2,231.5Z" fill="#ff57da"/>
<path d="M406.1,182.7 410.1,191.3 412,188 408,179.4Z" fill="#ff0000"/>
<path d="M429.3,256.6 433,258.1 434.8,253.9 431.2,254.5Z" fill="#00ba77"/>
<path d="M455.7,183.7 459.4,185.7 461.3,174.5 457.5,173.1Z" fill="#fd0000"/>
<path d="M449.5,251.9 453.2,255.1 454.9,252.5 451.2,249.6Z" fill="#1b3afb"/>
<path d="M444,256.6 447.7,254 449.5,251.9 445.8,254.4Z" fill="#0979cd"/>
<path d="M412.6,247.4 416.4,251.6 418.3,249.5 414.6,246.3Z" fill="#3f10ff"/>
<path d="M416.4,251.6 420,253 422,252.1 418.3,249.5Z" fill="#2130fc"/>
<path d="M465.9,247.9 469.7,247.3 471.4,243.5 467.6,242.5Z" fill="#8400ff"/>
<path d="M453.2,255.1 456.9,256.8 458.7,254 454.9,252.5Z" fill="#0a77cf"/>
<path d="M408.8,244.1 412.6,247.4 414.6,246.3 410.8,242.6Z" fill="#8300ff"/>
<path d="M420,253 423.8,256 425.7,254.5 422,252.1Z" fill="#1059e9"/>
<path d="M459.4,185.7 463.2,187.8 465,175.8 461.3,174.5Z" fill="#fe0000"/>
<path d="M458.7,254 462.4,251.9 464.2,250.4 460.4,251.2Z" fill="#2629fd"/>
<path d="M423.8,256 427.5,258.6 429.3,256.6 425.7,254.5Z" fill="#00b386"/>
<path d="M405.1,240.6 408.8,244.1 410.8,242.6 407,238.5Z" fill="#c102ff"/>
<path d="M404.2,186.1 408.3,194.5 410.1,191.3 406.1,182.7Z" fill="#ff0000"/>
<path d="M433,258.1 436.7,259.5 438.5,257 434.8,253.9Z" fill="#00c069"/>
<path d="M473.1,239.8 477,238.6 478.8,233.1 474.8,235.8Z" fill="#ff58d9"/>
<path d="M402.6,203.1 406.7,212.5 408.6,210 404.5,200.6Z" fill="#ff0000"/>
<path d="M464.2,250.4 468,250.2 469.7,247.3 465.9,247.9Z" fill="#5608ff"/>
<path d="M400.9,220.1 405.2,231.5 407.1,229 402.8,217.6Z" fill="#ff0000"/>
<path d="M474.8,235.8 478.8,233.1 480.7,225.1 476.6,230.9Z" fill="#ff0000"/>
<path d="M463.2,187.8 466.9,190.1 468.8,177.1 465,175.8Z" fill="#ff0000"/>
<path d="M476.3,219.6 480.4,214.4 482.2,206.6 478.2,210.5Z" fill="#ff0000"/>
<path d="M436.7,259.5 440.4,260.9 442.2,258.7 438.5,257Z" fill="#05d73a"/>
<path d="M471.4,243.5 475.2,242.6 477,238.6 473.1,239.8Z" fill="#db17ff"/>
<path d="M401.3,236.1 405.1,240.6 407,238.5 403.2,234Z" fill="#ff51e4"/>
<path d="M442.2,258.7 445.9,257.7 447.7,254 444,256.6Z" fill="#01a2a8"/>
<path d="M427.5,258.6 431.1,258.9 433,258.1 429.3,256.6Z" fill="#00c45f"/>
<path d="M447.7,254 451.4,257.4 453.2,255.1 449.5,251.9Z" fill="#1642fa"/>
<path d="M451.4,257.4 455.2,259.5 456.9,256.8 453.2,255.1Z" fill="#00a5a4"/>
<path d="M402.4,189.6 406.4,197.7 408.3,194.5 404.2,186.1Z" fill="#ff0000"/>
<path d="M466.9,190.1 470.6,192.5 472.6,178.4 468.8,177.1Z" fill="#ff0000"/>
<path d="M410.7,249.5 414.5,253.6 416.4,251.6 412.6,247.4Z" fill="#440eff"/>
<path d="M476.2,205.5 480.2,201.4 482.1,192.1 478.2,193.7Z" fill="#ff0000"/>
<path d="M469.7,247.3 473.5,246.5 475.2,242.6 471.4,243.5Z" fill="#a900ff"/>
<path d="M456.9,256.8 460.7,254.8 462.4,251.9 458.7,254Z" fill="#1f34fc"/>
<path d="M414.5,253.6 418.1,253.8 420,253 416.4,251.6Z" fill="#2924fd"/>
<path d="M476.6,230.9 480.7,225.1 482.5,217.6 478.5,222.5Z" fill="#ff0000"/>
<path d="M400.6,205.6 404.8,215.1 406.7,212.5 402.6,203.1Z" fill="#ff0000"/>
<path d="M470.6,192.5 474.3,194.6 476.4,179.7 472.6,178.4Z" fill="#ff0000"/>
<path d="M431.1,258.9 434.8,261.1 436.7,259.5 433,258.1Z" fill="#00ca52"/>
<path d="M406.8,245.1 410.7,249.5 412.6,247.4 408.8,244.1Z" fill="#9100ff"/>
<path d="M421.9,258.1 425.6,260.7 427.5,258.6 423.8,256Z" fill="#00af90"/>
<path d="M398.9,222.7 403.2,234 405.2,231.5 400.9,220.1Z" fill="#ff0000"/>
<path d="M418.1,253.8 421.9,258.1 423.8,256 420,253Z" fill="#1b3bfb"/>
<path d="M440.4,260.9 444.1,262 445.9,257.7 442.2,258.7Z" fill="#00cd4b"/>
<path d="M403.1,242.8 406.8,245.1 408.8,244.1 405.1,240.6Z" fill="#c808ff"/>
<path d="M400.4,192.5 404.5,200.6 406.4,197.7 402.4,189.6Z" fill="#ff0000"/>
<path d="M445.9,257.7 449.6,259.7 451.4,257.4 447.7,254Z" fill="#0d65de"/>
<path d="M478.2,210.5 482.2,206.6 484.1,199 480.2,201.4Z" fill="#ff0000"/>
<path d="M468,250.2 471.8,249.9 473.5,246.5 469.7,247.3Z" fill="#8400ff"/>
<path d="M399.3,238.3 403.1,242.8 405.1,240.6 401.3,236.1Z" fill="#fd4be9"/>
<path d="M434.8,261.1 438.6,262.9 440.4,260.9 436.7,259.5Z" fill="#05d73a"/>
<path d="M449.6,259.7 453.4,261.9 455.2,259.5 451.4,257.4Z" fill="#00b582"/>
<path d="M462.4,251.9 466.3,247.9 468,250.2 464.2,250.4Z" fill="#6f00ff"/>
<path d="M455.2,259.5 459,257.6 460.7,254.8 456.9,256.8Z" fill="#1545fa"/>
<path d="M474.3,194.6 478.2,193.7 480.3,181 476.4,179.7Z" fill="#ff0000"/>
<path d="M408.7,251.6 412.5,255.8 414.5,253.6 410.7,249.5Z" fill="#410fff"/>
<path d="M425.6,260.7 429.2,258.7 431.1,258.9 427.5,258.6Z" fill="#01a0a9"/>
<path d="M478.5,222.5 482.5,217.6 484.4,210.5 480.4,214.4Z" fill="#ff0000"/>
<path d="M398.6,208.1 402.8,217.6 404.8,215.1 400.6,205.6Z" fill="#ff0000"/>
<path d="M444.1,262 447.9,263.1 449.6,259.7 445.9,257.7Z" fill="#00bb73"/>
<path d="M475.2,242.6 479.2,241.4 481,235.4 477,238.6Z" fill="#ff62c9"/>
<path d="M398.5,195 402.6,203.1 404.5,200.6 400.4,192.5Z" fill="#ff0000"/>
<path d="M396.9,225.2 401.3,236.1 403.2,234 398.9,222.7Z" fill="#ff0000"/>
<path d="M412.5,255.8 416.1,255.9 418.1,253.8 414.5,253.6Z" fill="#2c1efe"/>
<path d="M438.6,262.9 442.3,263.1 444.1,262 440.4,260.9Z" fill="#04d63b"/>
<path d="M419.9,260.2 423.7,262.7 425.6,260.7 421.9,258.1Z" fill="#00b08c"/>
<path d="M404.8,247.2 408.7,251.6 410.7,249.5 406.8,245.1Z" fill="#9500ff"/>
<path d="M477,238.6 481,235.4 482.9,227.8 478.8,233.1Z" fill="#ff0000"/>
<path d="M473.5,246.5 477.4,245.4 479.2,241.4 475.2,242.6Z" fill="#e31eff"/>
<path d="M401.1,244.9 404.8,247.2 406.8,245.1 403.1,242.8Z" fill="#cc0bff"/>
<path d="M416.1,255.9 419.9,260.2 421.9,258.1 418.1,253.8Z" fill="#1e35fc"/>
<path d="M480.2,201.4 484.1,199 486,191.5 482.1,192.1Z" fill="#ff0000"/>
<path d="M447.9,263.1 451.6,264.2 453.4,261.9 449.6,259.7Z" fill="#00ca53"/>
<path d="M397.3,240.5 401.1,244.9 403.1,242.8 399.3,238.3Z" fill="#fb45ed"/>
<path d="M429.2,258.7 433,263.1 434.8,261.1 431.1,258.9Z" fill="#01a2a8"/>
<path d="M453.4,261.9 457.2,260.5 459,257.6 455.2,259.5Z" fill="#0a77ce"/>
<path d="M466.3,247.9 470.1,253.3 471.8,249.9 468,250.2Z" fill="#8800ff"/>
<path d="M480.4,214.4 484.4,210.5 486.3,203.7 482.2,206.6Z" fill="#ff0000"/>
<path d="M433,263.1 436.7,265 438.6,262.9 434.8,261.1Z" fill="#03d53b"/>
<path d="M478.2,193.7 482.1,192.1 484.1,182.4 480.3,181Z" fill="#ff0000"/>
<path d="M471.8,249.9 475.7,249.4 477.4,245.4 473.5,246.5Z" fill="#b200ff"/>
<path d="M396.7,210.6 400.9,220.1 402.8,217.6 398.6,208.1Z" fill="#ff0000"/>
<path d="M406.7,253.8 410.6,257.9 412.5,255.8 408.7,251.6Z" fill="#3e10ff"/>
<path d="M478.8,233.1 482.9,227.8 484.8,220.6 480.7,225.1Z" fill="#ff0000"/>
<path d="M396.5,197.5 400.6,205.6 402.6,203.1 398.5,195Z" fill="#ff0000"/>
<path d="M442.3,263.1 446,264.1 447.9,263.1 444.1,262Z" fill="#00cb4f"/>
<path d="M460.7,254.8 464.6,251 466.3,247.9 462.4,251.9Z" fill="#8100ff"/>
<path d="M394.9,227.6 399.3,238.3 401.3,236.1 396.9,225.2Z" fill="#ff0000"/>
<path d="M423.7,262.7 427.3,260.8 429.2,258.7 425.6,260.7Z" fill="#0a75d0"/>
<path d="M410.6,257.9 414.2,258 416.1,255.9 412.5,255.8Z" fill="#2b20fe"/>
<path d="M470.1,253.3 473.9,253.2 475.7,249.4 471.8,249.9Z" fill="#8900ff"/>
<path d="M402.9,249.4 406.7,253.8 408.7,251.6 404.8,247.2Z" fill="#9200ff"/>
<path d="M451.6,264.2 455.4,265.2 457.2,260.5 453.4,261.9Z" fill="#00b67e"/>
<path d="M418,262.3 421.8,264.8 423.7,262.7 419.9,260.2Z" fill="#00b288"/>
<path d="M482.2,206.6 486.3,203.7 488.1,197.1 484.1,199Z" fill="#ff0000"/>
<path d="M399.1,247.1 402.9,249.4 404.8,247.2 401.1,244.9Z" fill="#c808ff"/>
<path d="M414.2,258 418,262.3 419.9,260.2 416.1,255.9Z" fill="#1d36fc"/>
<path d="M446,264.1 449.8,266.4 451.6,264.2 447.9,263.1Z" fill="#00d044"/>
<path d="M395.2,242.7 399.1,247.1 401.1,244.9 397.3,240.5Z" fill="#f93ff0"/>
<path d="M436.7,265 440.4,262.8 442.3,263.1 438.6,262.9Z" fill="#00b979"/>
<path d="M482.1,192.1 486,191.5 488,183.7 484.1,182.4Z" fill="#ff0000"/>
<path d="M480.7,225.1 484.8,220.6 486.6,213.9 482.5,217.6Z" fill="#ff0000"/>
<path d="M394.7,213.2 398.9,222.7 400.9,220.1 396.7,210.6Z" fill="#ff0000"/>
<path d="M464.6,251 468.3,256.7 470.1,253.3 466.3,247.9Z" fill="#8a00ff"/>
<path d="M459,257.6 462.8,254 464.6,251 460.7,254.8Z" fill="#6a01ff"/>
<path d="M431.1,265.2 434.9,267.1 436.7,265 433,263.1Z" fill="#03d63b"/>
<path d="M394.5,200.1 398.6,208.1 400.6,205.6 396.5,197.5Z" fill="#ff0000"/>
<path d="M427.3,260.8 431.1,265.2 433,263.1 429.2,258.7Z" fill="#0a76cf"/>
<path d="M468.3,256.7 472.2,256.8 473.9,253.2 470.1,253.3Z" fill="#6104ff"/>
<path d="M404.8,257 408.6,260 410.6,257.9 406.7,253.8Z" fill="#3314ff"/>
<path d="M477.4,245.4 481.4,244.2 483.2,237.7 479.2,241.4Z" fill="#ff6bba"/>
<path d="M484.1,199 488.1,197.1 490,190.7 486,191.5Z" fill="#ff0000"/>
<path d="M408.6,260 412.3,262.6 414.2,258 410.6,257.9Z" fill="#2130fc"/>
<path d="M392.9,229.9 397.3,240.5 399.3,238.3 394.9,227.6Z" fill="#ff0000"/>
<path d="M475.7,249.4 479.6,248.3 481.4,244.2 477.4,245.4Z" fill="#eb24ff"/>
<path d="M401,253.3 404.8,257 406.7,253.8 402.9,249.4Z" fill="#7d00ff"/>
<path d="M479.2,241.4 483.2,237.7 485.1,230.4 481,235.4Z" fill="#ff0000"/>
<path d="M482.5,217.6 486.6,213.9 488.5,207.6 484.4,210.5Z" fill="#ff0000"/>
<path d="M421.8,264.8 425.4,263.8 427.3,260.8 423.7,262.7Z" fill="#0687c0"/>
<path d="M457.2,260.5 461,260.9 462.8,254 459,257.6Z" fill="#3214ff"/>
<path d="M449.8,266.4 453.6,266.3 455.4,265.2 451.6,264.2Z" fill="#00c954"/>
<path d="M412.3,262.6 416.1,265 418,262.3 414.2,258Z" fill="#1251f0"/>
<path d="M397.1,249.2 401,253.3 402.9,249.4 399.1,247.1Z" fill="#b800ff"/>
<path d="M455.4,265.2 459.2,265.9 461,260.9 457.2,260.5Z" fill="#0a75d0"/>
<path d="M416.1,265 419.8,267 421.8,264.8 418,262.3Z" fill="#00b978"/>
<path d="M440.4,262.8 444.2,266.3 446,264.1 442.3,263.1Z" fill="#029dad"/>
<path d="M466.6,259.9 470.4,260.3 472.2,256.8 468.3,256.7Z" fill="#3912ff"/>
<path d="M462.8,254 466.6,259.9 468.3,256.7 464.6,251Z" fill="#6e00ff"/>
<path d="M473.9,253.2 477.9,252.3 479.6,248.3 475.7,249.4Z" fill="#b700ff"/>
<path d="M392.6,215.8 396.9,225.2 398.9,222.7 394.7,213.2Z" fill="#ff0000"/>
<path d="M486,191.5 490,190.7 491.9,184.1 488,183.7Z" fill="#fd0000"/>
<path d="M393.2,244.9 397.1,249.2 399.1,247.1 395.2,242.7Z" fill="#f639f4"/>
<path d="M484.4,210.5 488.5,207.6 490.3,201.6 486.3,203.7Z" fill="#ff0000"/>
<path d="M392.5,202.6 396.7,210.6 398.6,208.1 394.5,200.1Z" fill="#ff0000"/>
<path d="M444.2,266.3 448,268.7 449.8,266.4 446,264.1Z" fill="#00ca52"/>
<path d="M481,235.4 485.1,230.4 487,223.5 482.9,227.8Z" fill="#ff0000"/>
<path d="M425.4,263.8 429.2,267.3 431.1,265.2 427.3,260.8Z" fill="#0688bf"/>
<path d="M461,260.9 464.8,262.9 466.6,259.9 462.8,254Z" fill="#3413ff"/>
<path d="M429.2,267.3 433,269.3 434.9,267.1 431.1,265.2Z" fill="#03d63b"/>
<path d="M434.9,267.1 438.6,265 440.4,262.8 436.7,265Z" fill="#01a1a9"/>
<path d="M402.7,258.2 406.6,262.2 408.6,260 404.8,257Z" fill="#3116ff"/>
<path d="M406.6,262.2 410.3,263.9 412.3,262.6 408.6,260Z" fill="#1b3afb"/>
<path d="M486.3,203.7 490.3,201.6 492.2,195.8 488.1,197.1Z" fill="#ff0000"/>
<path d="M419.8,267 423.6,268.5 425.4,263.8 421.8,264.8Z" fill="#00b978"/>
<path d="M472.2,256.8 476.1,256.2 477.9,252.3 473.9,253.2Z" fill="#8b00ff"/>
<path d="M390.8,232.2 395.2,242.7 397.3,240.5 392.9,229.9Z" fill="#ff0000"/>
<path d="M398.9,254.9 402.7,258.2 404.8,257 401,253.3Z" fill="#7200ff"/>
<path d="M459.2,265.9 463,266.4 464.8,262.9 461,260.9Z" fill="#105be8"/>
<path d="M453.6,266.3 457.4,267.4 459.2,265.9 455.4,265.2Z" fill="#00b385"/>
<path d="M464.8,262.9 468.7,263.7 470.4,260.3 466.6,259.9Z" fill="#252afd"/>
<path d="M410.3,263.9 414.1,266.6 416.1,265 412.3,262.6Z" fill="#0a75d0"/>
<path d="M395.1,251.4 398.9,254.9 401,253.3 397.1,249.2Z" fill="#ad00ff"/>
<path d="M488.1,197.1 492.2,195.8 494,190.2 490,190.7Z" fill="#ff0000"/>
<path d="M482.9,227.8 487,223.5 488.9,217 484.8,220.6Z" fill="#ff0000"/>
<path d="M414.1,266.6 417.9,269.1 419.8,267 416.1,265Z" fill="#00bb75"/>
<path d="M390.6,218.1 394.9,227.6 396.9,225.2 392.6,215.8Z" fill="#ff0000"/>
<path d="M448,268.7 451.8,267.4 453.6,266.3 449.8,266.4Z" fill="#00b978"/>
<path d="M490,190.7 494,190.2 495.8,184.6 491.9,184.1Z" fill="#fc0000"/>
<path d="M390.5,205.2 394.7,213.2 396.7,210.6 392.5,202.6Z" fill="#ff0000"/>
<path d="M423.6,268.5 427.3,270 429.2,267.3 425.4,263.8Z" fill="#00be6d"/>
<path d="M391.1,247.1 395.1,251.4 397.1,249.2 393.2,244.9Z" fill="#f433f8"/>
<path d="M470.4,260.3 474.4,258.7 476.1,256.2 472.2,256.8Z" fill="#6a01ff"/>
<path d="M438.6,265 442.4,268.6 444.2,266.3 440.4,262.8Z" fill="#0a74d1"/>
<path d="M442.4,268.6 446.2,270.9 448,268.7 444.2,266.3Z" fill="#00cf46"/>
<path d="M463,266.4 466.9,267 468.7,263.7 464.8,262.9Z" fill="#1446fa"/>
<path d="M479.6,248.3 483.6,247 485.5,240.2 481.4,244.2Z" fill="#ff75ab"/>
<path d="M457.4,267.4 461.3,268.8 463,266.4 459.2,265.9Z" fill="#00a7a0"/>
<path d="M484.8,220.6 488.9,217 490.8,211 486.6,213.9Z" fill="#ff0000"/>
<path d="M433,269.3 436.7,268.2 438.6,265 434.9,267.1Z" fill="#00ae91"/>
<path d="M427.3,270 431.1,271.5 433,269.3 429.2,267.3Z" fill="#06d73a"/>
<path d="M417.9,269.1 421.6,269.8 423.6,268.5 419.8,267Z" fill="#00cb51"/>
<path d="M477.9,252.3 481.8,251.3 483.6,247 479.6,248.3Z" fill="#f22dfc"/>
<path d="M400.8,261.3 404.6,264.4 406.6,262.2 402.7,258.2Z" fill="#2f18ff"/>
<path d="M404.6,264.4 408.4,266.9 410.3,263.9 406.6,262.2Z" fill="#1a3cfb"/>
<path d="M388.8,234.6 393.2,244.9 395.2,242.7 390.8,232.2Z" fill="#ff0000"/>
<path d="M481.4,244.2 485.5,240.2 487.4,233.1 483.2,237.7Z" fill="#ff0000"/>
<path d="M396.9,257.7 400.8,261.3 402.7,258.2 398.9,254.9Z" fill="#6f00ff"/>
<path d="M486.6,213.9 490.8,211 492.6,205.4 488.5,207.6Z" fill="#ff0000"/>
<path d="M476.1,256.2 480,256 481.8,251.3 477.9,252.3Z" fill="#b900ff"/>
<path d="M408.4,266.9 412.2,269.3 414.1,266.6 410.3,263.9Z" fill="#0a78ce"/>
<path d="M393,253.7 396.9,257.7 398.9,254.9 395.1,251.4Z" fill="#aa00ff"/>
<path d="M488.5,207.6 492.6,205.4 494.4,200 490.3,201.6Z" fill="#ff0000"/>
<path d="M468.7,263.7 472.6,262 474.4,258.7 470.4,260.3Z" fill="#490cff"/>
<path d="M388.4,207.8 392.6,215.8 394.7,213.2 390.5,205.2Z" fill="#ff0000"/>
<path d="M490.3,201.6 494.4,200 496.2,194.9 492.2,195.8Z" fill="#ff0000"/>
<path d="M388.5,220.1 392.9,229.9 394.9,227.6 390.6,218.1Z" fill="#ff0000"/>
<path d="M492.2,195.8 496.2,194.9 498,189.9 494,190.2Z" fill="#ff0000"/>
<path d="M494,190.2 498,189.9 499.8,185 495.8,184.6Z" fill="#fa0000"/>
<path d="M421.6,269.8 425.4,271.6 427.3,270 423.6,268.5Z" fill="#00cf46"/>
<path d="M412.2,269.3 415.9,271.2 417.9,269.1 414.1,266.6Z" fill="#00bb74"/>
<path d="M461.3,268.8 465.1,270.1 466.9,267 463,266.4Z" fill="#0493b5"/>
<path d="M446.2,270.9 450,269.8 451.8,267.4 448,268.7Z" fill="#00b483"/>
<path d="M483.2,237.7 487.4,233.1 489.3,226.4 485.1,230.4Z" fill="#ff0000"/>
<path d="M431.1,271.5 434.9,272.9 436.7,268.2 433,269.3Z" fill="#00d33f"/>
<path d="M389.1,249.3 393,253.7 395.1,251.4 391.1,247.1Z" fill="#f22efb"/>
<path d="M436.7,268.2 440.5,270.9 442.4,268.6 438.6,265Z" fill="#0490b8"/>
<path d="M474.4,258.7 478.3,260.7 480,256 476.1,256.2Z" fill="#8c00ff"/>
<path d="M440.5,270.9 444.4,273.2 446.2,270.9 442.4,268.6Z" fill="#01d43c"/>
<path d="M466.9,267 470.8,267.8 472.6,262 468.7,263.7Z" fill="#232cfd"/>
<path d="M451.8,267.4 455.7,264.6 457.4,267.4 453.6,266.3Z" fill="#183ffb"/>
<path d="M398.7,263.1 402.6,266.6 404.6,264.4 400.8,261.3Z" fill="#2d1dfe"/>
<path d="M425.4,271.6 429.2,273.6 431.1,271.5 427.3,270Z" fill="#07d83a"/>
<path d="M415.9,271.2 419.7,272.8 421.6,269.8 417.9,269.1Z" fill="#00ca52"/>
<path d="M386.7,237 391.1,247.1 393.2,244.9 388.8,234.6Z" fill="#ff0000"/>
<path d="M402.6,266.6 406.3,268.6 408.4,266.9 404.6,264.4Z" fill="#1840fb"/>
<path d="M394.8,259.6 398.7,263.1 400.8,261.3 396.9,257.7Z" fill="#6702ff"/>
<path d="M485.1,230.4 489.3,226.4 491.2,220 487,223.5Z" fill="#ff0000"/>
<path d="M386.3,210 390.6,218.1 392.6,215.8 388.4,207.8Z" fill="#ff0000"/>
<path d="M455.7,264.6 459.5,271.5 461.3,268.8 457.4,267.4Z" fill="#134bf5"/>
<path d="M390.9,255.9 394.8,259.6 396.9,257.7 393,253.7Z" fill="#a500ff"/>
<path d="M406.3,268.6 410.1,271 412.2,269.3 408.4,266.9Z" fill="#0785c1"/>
<path d="M434.9,272.9 438.7,274.3 440.5,270.9 436.7,268.2Z" fill="#00cd4c"/>
<path d="M472.6,262 476.5,264.2 478.3,260.7 474.4,258.7Z" fill="#6802ff"/>
<path d="M498,189.9 502.1,189.8 503.8,185.5 499.8,185Z" fill="#f90000"/>
<path d="M465.1,270.1 469.1,269.9 470.8,267.8 466.9,267Z" fill="#0f5fe4"/>
<path d="M459.5,271.5 463.4,273.1 465.1,270.1 461.3,268.8Z" fill="#00b482"/>
<path d="M480,256 484,256.4 485.8,251.1 481.8,251.3Z" fill="#e11cff"/>
<path d="M386.4,222.1 390.8,232.2 392.9,229.9 388.5,220.1Z" fill="#ff0000"/>
<path d="M481.8,251.3 485.8,251.1 487.8,243.2 483.6,247Z" fill="#ff75aa"/>
<path d="M478.3,260.7 482.2,261.5 484,256.4 480,256Z" fill="#9700ff"/>
<path d="M487,223.5 491.2,220 493.1,214.2 488.9,217Z" fill="#ff0000"/>
<path d="M496.2,194.9 500.3,194.3 502.1,189.8 498,189.9Z" fill="#fd0000"/>
<path d="M429.2,273.6 433,274.2 434.9,272.9 431.1,271.5Z" fill="#09d939"/>
<path d="M410.1,271 413.9,273.4 415.9,271.2 412.2,269.3Z" fill="#00bd6f"/>
<path d="M419.7,272.8 423.5,274.3 425.4,271.6 421.6,269.8Z" fill="#00cf48"/>
<path d="M444.4,273.2 448.2,272.1 450,269.8 446.2,270.9Z" fill="#00bb74"/>
<path d="M387,251.5 390.9,255.9 393,253.7 389.1,249.3Z" fill="#f028ff"/>
<path d="M470.8,267.8 474.7,268.7 476.5,264.2 472.6,262Z" fill="#2d1cfe"/>
<path d="M438.7,274.3 442.5,275.5 444.4,273.2 440.5,270.9Z" fill="#0ad939"/>
<path d="M494.4,200 498.5,198.9 500.3,194.3 496.2,194.9Z" fill="#ff0000"/>
<path d="M488.9,217 493.1,214.2 494.9,208.7 490.8,211Z" fill="#ff0000"/>
<path d="M476.5,264.2 480.4,266 482.2,261.5 478.3,260.7Z" fill="#5b06ff"/>
<path d="M492.6,205.4 496.7,203.7 498.5,198.9 494.4,200Z" fill="#ff0000"/>
<path d="M490.8,211 494.9,208.7 496.7,203.7 492.6,205.4Z" fill="#ff0000"/>
<path d="M483.6,247 487.8,243.2 489.7,235.9 485.5,240.2Z" fill="#ff0000"/>
<path d="M384.6,239.4 389.1,249.3 391.1,247.1 386.7,237Z" fill="#ff0000"/>
<path d="M396.7,265.5 400.5,268.8 402.6,266.6 398.7,263.1Z" fill="#2c1efe"/>
<path d="M413.9,273.4 417.7,274.5 419.7,272.8 415.9,271.2Z" fill="#00cf48"/>
<path d="M423.5,274.3 427.3,275.8 429.2,273.6 425.4,271.6Z" fill="#06d73a"/>
<path d="M400.5,268.8 404.3,271.1 406.3,268.6 402.6,266.6Z" fill="#1840fb"/>
<path d="M392.8,262 396.7,265.5 398.7,263.1 394.8,259.6Z" fill="#6603ff"/>
<path d="M474.7,268.7 478.6,269.9 480.4,266 476.5,264.2Z" fill="#2922fe"/>
<path d="M433,274.2 436.8,275.7 438.7,274.3 434.9,272.9Z" fill="#08d839"/>
<path d="M469.1,269.9 473,271 474.7,268.7 470.8,267.8Z" fill="#183ffb"/>
<path d="M502.1,189.8 506.1,189.9 507.9,185.9 503.8,185.5Z" fill="#f70000"/>
<path d="M384.2,211.7 388.5,220.1 390.6,218.1 386.3,210Z" fill="#ff0000"/>
<path d="M457.7,273.8 461.6,275.5 463.4,273.1 459.5,271.5Z" fill="#00c65b"/>
<path d="M388.8,258.2 392.8,262 394.8,259.6 390.9,255.9Z" fill="#a200ff"/>
<path d="M450,269.8 453.9,266.9 455.7,264.6 451.8,267.4Z" fill="#2b20fe"/>
<path d="M404.3,271.1 408.1,273.5 410.1,271 406.3,268.6Z" fill="#0782c4"/>
<path d="M384.3,224.1 388.8,234.6 390.8,232.2 386.4,222.1Z" fill="#ff0000"/>
<path d="M463.4,273.1 467.4,270.5 469.1,269.9 465.1,270.1Z" fill="#0e63e0"/>
<path d="M442.5,275.5 446.3,276.7 448.2,272.1 444.4,273.2Z" fill="#02d53b"/>
<path d="M485.5,240.2 489.7,235.9 491.6,229.3 487.4,233.1Z" fill="#ff0000"/>
<path d="M482.2,261.5 486.2,261.1 488,255.9 484,256.4Z" fill="#b400ff"/>
<path d="M500.3,194.3 504.4,193.9 506.1,189.9 502.1,189.8Z" fill="#fb0000"/>
<path d="M484,256.4 488,255.9 489.9,249.5 485.8,251.1Z" fill="#fe4de8"/>
<path d="M417.7,274.5 421.5,276 423.5,274.3 419.7,272.8Z" fill="#00d33d"/>
<path d="M427.3,275.8 431.1,277.2 433,274.2 429.2,273.6Z" fill="#08d839"/>
<path d="M480.4,266 484.4,266 486.2,261.1 482.2,261.5Z" fill="#6f00ff"/>
<path d="M408.1,273.5 411.9,275.6 413.9,273.4 410.1,271Z" fill="#00bc71"/>
<path d="M384.9,253.8 388.8,258.2 390.9,255.9 387,251.5Z" fill="#eb24ff"/>
<path d="M453.9,266.9 457.7,273.8 459.5,271.5 455.7,264.6Z" fill="#2131fc"/>
<path d="M436.8,275.7 440.6,277.8 442.5,275.5 438.7,274.3Z" fill="#0edb37"/>
<path d="M473,271 476.9,272.4 478.6,269.9 474.7,268.7Z" fill="#1a3cfb"/>
<path d="M498.5,198.9 502.6,198 504.4,193.9 500.3,194.3Z" fill="#ff0000"/>
<path d="M487.4,233.1 491.6,229.3 493.5,223 489.3,226.4Z" fill="#ff0000"/>
<path d="M478.6,269.9 482.6,270.3 484.4,266 480.4,266Z" fill="#2f18ff"/>
<path d="M382.5,241.9 387,251.5 389.1,249.3 384.6,239.4Z" fill="#ff0000"/>
<path d="M394.6,267.9 398.5,271 400.5,268.8 396.7,265.5Z" fill="#2a22fe"/>
<path d="M448.2,272.1 452,272.9 453.9,266.9 450,269.8Z" fill="#1c39fb"/>
<path d="M506.1,189.9 510.2,190 511.9,186.4 507.9,185.9Z" fill="#f60000"/>
<path d="M421.5,276 425.3,278 427.3,275.8 423.5,274.3Z" fill="#07d83a"/>
<path d="M411.9,275.6 415.7,276.9 417.7,274.5 413.9,273.4Z" fill="#00cd4b"/>
<path d="M390.7,264.3 394.6,267.9 396.7,265.5 392.8,262Z" fill="#5e05ff"/>
<path d="M398.5,271 402.3,273.4 404.3,271.1 400.5,268.8Z" fill="#1544fa"/>
<path d="M496.7,203.7 500.9,202.3 502.6,198 498.5,198.9Z" fill="#ff0000"/>
<path d="M485.8,251.1 489.9,249.5 492,240.8 487.8,243.2Z" fill="#ff0000"/>
<path d="M489.3,226.4 493.5,223 495.4,217.2 491.2,220Z" fill="#ff0000"/>
<path d="M431.1,277.2 434.9,278.7 436.8,275.7 433,274.2Z" fill="#08d839"/>
<path d="M455.9,276.2 459.8,277.9 461.6,275.5 457.7,273.8Z" fill="#00cf46"/>
<path d="M446.3,276.7 450.2,277.9 452,272.9 448.2,272.1Z" fill="#00ba77"/>
<path d="M494.9,208.7 499.1,206.9 500.9,202.3 496.7,203.7Z" fill="#ff0000"/>
<path d="M386.7,260.4 390.7,264.3 392.8,262 388.8,258.2Z" fill="#9d00ff"/>
<path d="M440.6,277.8 444.5,278.2 446.3,276.7 442.5,275.5Z" fill="#0cdb38"/>
<path d="M382,213.5 386.4,222.1 388.5,220.1 384.2,211.7Z" fill="#ff0000"/>
<path d="M402.3,273.4 406.1,275.8 408.1,273.5 404.3,271.1Z" fill="#0493b5"/>
<path d="M452,272.9 455.9,276.2 457.7,273.8 453.9,266.9Z" fill="#1155ed"/>
<path d="M491.2,220 495.4,217.2 497.3,211.9 493.1,214.2Z" fill="#ff0000"/>
<path d="M382.1,226.2 386.7,237 388.8,234.6 384.3,224.1Z" fill="#ff0000"/>
<path d="M493.1,214.2 497.3,211.9 499.1,206.9 494.9,208.7Z" fill="#ff0000"/>
<path d="M461.6,275.5 465.6,273.2 467.4,270.5 463.4,273.1Z" fill="#0e63e0"/>
<path d="M476.9,272.4 480.8,274 482.6,270.3 478.6,269.9Z" fill="#1c39fb"/>
<path d="M504.4,193.9 508.5,193.6 510.2,190 506.1,189.9Z" fill="#f90000"/>
<path d="M425.3,278 429.1,279 431.1,277.2 427.3,275.8Z" fill="#0bda38"/>
<path d="M382.7,256.1 386.7,260.4 388.8,258.2 384.9,253.8Z" fill="#e721ff"/>
<path d="M406.1,275.8 409.9,277.8 411.9,275.6 408.1,273.5Z" fill="#00c167"/>
<path d="M415.7,276.9 419.5,278.5 421.5,276 417.7,274.5Z" fill="#00d045"/>
<path d="M486.2,261.1 490.3,260.7 492.1,255.2 488,255.9Z" fill="#e21dff"/>
<path d="M434.9,278.7 438.7,280.2 440.6,277.8 436.8,275.7Z" fill="#0fdc37"/>
<path d="M484.4,266 488.4,265.8 490.3,260.7 486.2,261.1Z" fill="#9400ff"/>
<path d="M450.2,277.9 454.1,279.2 455.9,276.2 452,272.9Z" fill="#00c759"/>
<path d="M467.4,270.5 471.4,267.9 473,271 469.1,269.9Z" fill="#2f19ff"/>
<path d="M380.3,244.3 384.9,253.8 387,251.5 382.5,241.9Z" fill="#ff0000"/>
<path d="M510.2,190 514.3,190.1 516,186.8 511.9,186.4Z" fill="#f50000"/>
<path d="M482.6,270.3 486.6,270.5 488.4,265.8 484.4,266Z" fill="#500aff"/>
<path d="M502.6,198 506.8,197.4 508.5,193.6 504.4,193.9Z" fill="#fc0000"/>
<path d="M487.8,243.2 492,240.8 494,232.8 489.7,235.9Z" fill="#ff0000"/>
<path d="M488,255.9 492.1,255.2 494.2,247 489.9,249.5Z" fill="#ff0000"/>
<path d="M444.5,278.2 448.4,279.4 450.2,277.9 446.3,276.7Z" fill="#06d73a"/>
<path d="M392.4,269.6 396.4,273.3 398.5,271 394.6,267.9Z" fill="#2a21fe"/>
<path d="M409.9,277.8 413.7,279.2 415.7,276.9 411.9,275.6Z" fill="#00d143"/>
<path d="M419.5,278.5 423.3,280.2 425.3,278 421.5,276Z" fill="#06d73a"/>
<path d="M396.4,273.3 400.2,275.1 402.3,273.4 398.5,271Z" fill="#1642fa"/>
<path d="M475.1,275.7 479.1,277.4 480.8,274 476.9,272.4Z" fill="#0c6cd8"/>
<path d="M388.5,266.1 392.4,269.6 394.6,267.9 390.7,264.3Z" fill="#6204ff"/>
<path d="M454.1,279.2 458,280.4 459.8,277.9 455.9,276.2Z" fill="#05d73a"/>
<path d="M471.4,267.9 475.1,275.7 476.9,272.4 473,271Z" fill="#2627fd"/>
<path d="M429.1,279 433,280.5 434.9,278.7 431.1,277.2Z" fill="#0cda38"/>
<path d="M438.7,280.2 442.6,281.4 444.5,278.2 440.6,277.8Z" fill="#0fdc37"/>
<path d="M459.8,277.9 463.8,276.6 465.6,273.2 461.6,275.5Z" fill="#058eba"/>
<path d="M379.9,228.3 384.6,239.4 386.7,237 382.1,226.2Z" fill="#ff0000"/>
<path d="M384.6,262.7 388.5,266.1 390.7,264.3 386.7,260.4Z" fill="#9c00ff"/>
<path d="M500.9,202.3 505,201.3 506.8,197.4 502.6,198Z" fill="#ff0000"/>
<path d="M480.8,274 484.9,273.7 486.6,270.5 482.6,270.3Z" fill="#2726fd"/>
<path d="M379.8,215.3 384.3,224.1 386.4,222.1 382,213.5Z" fill="#ff0000"/>
<path d="M400.2,275.1 404,277.7 406.1,275.8 402.3,273.4Z" fill="#0688bf"/>
<path d="M508.5,193.6 512.7,193.5 514.3,190.1 510.2,190Z" fill="#f80000"/>
<path d="M489.7,235.9 494,232.8 495.9,226.1 491.6,229.3Z" fill="#ff0000"/>
<path d="M448.4,279.4 452.2,281 454.1,279.2 450.2,277.9Z" fill="#06d73a"/>
<path d="M380.6,258.4 384.6,262.7 386.7,260.4 382.7,256.1Z" fill="#e21dff"/>
<path d="M413.7,279.2 417.5,280.8 419.5,278.5 415.7,276.9Z" fill="#02d53b"/>
<path d="M499.1,206.9 503.3,205.5 505,201.3 500.9,202.3Z" fill="#ff0000"/>
<path d="M423.3,280.2 427.2,281.5 429.1,279 425.3,278Z" fill="#0ad939"/>
<path d="M404,277.7 407.9,280.1 409.9,277.8 406.1,275.8Z" fill="#00bf6b"/>
<path d="M433,280.5 436.8,282.4 438.7,280.2 434.9,278.7Z" fill="#12de36"/>
<path d="M514.3,190.1 518.5,190 520.2,186.9 516,186.8Z" fill="#f30000"/>
<path d="M489.9,249.5 494.2,247 496.2,238.7 492,240.8Z" fill="#ff0000"/>
<path d="M378.2,246.7 382.7,256.1 384.9,253.8 380.3,244.3Z" fill="#ff0000"/>
<path d="M488.4,265.8 492.5,265.5 494.4,260.1 490.3,260.7Z" fill="#bc00ff"/>
<path d="M491.6,229.3 495.9,226.1 497.8,220.3 493.5,223Z" fill="#ff0000"/>
<path d="M497.3,211.9 501.5,210 503.3,205.5 499.1,206.9Z" fill="#ff0000"/>
<path d="M473.4,278.4 477.3,280.6 479.1,277.4 475.1,275.7Z" fill="#00ad92"/>
<path d="M486.6,270.5 490.7,270.4 492.5,265.5 488.4,265.8Z" fill="#7600ff"/>
<path d="M490.3,260.7 494.4,260.1 496.3,253.3 492.1,255.2Z" fill="#ff59d8"/>
<path d="M458,280.4 461.9,281.7 463.8,276.6 459.8,277.9Z" fill="#00c65b"/>
<path d="M506.8,197.4 511,196.9 512.7,193.5 508.5,193.6Z" fill="#fa0000"/>
<path d="M493.5,223 497.8,220.3 499.7,214.9 495.4,217.2Z" fill="#ff0000"/>
<path d="M495.4,217.2 499.7,214.9 501.5,210 497.3,211.9Z" fill="#ff0000"/>
<path d="M442.6,281.4 446.5,282.6 448.4,279.4 444.5,278.2Z" fill="#08d839"/>
<path d="M390.4,272.6 394.3,275.6 396.4,273.3 392.4,269.6Z" fill="#2824fd"/>
<path d="M479.1,277.4 483.2,275.4 484.9,273.7 480.8,274Z" fill="#1c39fb"/>
<path d="M417.5,280.8 421.4,282.4 423.3,280.2 419.5,278.5Z" fill="#08d839"/>
<path d="M386.4,269 390.4,272.6 392.4,269.6 388.5,266.1Z" fill="#5c06ff"/>
<path d="M452.2,281 456.2,282.8 458,280.4 454.1,279.2Z" fill="#09d939"/>
<path d="M394.3,275.6 398.1,278.1 400.2,275.1 396.4,273.3Z" fill="#1545fa"/>
<path d="M407.9,280.1 411.6,280.9 413.7,279.2 409.9,277.8Z" fill="#00cd4c"/>
<path d="M427.2,281.5 431,283 433,280.5 429.1,279Z" fill="#0ad939"/>
<path d="M377.8,230.5 382.5,241.9 384.6,239.4 379.9,228.3Z" fill="#ff0000"/>
<path d="M436.8,282.4 440.7,283.3 442.6,281.4 438.7,280.2Z" fill="#13de36"/>
<path d="M382.4,265 386.4,269 388.5,266.1 384.6,262.7Z" fill="#9700ff"/>
<path d="M465.6,273.2 469.6,270.6 471.4,267.9 467.4,270.5Z" fill="#5608ff"/>
<path d="M484.9,273.7 489,274 490.7,270.4 486.6,270.5Z" fill="#3f10ff"/>
<path d="M512.7,193.5 516.9,193.1 518.5,190 514.3,190.1Z" fill="#f60000"/>
<path d="M398.1,278.1 402,280.5 404,277.7 400.2,275.1Z" fill="#0493b5"/>
<path d="M377.6,217.1 382.1,226.2 384.3,224.1 379.8,215.3Z" fill="#ff0000"/>
<path d="M505,201.3 509.2,200.5 511,196.9 506.8,197.4Z" fill="#fd0000"/>
<path d="M469.6,270.6 473.4,278.4 475.1,275.7 471.4,267.9Z" fill="#3116ff"/>
<path d="M492.1,255.2 496.3,253.3 498.4,244.6 494.2,247Z" fill="#ff0000"/>
<path d="M378.4,260.7 382.4,265 384.6,262.7 380.6,258.4Z" fill="#de19ff"/>
<path d="M446.5,282.6 450.4,283.9 452.2,281 448.4,279.4Z" fill="#09d939"/>
<path d="M421.4,282.4 425.2,283.8 427.2,281.5 423.3,280.2Z" fill="#0cda38"/>
<path d="M492,240.8 496.2,238.7 498.2,231.1 494,232.8Z" fill="#ff0000"/>
<path d="M402,280.5 405.8,282.3 407.9,280.1 404,277.7Z" fill="#00c264"/>
<path d="M518.5,190 522.8,189.7 524.4,186.7 520.2,186.9Z" fill="#f20000"/>
<path d="M411.6,280.9 415.5,282.7 417.5,280.8 413.7,279.2Z" fill="#00d045"/>
<path d="M431,283 434.9,284.7 436.8,282.4 433,280.5Z" fill="#11dd36"/>
<path d="M463.8,276.6 467.7,277.9 469.6,270.6 465.6,273.2Z" fill="#2a21fe"/>
<path d="M471.6,280.9 475.6,283.1 477.3,280.6 473.4,278.4Z" fill="#00c167"/>
<path d="M376,249.3 380.6,258.4 382.7,256.1 378.2,246.7Z" fill="#ff0000"/>
<path d="M461.9,281.7 465.9,283 467.7,277.9 463.8,276.6Z" fill="#00ac96"/>
<path d="M456.2,282.8 460.1,283.2 461.9,281.7 458,280.4Z" fill="#06d73a"/>
<path d="M503.3,205.5 507.5,204.3 509.2,200.5 505,201.3Z" fill="#ff0000"/>
<path d="M477.3,280.6 481.5,278.8 483.2,275.4 479.1,277.4Z" fill="#1251f0"/>
<path d="M440.7,283.3 444.6,284.6 446.5,282.6 442.6,281.4Z" fill="#0fdc37"/>
<path d="M467.7,277.9 471.6,280.9 473.4,278.4 469.6,270.6Z" fill="#1b3afb"/>
<path d="M511,196.9 515.2,196.3 516.9,193.1 512.7,193.5Z" fill="#f80000"/>
<path d="M492.5,265.5 496.7,265 498.6,259.4 494.4,260.1Z" fill="#ec25ff"/>
<path d="M490.7,270.4 494.8,270.2 496.7,265 492.5,265.5Z" fill="#9c00ff"/>
<path d="M388.1,273.8 392.1,277.9 394.3,275.6 390.4,272.6Z" fill="#2824fd"/>
<path d="M450.4,283.9 454.3,285.2 456.2,282.8 452.2,281Z" fill="#0cdb38"/>
<path d="M483.2,275.4 487.2,276.9 489,274 484.9,273.7Z" fill="#2f19fe"/>
<path d="M405.8,282.3 409.6,283.9 411.6,280.9 407.9,280.1Z" fill="#00cf47"/>
<path d="M415.5,282.7 419.4,284.7 421.4,282.4 417.5,280.8Z" fill="#06d73a"/>
<path d="M425.2,283.8 429.1,285.3 431,283 427.2,281.5Z" fill="#0edb37"/>
<path d="M375.5,232.3 380.3,244.3 382.5,241.9 377.8,230.5Z" fill="#ff0000"/>
<path d="M465.9,283 469.8,284.3 471.6,280.9 467.7,277.9Z" fill="#00bc72"/>
<path d="M501.5,210 505.7,208.5 507.5,204.3 503.3,205.5Z" fill="#ff0000"/>
<path d="M494,232.8 498.2,231.1 500.2,224.1 495.9,226.1Z" fill="#ff0000"/>
<path d="M489,274 493,275 494.8,270.2 490.7,270.4Z" fill="#5d06ff"/>
<path d="M434.9,284.7 438.8,285.9 440.7,283.3 436.8,282.4Z" fill="#13de36"/>
<path d="M392.1,277.9 395.8,277.9 398.1,278.1 394.3,275.6Z" fill="#1a3dfb"/>
<path d="M384,268.8 388.1,273.8 390.4,272.6 386.4,269Z" fill="#6902ff"/>
<path d="M516.9,193.1 521.1,192.6 522.8,189.7 518.5,190Z" fill="#f30000"/>
<path d="M494.4,260.1 498.6,259.4 500.7,250.7 496.3,253.3Z" fill="#ff0000"/>
<path d="M380.3,267.4 384,268.8 386.4,269 382.4,265Z" fill="#a000ff"/>
<path d="M375.4,218.9 379.9,228.3 382.1,226.2 377.6,217.1Z" fill="#ff0000"/>
<path d="M460.1,283.2 464.1,284.5 465.9,283 461.9,281.7Z" fill="#01d43c"/>
<path d="M494.2,247 498.4,244.6 500.5,236.7 496.2,238.7Z" fill="#ff0000"/>
<path d="M499.7,214.9 503.9,213 505.7,208.5 501.5,210Z" fill="#ff0000"/>
<path d="M444.6,284.6 448.5,285.9 450.4,283.9 446.5,282.6Z" fill="#0edb37"/>
<path d="M376.2,263 380.3,267.4 382.4,265 378.4,260.7Z" fill="#d916ff"/>
<path d="M395.8,277.9 399.8,282.2 402,280.5 398.1,278.1Z" fill="#0a74d1"/>
<path d="M495.9,226.1 500.2,224.1 502.1,218 497.8,220.3Z" fill="#ff0000"/>
<path d="M509.2,200.5 513.5,199.6 515.2,196.3 511,196.9Z" fill="#fa0000"/>
<path d="M469.8,284.3 473.8,285.6 475.6,283.1 471.6,280.9Z" fill="#00d43c"/>
<path d="M497.8,220.3 502.1,218 503.9,213 499.7,214.9Z" fill="#ff0000"/>
<path d="M522.8,189.7 527,189.3 528.6,186.6 524.4,186.7Z" fill="#f00000"/>
<path d="M475.6,283.1 479.7,281.7 481.5,278.8 477.3,280.6Z" fill="#058bbc"/>
<path d="M373.8,251.9 378.4,260.7 380.6,258.4 376,249.3Z" fill="#ff0000"/>
<path d="M399.8,282.2 403.7,284.6 405.8,282.3 402,280.5Z" fill="#00c362"/>
<path d="M409.6,283.9 413.5,285.5 415.5,282.7 411.6,280.9Z" fill="#00d33d"/>
<path d="M419.4,284.7 423.2,285.5 425.2,283.8 421.4,282.4Z" fill="#09d939"/>
<path d="M429.1,285.3 433,287 434.9,284.7 431,283Z" fill="#13de36"/>
<path d="M487.2,276.9 491.2,279.1 493,275 489,274Z" fill="#3018ff"/>
<path d="M438.8,285.9 442.7,287.2 444.6,284.6 440.7,283.3Z" fill="#0fdc37"/>
<path d="M481.5,278.8 485.5,280.4 487.2,276.9 483.2,275.4Z" fill="#2628fd"/>
<path d="M464.1,284.5 468.1,285.9 469.8,284.3 465.9,283Z" fill="#01d43c"/>
<path d="M454.3,285.2 458.3,282.9 460.1,283.2 456.2,282.8Z" fill="#00c264"/>
<path d="M515.2,196.3 519.5,195.5 521.1,192.6 516.9,193.1Z" fill="#f50000"/>
<path d="M448.5,285.9 452.5,287.6 454.3,285.2 450.4,283.9Z" fill="#10dc37"/>
<path d="M507.5,204.3 511.8,203.2 513.5,199.6 509.2,200.5Z" fill="#fd0000"/>
<path d="M386,276.2 390,280.2 392.1,277.9 388.1,273.8Z" fill="#2a21fe"/>
<path d="M494.8,270.2 499,269.9 500.9,264.5 496.7,265Z" fill="#c606ff"/>
<path d="M413.5,285.5 417.3,287 419.4,284.7 415.5,282.7Z" fill="#08d839"/>
<path d="M496.2,238.7 500.5,236.7 502.5,229.4 498.2,231.1Z" fill="#ff0000"/>
<path d="M373.2,234 378.2,246.7 380.3,244.3 375.5,232.3Z" fill="#ff0000"/>
<path d="M496.3,253.3 500.7,250.7 502.8,242.4 498.4,244.6Z" fill="#ff0000"/>
<path d="M433,287 436.9,288.2 438.8,285.9 434.9,284.7Z" fill="#16e035"/>
<path d="M493,275 497.2,274.4 499,269.9 494.8,270.2Z" fill="#8100ff"/>
<path d="M423.2,285.5 427.1,287 429.1,285.3 425.2,283.8Z" fill="#09d939"/>
<path d="M496.7,265 500.9,264.5 502.9,257 498.6,259.4Z" fill="#ff64c6"/>
<path d="M485.5,280.4 489.5,282.8 491.2,279.1 487.2,276.9Z" fill="#1e36fc"/>
<path d="M403.7,284.6 407.4,283.2 409.6,283.9 405.8,282.3Z" fill="#00ba77"/>
<path d="M473.8,285.6 477.8,286.8 479.7,281.7 475.6,283.1Z" fill="#00c06a"/>
<path d="M521.1,192.6 525.4,192.1 527,189.3 522.8,189.7Z" fill="#f10000"/>
<path d="M373.1,220.8 377.8,230.5 379.9,228.3 375.4,218.9Z" fill="#ff0000"/>
<path d="M390,280.2 393.7,280.2 395.8,277.9 392.1,277.9Z" fill="#2130fc"/>
<path d="M374,265.4 378.1,269.7 380.3,267.4 376.2,263Z" fill="#d512ff"/>
<path d="M442.7,287.2 446.6,288.5 448.5,285.9 444.6,284.6Z" fill="#0edc37"/>
<path d="M505.7,208.5 510,207 511.8,203.2 507.5,204.3Z" fill="#ff0000"/>
<path d="M468.1,285.9 472,288.1 473.8,285.6 469.8,284.3Z" fill="#05d73a"/>
<path d="M381.8,271.1 386,276.2 388.1,273.8 384,268.8Z" fill="#7d00ff"/>
<path d="M371.7,254.5 376.2,263 378.4,260.7 373.8,251.9Z" fill="#ff0000"/>
<path d="M378.1,269.7 381.8,271.1 384,268.8 380.3,267.4Z" fill="#ac00ff"/>
<path d="M527,189.3 531.3,189.1 532.9,186.4 528.6,186.6Z" fill="#ee0000"/>
<path d="M491.2,279.1 495.4,278 497.2,274.4 493,275Z" fill="#490cff"/>
<path d="M479.7,281.7 483.7,283.7 485.5,280.4 481.5,278.8Z" fill="#193efb"/>
<path d="M513.5,199.6 517.8,198.7 519.5,195.5 515.2,196.3Z" fill="#f70000"/>
<path d="M498.2,231.1 502.5,229.4 504.4,222.7 500.2,224.1Z" fill="#ff0000"/>
<path d="M417.3,287 421.2,288.6 423.2,285.5 419.4,284.7Z" fill="#0bda38"/>
<path d="M397.7,284.6 401.6,286.9 403.7,284.6 399.8,282.2Z" fill="#00bf6c"/>
<path d="M427.1,287 431,289.3 433,287 429.1,285.3Z" fill="#11dd36"/>
<path d="M393.7,280.2 397.7,284.6 399.8,282.2 395.8,277.9Z" fill="#1643fa"/>
<path d="M436.9,288.2 440.8,289.7 442.7,287.2 438.8,285.9Z" fill="#14df35"/>
<path d="M407.4,283.2 411.4,287.3 413.5,285.5 409.6,283.9Z" fill="#00be6d"/>
<path d="M503.9,213 508.3,211.2 510,207 505.7,208.5Z" fill="#ff0000"/>
<path d="M483.7,283.7 487.7,286.3 489.5,282.8 485.5,280.4Z" fill="#0c6dd7"/>
<path d="M498.6,259.4 502.9,257 505,248.3 500.7,250.7Z" fill="#ff0000"/>
<path d="M500.2,224.1 504.4,222.7 506.4,216.6 502.1,218Z" fill="#ff0000"/>
<path d="M498.4,244.6 502.8,242.4 504.8,234.8 500.5,236.7Z" fill="#ff0000"/>
<path d="M446.6,288.5 450.6,290.1 452.5,287.6 448.5,285.9Z" fill="#11dd36"/>
<path d="M383.8,278.9 387.8,282.5 390,280.2 386,276.2Z" fill="#2825fd"/>
<path d="M502.1,218 506.4,216.6 508.3,211.2 503.9,213Z" fill="#ff0000"/>
<path d="M519.5,195.5 523.8,194.9 525.4,192.1 521.1,192.6Z" fill="#f30000"/>
<path d="M477.8,286.8 481.9,288 483.7,283.7 479.7,281.7Z" fill="#00a99d"/>
<path d="M489.5,282.8 493.7,281.9 495.4,278 491.2,279.1Z" fill="#2726fd"/>
<path d="M472,288.1 476.1,288.5 477.8,286.8 473.8,285.6Z" fill="#03d63b"/>
<path d="M411.4,287.3 415.3,289.3 417.3,287 413.5,285.5Z" fill="#08d839"/>
<path d="M370.9,235.8 376,249.3 378.2,246.7 373.2,234Z" fill="#ff0000"/>
<path d="M452.5,287.6 456.5,285.4 458.3,282.9 454.3,285.2Z" fill="#00ae91"/>
<path d="M458.3,282.9 462.4,280.7 464.1,284.5 460.1,283.2Z" fill="#1545fa"/>
<path d="M511.8,203.2 516.1,202 517.8,198.7 513.5,199.6Z" fill="#fa0000"/>
<path d="M421.2,288.6 425.1,290.1 427.1,287 423.2,285.5Z" fill="#0bda38"/>
<path d="M499,269.9 503.2,269.4 505.1,263.6 500.9,264.5Z" fill="#f331fa"/>
<path d="M431,289.3 434.9,290 436.9,288.2 433,287Z" fill="#13de36"/>
<path d="M525.4,192.1 529.8,191.7 531.3,189.1 527,189.3Z" fill="#ef0000"/>
<path d="M497.2,274.4 501.4,274.5 503.2,269.4 499,269.9Z" fill="#a900ff"/>
<path d="M387.8,282.5 391.6,283.5 393.7,280.2 390,280.2Z" fill="#1d37fb"/>
<path d="M379.7,274.3 383.8,278.9 386,276.2 381.8,271.1Z" fill="#7300ff"/>
<path d="M440.8,289.7 444.7,291 446.6,288.5 442.7,287.2Z" fill="#14df35"/>
<path d="M371.8,267.7 375.9,272.1 378.1,269.7 374,265.4Z" fill="#d00fff"/>
<path d="M369.5,257.3 374,265.4 376.2,263 371.7,254.5Z" fill="#ff0000"/>
<path d="M375.9,272.1 379.7,274.3 381.8,271.1 378.1,269.7Z" fill="#a400ff"/>
<path d="M370.8,222.1 375.5,232.3 377.8,230.5 373.1,220.8Z" fill="#ff0000"/>
<path d="M531.3,189.1 535.7,188.8 537.2,186.3 532.9,186.4Z" fill="#ec0000"/>
<path d="M466.3,288.3 470.3,290.6 472,288.1 468.1,285.9Z" fill="#04d63b"/>
<path d="M481.9,288 485.9,289.3 487.7,286.3 483.7,283.7Z" fill="#00b979"/>
<path d="M462.4,280.7 466.3,288.3 468.1,285.9 464.1,284.5Z" fill="#0a76cf"/>
<path d="M401.6,286.9 405.2,285 407.4,283.2 403.7,284.6Z" fill="#058cbc"/>
<path d="M500.5,236.7 504.8,234.8 506.8,227.8 502.5,229.4Z" fill="#ff0000"/>
<path d="M391.6,283.5 395.6,287.1 397.7,284.6 393.7,280.2Z" fill="#1058ea"/>
<path d="M395.6,287.1 399.5,289.2 401.6,286.9 397.7,284.6Z" fill="#00c264"/>
<path d="M495.4,278 499.6,278.8 501.4,274.5 497.2,274.4Z" fill="#7500ff"/>
<path d="M487.7,286.3 491.9,285 493.7,281.9 489.5,282.8Z" fill="#1643fa"/>
<path d="M425.1,290.1 429,291.6 431,289.3 427.1,287Z" fill="#12dd36"/>
<path d="M500.9,264.5 505.1,263.6 507.3,254.3 502.9,257Z" fill="#ff0000"/>
<path d="M510,207 514.4,205.7 516.1,202 511.8,203.2Z" fill="#fc0000"/>
<path d="M517.8,198.7 522.2,197.8 523.8,194.9 519.5,195.5Z" fill="#f40000"/>
<path d="M476.1,288.5 480.2,289.7 481.9,288 477.8,286.8Z" fill="#00cc4e"/>
<path d="M415.3,289.3 419,287.9 421.2,288.6 417.3,287Z" fill="#00d240"/>
<path d="M500.7,250.7 505,248.3 507.1,240.4 502.8,242.4Z" fill="#ff0000"/>
<path d="M434.9,290 438.8,291.5 440.8,289.7 436.9,288.2Z" fill="#10dd37"/>
<path d="M381.7,281.9 385.7,284.9 387.8,282.5 383.8,278.9Z" fill="#232dfd"/>
<path d="M444.7,291 448.7,292.5 450.6,290.1 446.6,288.5Z" fill="#15df35"/>
<path d="M502.5,229.4 506.8,227.8 508.8,221.4 504.4,222.7Z" fill="#ff0000"/>
<path d="M377.7,278.5 381.7,281.9 383.8,278.9 379.7,274.3Z" fill="#5608ff"/>
<path d="M523.8,194.9 528.2,194.3 529.8,191.7 525.4,192.1Z" fill="#f00000"/>
<path d="M450.6,290.1 454.6,287.8 456.5,285.4 452.5,287.6Z" fill="#00b385"/>
<path d="M368.6,237.7 373.8,251.9 376,249.3 370.9,235.8Z" fill="#ff0000"/>
<path d="M508.3,211.2 512.6,210.2 514.4,205.7 510,207Z" fill="#ff0000"/>
<path d="M405.2,285 409.3,289.6 411.4,287.3 407.4,283.2Z" fill="#068bbd"/>
<path d="M409.3,289.6 413.2,291.6 415.3,289.3 411.4,287.3Z" fill="#05d73a"/>
<path d="M373.6,274.5 377.7,278.5 379.7,274.3 375.9,272.1Z" fill="#9000ff"/>
<path d="M493.7,281.9 497.9,281.5 499.6,278.8 495.4,278Z" fill="#4e0bff"/>
<path d="M429,291.6 432.9,293.1 434.9,290 431,289.3Z" fill="#14df35"/>
<path d="M504.4,222.7 508.8,221.4 510.7,215.5 506.4,216.6Z" fill="#ff0000"/>
<path d="M470.3,290.6 474.4,289.2 476.1,288.5 472,288.1Z" fill="#00c857"/>
<path d="M529.8,191.7 534.1,191.3 535.7,188.8 531.3,189.1Z" fill="#ed0000"/>
<path d="M367.3,260.2 371.8,267.7 374,265.4 369.5,257.3Z" fill="#ff0000"/>
<path d="M506.4,216.6 510.7,215.5 512.6,210.2 508.3,211.2Z" fill="#ff0000"/>
<path d="M369.5,270.1 373.6,274.5 375.9,272.1 371.8,267.7Z" fill="#cc0bff"/>
<path d="M480.2,289.7 484.2,291.6 485.9,289.3 481.9,288Z" fill="#00cd4c"/>
<path d="M485.9,289.3 490.1,288.8 491.9,285 487.7,286.3Z" fill="#068abd"/>
<path d="M516.1,202 520.5,201.1 522.2,197.8 517.8,198.7Z" fill="#f60000"/>
<path d="M385.7,284.9 389.3,284 391.6,283.5 387.8,282.5Z" fill="#1f34fc"/>
<path d="M438.8,291.5 442.8,293.1 444.7,291 440.8,289.7Z" fill="#12de36"/>
<path d="M535.7,188.8 540.1,188.5 541.6,186.1 537.2,186.3Z" fill="#ea0000"/>
<path d="M501.4,274.5 505.7,273.8 507.5,268.9 503.2,269.4Z" fill="#d513ff"/>
<path d="M419,287.9 423,291.2 425.1,290.1 421.2,288.6Z" fill="#00cd4b"/>
<path d="M464.4,290.8 468.5,293.1 470.3,290.6 466.3,288.3Z" fill="#07d83a"/>
<path d="M502.8,242.4 507.1,240.4 509.2,233.1 504.8,234.8Z" fill="#ff0000"/>
<path d="M399.5,289.2 403.1,287.7 405.2,285 401.6,286.9Z" fill="#058bbc"/>
<path d="M503.2,269.4 507.5,268.9 509.6,260.7 505.1,263.6Z" fill="#ff70b2"/>
<path d="M368.4,223.3 373.2,234 375.5,232.3 370.8,222.1Z" fill="#ff0000"/>
<path d="M502.9,257 507.3,254.3 509.5,246 505,248.3Z" fill="#ff0000"/>
<path d="M423,291.2 427,293.9 429,291.6 425.1,290.1Z" fill="#0fdc37"/>
<path d="M522.2,197.8 526.5,197.3 528.2,194.3 523.8,194.9Z" fill="#f20000"/>
<path d="M499.6,278.8 504,276.1 505.7,273.8 501.4,274.5Z" fill="#a500ff"/>
<path d="M432.9,293.1 436.9,294.5 438.8,291.5 434.9,290Z" fill="#12de36"/>
<path d="M389.3,284 393.2,286.9 395.6,287.1 391.6,283.5Z" fill="#1b3afb"/>
<path d="M393.2,286.9 397.3,290.9 399.5,289.2 395.6,287.1Z" fill="#00a6a2"/>
<path d="M456.5,285.4 460.5,282.9 462.4,280.7 458.3,282.9Z" fill="#3214ff"/>
<path d="M514.4,205.7 518.7,204.9 520.5,201.1 516.1,202Z" fill="#f90000"/>
<path d="M442.8,293.1 446.8,294.9 448.7,292.5 444.7,291Z" fill="#16e035"/>
<path d="M491.9,285 496.2,283.8 497.9,281.5 493.7,281.9Z" fill="#3812ff"/>
<path d="M504.8,234.8 509.2,233.1 511.2,226.3 506.8,227.8Z" fill="#ff0000"/>
<path d="M460.5,282.9 464.4,290.8 466.3,288.3 462.4,280.7Z" fill="#2032fc"/>
<path d="M366.3,239.6 371.7,254.5 373.8,251.9 368.6,237.7Z" fill="#ff0000"/>
<path d="M448.7,292.5 452.7,290.3 454.6,287.8 450.6,290.1Z" fill="#00b87a"/>
<path d="M474.4,289.2 478.4,291.3 480.2,289.7 476.1,288.5Z" fill="#00a99c"/>
<path d="M528.2,194.3 532.5,193.9 534.1,191.3 529.8,191.7Z" fill="#ee0000"/>
<path d="M413.2,291.6 416.9,289.1 419,287.9 415.3,289.3Z" fill="#00aa99"/>
<path d="M407.2,291.8 411.1,294 413.2,291.6 409.3,289.6Z" fill="#05d73a"/>
<path d="M365,263.1 369.5,270.1 371.8,267.7 367.3,260.2Z" fill="#ff0000"/>
<path d="M403.1,287.7 407.2,291.8 409.3,289.6 405.2,285Z" fill="#0687c0"/>
<path d="M534.1,191.3 538.5,191 540.1,188.5 535.7,188.8Z" fill="#eb0000"/>
<path d="M484.2,291.6 488.5,290.3 490.1,288.8 485.9,289.3Z" fill="#00a4a6"/>
<path d="M512.6,210.2 516.9,209.3 518.7,204.9 514.4,205.7Z" fill="#fc0000"/>
<path d="M468.5,293.1 472.6,291.7 474.4,289.2 470.3,290.6Z" fill="#00be6d"/>
<path d="M506.8,227.8 511.2,226.3 513.1,220.1 508.8,221.4Z" fill="#ff0000"/>
<path d="M540.1,188.5 544.5,188.3 546,186 541.6,186.1Z" fill="#e80000"/>
<path d="M505.1,263.6 509.6,260.7 511.8,251.7 507.3,254.3Z" fill="#ff0000"/>
<path d="M427,293.9 430.9,292.9 432.9,293.1 429,291.6Z" fill="#0bda38"/>
<path d="M436.9,294.5 440.9,296 442.8,293.1 438.8,291.5Z" fill="#15df35"/>
<path d="M462.6,293.2 466.6,295.6 468.5,293.1 464.4,290.8Z" fill="#0ada39"/>
<path d="M505,248.3 509.5,246 511.6,238.4 507.1,240.4Z" fill="#ff0000"/>
<path d="M520.5,201.1 524.8,200.5 526.5,197.3 522.2,197.8Z" fill="#f40000"/>
<path d="M478.4,291.3 482.5,293.9 484.2,291.6 480.2,289.7Z" fill="#00bf6b"/>
<path d="M508.8,221.4 513.1,220.1 515.1,214.4 510.7,215.5Z" fill="#ff0000"/>
<path d="M510.7,215.5 515.1,214.4 516.9,209.3 512.6,210.2Z" fill="#ff0000"/>
<path d="M367.1,271.5 371.1,274.1 373.6,274.5 369.5,270.1Z" fill="#e11cff"/>
<path d="M497.9,281.5 502.4,278.3 504,276.1 499.6,278.8Z" fill="#9500ff"/>
<path d="M397.3,290.9 400.9,288.1 403.1,287.7 399.5,289.2Z" fill="#0f60e3"/>
<path d="M490.1,288.8 494.5,287 496.2,283.8 491.9,285Z" fill="#2b20fe"/>
<path d="M371.1,274.1 374.7,273.9 377.7,278.5 373.6,274.5Z" fill="#bd00ff"/>
<path d="M366,224.5 370.9,235.8 373.2,234 368.4,223.3Z" fill="#ff0000"/>
<path d="M446.8,294.9 450.8,295.6 452.7,290.3 448.7,292.5Z" fill="#02d53b"/>
<path d="M526.5,197.3 530.9,196.8 532.5,193.9 528.2,194.3Z" fill="#ef0000"/>
<path d="M421,293.2 425,296.3 427,293.9 423,291.2Z" fill="#07d83a"/>
<path d="M454.6,287.8 458.7,285.3 460.5,282.9 456.5,285.4Z" fill="#3116ff"/>
<path d="M416.9,289.1 421,293.2 423,291.2 419,287.9Z" fill="#0688bf"/>
<path d="M440.9,296 444.9,297.4 446.8,294.9 442.8,293.1Z" fill="#19e134"/>
<path d="M507.1,240.4 511.6,238.4 513.6,231.4 509.2,233.1Z" fill="#ff0000"/>
<path d="M363.9,241.5 369.5,257.3 371.7,254.5 366.3,239.6Z" fill="#ff0000"/>
<path d="M518.7,204.9 523.1,204.2 524.8,200.5 520.5,201.1Z" fill="#f60000"/>
<path d="M458.7,285.3 462.6,293.2 464.4,290.8 460.5,282.9Z" fill="#1f34fc"/>
<path d="M374.7,273.9 378.5,275.4 381.7,281.9 377.7,278.5Z" fill="#a800ff"/>
<path d="M532.5,193.9 537,193.5 538.5,191 534.1,191.3Z" fill="#ec0000"/>
<path d="M362.8,266.2 367.1,271.5 369.5,270.1 365,263.1Z" fill="#ff74ab"/>
<path d="M430.9,292.9 434.8,293.5 436.9,294.5 432.9,293.1Z" fill="#00ca52"/>
<path d="M538.5,191 543,190.7 544.5,188.3 540.1,188.5Z" fill="#e90000"/>
<path d="M411.1,294 414.9,291.8 416.9,289.1 413.2,291.6Z" fill="#01a1a9"/>
<path d="M378.5,275.4 382.5,278.3 385.7,284.9 381.7,281.9Z" fill="#8700ff"/>
<path d="M544.5,188.3 548.9,188.4 550.4,186.1 546,186Z" fill="#e60000"/>
<path d="M472.6,291.7 476.7,293.6 478.4,291.3 474.4,289.2Z" fill="#0782c4"/>
<path d="M505.7,273.8 510.5,267.5 512.1,265.2 507.5,268.9Z" fill="#ff77a6"/>
<path d="M466.6,295.6 470.8,294.1 472.6,291.7 468.5,293.1Z" fill="#00c264"/>
<path d="M507.3,254.3 511.8,251.7 514,243.8 509.5,246Z" fill="#ff0000"/>
<path d="M507.5,268.9 512.1,265.2 514.2,257.8 509.6,260.7Z" fill="#ff0000"/>
<path d="M482.5,293.9 486.8,292 488.5,290.3 484.2,291.6Z" fill="#0687c0"/>
<path d="M460.8,295.7 464.8,298 466.6,295.6 462.6,293.2Z" fill="#0ddb38"/>
<path d="M509.2,233.1 513.6,231.4 515.6,224.9 511.2,226.3Z" fill="#ff0000"/>
<path d="M516.9,209.3 521.3,208.4 523.1,204.2 518.7,204.9Z" fill="#f90000"/>
<path d="M444.9,297.4 448.9,298.7 450.8,295.6 446.8,294.9Z" fill="#17e034"/>
<path d="M524.8,200.5 529.3,200 530.9,196.8 526.5,197.3Z" fill="#f10000"/>
<path d="M404.9,291.2 409,294.9 411.1,294 407.2,291.8Z" fill="#00b288"/>
<path d="M476.7,293.6 480.7,296.3 482.5,293.9 478.4,291.3Z" fill="#00b87b"/>
<path d="M400.9,288.1 404.9,291.2 407.2,291.8 403.1,287.7Z" fill="#183ffb"/>
<path d="M434.8,293.5 438.9,297.8 440.9,296 436.9,294.5Z" fill="#07d83a"/>
<path d="M496.2,283.8 500.7,280.6 502.4,278.3 497.9,281.5Z" fill="#9200ff"/>
<path d="M425,296.3 428.9,294.7 430.9,292.9 427,293.9Z" fill="#00ca52"/>
<path d="M511.2,226.3 515.6,224.9 517.6,218.9 513.1,220.1Z" fill="#ff0000"/>
<path d="M488.5,290.3 492.8,289 494.5,287 490.1,288.8Z" fill="#2727fd"/>
<path d="M515.1,214.4 519.5,213.4 521.3,208.4 516.9,209.3Z" fill="#fd0000"/>
<path d="M513.1,220.1 517.6,218.9 519.5,213.4 515.1,214.4Z" fill="#ff0000"/>
<path d="M452.7,290.3 456.8,288.5 458.7,285.3 454.6,287.8Z" fill="#2d1dfe"/>
<path d="M530.9,196.8 535.4,196.3 537,193.5 532.5,193.9Z" fill="#ed0000"/>
<path d="M382.5,278.3 386.3,278 389.3,284 385.7,284.9Z" fill="#8c00ff"/>
<path d="M438.9,297.8 442.9,299.8 444.9,297.4 440.9,296Z" fill="#19e234"/>
<path d="M363.6,225.7 368.6,237.7 370.9,235.8 366,224.5Z" fill="#ff0000"/>
<path d="M418.9,295.2 423,298.7 425,296.3 421,293.2Z" fill="#03d63b"/>
<path d="M456.8,288.5 460.8,295.7 462.6,293.2 458.7,285.3Z" fill="#1b3afb"/>
<path d="M361.5,243.4 367.3,260.2 369.5,257.3 363.9,241.5Z" fill="#ff0000"/>
<path d="M509.5,246 514,243.8 516,236.6 511.6,238.4Z" fill="#ff0000"/>
<path d="M450.8,295.6 454.8,297 456.8,288.5 452.7,290.3Z" fill="#097acc"/>
<path d="M414.9,291.8 418.9,295.2 421,293.2 416.9,289.1Z" fill="#0c6bd9"/>
<path d="M537,193.5 541.4,193.2 543,190.7 538.5,191Z" fill="#e90000"/>
<path d="M504,276.1 508.8,269.9 510.5,267.5 505.7,273.8Z" fill="#ff68bf"/>
<path d="M548.9,188.4 553.4,188.5 554.8,186.4 550.4,186.1Z" fill="#e50000"/>
<path d="M523.1,204.2 527.5,203.5 529.3,200 524.8,200.5Z" fill="#f30000"/>
<path d="M543,190.7 547.4,190.6 548.9,188.4 544.5,188.3Z" fill="#e70000"/>
<path d="M448.9,298.7 452.9,300.1 454.8,297 450.8,295.6Z" fill="#12de36"/>
<path d="M509.6,260.7 514.2,257.8 516.4,249.3 511.8,251.7Z" fill="#ff0000"/>
<path d="M470.8,294.1 474.9,296 476.7,293.6 472.6,291.7Z" fill="#0785c2"/>
<path d="M464.8,298 469,296.5 470.8,294.1 466.6,295.6Z" fill="#00c461"/>
<path d="M454.8,297 458.9,298.4 460.8,295.7 456.8,288.5Z" fill="#00a99b"/>
<path d="M458.9,298.4 462.9,300.4 464.8,298 460.8,295.7Z" fill="#0fdc37"/>
<path d="M511.6,238.4 516,236.6 518.1,229.9 513.6,231.4Z" fill="#ff0000"/>
<path d="M480.7,296.3 485,294.4 486.8,292 482.5,293.9Z" fill="#097acc"/>
<path d="M409,294.9 412.6,292.2 414.9,291.8 411.1,294Z" fill="#0d67dd"/>
<path d="M474.9,296 478.9,298.7 480.7,296.3 476.7,293.6Z" fill="#00b87b"/>
<path d="M529.3,200 533.7,199.4 535.4,196.3 530.9,196.8Z" fill="#ef0000"/>
<path d="M494.5,287 499,283 500.7,280.6 496.2,283.8Z" fill="#8e00ff"/>
<path d="M521.3,208.4 525.8,207.6 527.5,203.5 523.1,204.2Z" fill="#f60000"/>
<path d="M386.3,278 390.2,279.7 393.2,286.9 389.3,284Z" fill="#9800ff"/>
<path d="M423,298.7 426.8,297 428.9,294.7 425,296.3Z" fill="#00c460"/>
<path d="M442.9,299.8 446.9,297.8 448.9,298.7 444.9,297.4Z" fill="#0ad939"/>
<path d="M452.9,300.1 457,301.6 458.9,298.4 454.8,297Z" fill="#13de36"/>
<path d="M390.2,279.7 394.2,282.1 397.3,290.9 393.2,286.9Z" fill="#7700ff"/>
<path d="M513.6,231.4 518.1,229.9 520.1,223.6 515.6,224.9Z" fill="#ff0000"/>
<path d="M535.4,196.3 539.8,195.9 541.4,193.2 537,193.5Z" fill="#eb0000"/>
<path d="M486.8,292 491.1,290.9 492.8,289 488.5,290.3Z" fill="#2e1afe"/>
<path d="M519.5,213.4 523.9,212.5 525.8,207.6 521.3,208.4Z" fill="#fa0000"/>
<path d="M359.1,245.3 365,263.1 367.3,260.2 361.5,243.4Z" fill="#ff0000"/>
<path d="M553.4,188.5 557.8,188.6 559.3,186.6 554.8,186.4Z" fill="#e30000"/>
<path d="M515.6,224.9 520.1,223.6 522,217.8 517.6,218.9Z" fill="#ff0000"/>
<path d="M517.6,218.9 522,217.8 523.9,212.5 519.5,213.4Z" fill="#ff0000"/>
<path d="M511.8,251.7 516.4,249.3 518.5,241.8 514,243.8Z" fill="#ff0000"/>
<path d="M436.9,299.8 441,302.2 442.9,299.8 438.9,297.8Z" fill="#14df35"/>
<path d="M541.4,193.2 545.9,193.1 547.4,190.6 543,190.7Z" fill="#e80000"/>
<path d="M547.4,190.6 551.9,190.7 553.4,188.5 548.9,188.4Z" fill="#e50000"/>
<path d="M428.9,294.7 432.7,292.1 434.8,293.5 430.9,292.9Z" fill="#193efb"/>
<path d="M502.4,278.3 507.2,272.2 508.8,269.9 504,276.1Z" fill="#ff67c0"/>
<path d="M361.1,226.9 366.3,239.6 368.6,237.7 363.6,225.7Z" fill="#ff0000"/>
<path d="M462.9,300.4 467.1,300.8 469,296.5 464.8,298Z" fill="#01d53c"/>
<path d="M527.5,203.5 532,202.9 533.7,199.4 529.3,200Z" fill="#f10000"/>
<path d="M432.7,292.1 436.9,299.8 438.9,297.8 434.8,293.5Z" fill="#087ec8"/>
<path d="M469,296.5 473.1,298.4 474.9,296 470.8,294.1Z" fill="#0785c2"/>
<path d="M457,301.6 461.1,302.8 462.9,300.4 458.9,298.4Z" fill="#14df35"/>
<path d="M416.7,294.3 420.8,299.9 423,298.7 418.9,295.2Z" fill="#00ab97"/>
<path d="M412.6,292.2 416.7,294.3 418.9,295.2 414.9,291.8Z" fill="#1f33fc"/>
<path d="M478.9,298.7 483.3,296.8 485,294.4 480.7,296.3Z" fill="#097acc"/>
<path d="M394.2,282.1 398,282.1 400.9,288.1 397.3,290.9Z" fill="#8300ff"/>
<path d="M514,243.8 518.5,241.8 520.6,234.9 516,236.6Z" fill="#ff0000"/>
<path d="M492.8,289 497.3,285.3 499,283 494.5,287Z" fill="#8b00ff"/>
<path d="M473.1,298.4 477.2,301.1 478.9,298.7 474.9,296Z" fill="#00b87b"/>
<path d="M533.7,199.4 538.2,199 539.8,195.9 535.4,196.3Z" fill="#ec0000"/>
<path d="M446.9,297.8 451,299.2 452.9,300.1 448.9,298.7Z" fill="#00c362"/>
<path d="M512.1,265.2 517.1,258.1 519,253.7 514.2,257.8Z" fill="#ff0000"/>
<path d="M525.8,207.6 530.3,206.8 532,202.9 527.5,203.5Z" fill="#f30000"/>
<path d="M557.8,188.6 562.4,188.6 563.8,186.8 559.3,186.6Z" fill="#e20000"/>
<path d="M539.8,195.9 544.3,195.7 545.9,193.1 541.4,193.2Z" fill="#e90000"/>
<path d="M356.6,246.6 362.8,266.2 365,263.1 359.1,245.3Z" fill="#ff0000"/>
<path d="M516,236.6 520.6,234.9 522.6,228.4 518.1,229.9Z" fill="#ff0000"/>
<path d="M363.1,260.5 367.2,263.4 371.1,274.1 367.1,271.5Z" fill="#ff0000"/>
<path d="M551.9,190.7 556.4,190.7 557.8,188.6 553.4,188.5Z" fill="#e40000"/>
<path d="M545.9,193.1 550.4,193 551.9,190.7 547.4,190.6Z" fill="#e60000"/>
<path d="M461.1,302.8 465.2,303.9 467.1,300.8 462.9,300.4Z" fill="#0fdc37"/>
<path d="M485,294.4 489.3,293.3 491.1,290.9 486.8,292Z" fill="#3314ff"/>
<path d="M451,299.2 455.1,302.9 457,301.6 452.9,300.1Z" fill="#03d53b"/>
<path d="M358.9,256.6 363.1,260.5 367.1,271.5 362.8,266.2Z" fill="#ff0000"/>
<path d="M523.9,212.5 528.4,211.6 530.3,206.8 525.8,207.6Z" fill="#f70000"/>
<path d="M420.8,299.9 424.6,296.6 426.8,297 423,298.7Z" fill="#0494b5"/>
<path d="M514.2,257.8 519,253.7 521,246.8 516.4,249.3Z" fill="#ff0000"/>
<path d="M467.1,300.8 471.2,301.8 473.1,298.4 469,296.5Z" fill="#00b18a"/>
<path d="M500.7,280.6 505.5,274.6 507.2,272.2 502.4,278.3Z" fill="#ff66c2"/>
<path d="M510.5,267.5 515.5,260.7 517.1,258.1 512.1,265.2Z" fill="#ff0000"/>
<path d="M441,302.2 445,299 446.9,297.8 442.9,299.8Z" fill="#00ba76"/>
<path d="M518.1,229.9 522.6,228.4 524.6,222.4 520.1,223.6Z" fill="#ff0000"/>
<path d="M434.9,301.7 439,304.1 441,302.2 436.9,299.8Z" fill="#0cda38"/>
<path d="M522,217.8 526.5,216.8 528.4,211.6 523.9,212.5Z" fill="#fc0000"/>
<path d="M426.8,297 430.8,297.1 432.7,292.1 428.9,294.7Z" fill="#1f33fc"/>
<path d="M520.1,223.6 524.6,222.4 526.5,216.8 522,217.8Z" fill="#ff0000"/>
<path d="M532,202.9 536.5,202.3 538.2,199 533.7,199.4Z" fill="#ee0000"/>
<path d="M358.6,228.2 363.9,241.5 366.3,239.6 361.1,226.9Z" fill="#ff0000"/>
<path d="M367.2,263.4 371.2,265.8 374.7,273.9 371.1,274.1Z" fill="#ff0000"/>
<path d="M455.1,302.9 459.2,305.3 461.1,302.8 457,301.6Z" fill="#12de36"/>
<path d="M398,282.1 402,284 404.9,291.2 400.9,288.1Z" fill="#9800ff"/>
<path d="M430.8,297.1 434.9,301.7 436.9,299.8 432.7,292.1Z" fill="#1153ee"/>
<path d="M477.2,301.1 481.5,299.2 483.3,296.8 478.9,298.7Z" fill="#097acc"/>
<path d="M471.2,301.8 475.3,303.5 477.2,301.1 473.1,298.4Z" fill="#00c166"/>
<path d="M402,284 406.1,286.2 409,294.9 404.9,291.2Z" fill="#7700ff"/>
<path d="M538.2,199 542.7,198.7 544.3,195.7 539.8,195.9Z" fill="#ea0000"/>
<path d="M516.4,249.3 521,246.8 523.1,239.9 518.5,241.8Z" fill="#ff0000"/>
<path d="M491.1,290.9 495.6,287.7 497.3,285.3 492.8,289Z" fill="#9000ff"/>
<path d="M562.4,188.6 567,188.6 568.3,187.1 563.8,186.8Z" fill="#e00000"/>
<path d="M465.2,303.9 469.3,305 471.2,301.8 467.1,300.8Z" fill="#04d63b"/>
<path d="M544.3,195.7 548.8,195.6 550.4,193 545.9,193.1Z" fill="#e70000"/>
<path d="M556.4,190.7 561,190.7 562.4,188.6 557.8,188.6Z" fill="#e20000"/>
<path d="M530.3,206.8 534.8,206 536.5,202.3 532,202.9Z" fill="#f10000"/>
<path d="M550.4,193 554.9,193 556.4,190.7 551.9,190.7Z" fill="#e40000"/>
<path d="M371.2,265.8 375.2,268 378.5,275.4 374.7,273.9Z" fill="#ff0000"/>
<path d="M518.5,241.8 523.1,239.9 525.1,233.4 520.6,234.9Z" fill="#ff0000"/>
<path d="M483.3,296.8 487.6,295.7 489.3,293.3 485,294.4Z" fill="#3314ff"/>
<path d="M508.8,269.9 513.8,263.2 515.5,260.7 510.5,267.5Z" fill="#ff0000"/>
<path d="M499,283 503.8,277 505.5,274.6 500.7,280.6Z" fill="#ff66c3"/>
<path d="M459.2,305.3 463.4,303.7 465.2,303.9 461.1,302.8Z" fill="#05d73a"/>
<path d="M528.4,211.6 533,210.7 534.8,206 530.3,206.8Z" fill="#f40000"/>
<path d="M375.2,268 379.1,269.8 382.5,278.3 378.5,275.4Z" fill="#ff0000"/>
<path d="M439,304.1 443,301.8 445,299 441,302.2Z" fill="#00ad94"/>
<path d="M520.6,234.9 525.1,233.4 527.2,227.1 522.6,228.4Z" fill="#ff0000"/>
<path d="M536.5,202.3 541.1,201.9 542.7,198.7 538.2,199Z" fill="#ec0000"/>
<path d="M406.1,286.2 410,286.3 412.6,292.2 409,294.9Z" fill="#8500ff"/>
<path d="M526.5,216.8 531.1,215.8 533,210.7 528.4,211.6Z" fill="#f90000"/>
<path d="M424.6,296.6 428.7,297.9 430.8,297.1 426.8,297Z" fill="#2629fd"/>
<path d="M469.3,305 473.5,306 475.3,303.5 471.2,301.8Z" fill="#00d241"/>
<path d="M522.6,228.4 527.2,227.1 529.1,221.3 524.6,222.4Z" fill="#ff0000"/>
<path d="M356.1,229.5 361.5,243.4 363.9,241.5 358.6,228.2Z" fill="#ff0000"/>
<path d="M475.3,303.5 479.6,302.5 481.5,299.2 477.2,301.1Z" fill="#068abd"/>
<path d="M524.6,222.4 529.1,221.3 531.1,215.8 526.5,216.8Z" fill="#fe0000"/>
<path d="M567,188.6 571.5,189.4 572.9,187.2 568.3,187.1Z" fill="#df0000"/>
<path d="M453.2,304.9 457.3,307.7 459.2,305.3 455.1,302.9Z" fill="#0ad939"/>
<path d="M542.7,198.7 547.2,198.5 548.8,195.6 544.3,195.7Z" fill="#e80000"/>
<path d="M432.8,301.1 436.9,305 439,304.1 434.9,301.7Z" fill="#00b484"/>
<path d="M561,190.7 565.5,191 567,188.6 562.4,188.6Z" fill="#e10000"/>
<path d="M445,299 449,296.6 451,299.2 446.9,297.8Z" fill="#242bfd"/>
<path d="M548.8,195.6 553.4,195.6 554.9,193 550.4,193Z" fill="#e50000"/>
<path d="M428.7,297.9 432.8,301.1 434.9,301.7 430.8,297.1Z" fill="#1a3cfb"/>
<path d="M489.3,293.3 493.9,290.1 495.6,287.7 491.1,290.9Z" fill="#9200ff"/>
<path d="M554.9,193 559.5,193.2 561,190.7 556.4,190.7Z" fill="#e30000"/>
<path d="M379.1,269.8 383.1,271.4 386.3,278 382.5,278.3Z" fill="#ff0000"/>
<path d="M449,296.6 453.2,304.9 455.1,302.9 451,299.2Z" fill="#134df4"/>
<path d="M534.8,206 539.4,205.5 541.1,201.9 536.5,202.3Z" fill="#ee0000"/>
<path d="M463.4,303.7 467.5,305.8 469.3,305 465.2,303.9Z" fill="#00bf6b"/>
<path d="M481.5,299.2 485.8,298.1 487.6,295.7 483.3,296.8Z" fill="#3314ff"/>
<path d="M507.2,272.2 512.1,265.8 513.8,263.2 508.8,269.9Z" fill="#ff0000"/>
<path d="M353.6,245 358.9,256.6 362.8,266.2 356.6,246.6Z" fill="#ff0000"/>
<path d="M497.3,285.3 502.1,279.4 503.8,277 499,283Z" fill="#ff65c4"/>
<path d="M519,253.7 523.9,248.8 525.8,243.6 521,246.8Z" fill="#ff0000"/>
<path d="M410,286.3 414.1,287.9 416.7,294.3 412.6,292.2Z" fill="#a000ff"/>
<path d="M521,246.8 525.8,243.6 527.8,237.9 523.1,239.9Z" fill="#ff0000"/>
<path d="M541.1,201.9 545.6,201.6 547.2,198.5 542.7,198.7Z" fill="#ea0000"/>
<path d="M517.1,258.1 522.2,252.4 523.9,248.8 519,253.7Z" fill="#ff0000"/>
<path d="M533,210.7 537.5,210.1 539.4,205.5 534.8,206Z" fill="#f10000"/>
<path d="M414.1,287.9 418.2,290.9 420.8,299.9 416.7,294.3Z" fill="#7800ff"/>
<path d="M473.5,306 477.8,305.6 479.6,302.5 475.3,303.5Z" fill="#00a6a3"/>
<path d="M457.3,307.7 461.5,305.9 463.4,303.7 459.2,305.3Z" fill="#00c068"/>
<path d="M383.1,271.4 387.1,273 390.2,279.7 386.3,278Z" fill="#ff0000"/>
<path d="M565.5,191 570,191.8 571.5,189.4 567,188.6Z" fill="#e00000"/>
<path d="M523.1,239.9 527.8,237.9 529.8,232 525.1,233.4Z" fill="#ff0000"/>
<path d="M547.2,198.5 551.8,198.5 553.4,195.6 548.8,195.6Z" fill="#e60000"/>
<path d="M467.5,305.8 471.7,308.5 473.5,306 469.3,305Z" fill="#00c856"/>
<path d="M531.1,215.8 535.6,215.1 537.5,210.1 533,210.7Z" fill="#f60000"/>
<path d="M559.5,193.2 564,193.6 565.5,191 561,190.7Z" fill="#e10000"/>
<path d="M553.4,195.6 557.9,195.8 559.5,193.2 554.9,193Z" fill="#e30000"/>
<path d="M436.9,305 440.9,302.3 443,301.8 439,304.1Z" fill="#0c6bd9"/>
<path d="M451.2,307 455.3,310.2 457.3,307.7 453.2,304.9Z" fill="#05d73a"/>
<path d="M525.1,233.4 529.8,232 531.8,226 527.2,227.1Z" fill="#ff0000"/>
<path d="M353.5,230.8 359.1,245.3 361.5,243.4 356.1,229.5Z" fill="#ff0000"/>
<path d="M529.1,221.3 533.7,220.4 535.6,215.1 531.1,215.8Z" fill="#fa0000"/>
<path d="M527.2,227.1 531.8,226 533.7,220.4 529.1,221.3Z" fill="#ff0000"/>
<path d="M487.6,295.7 492.1,292.5 493.9,290.1 489.3,293.3Z" fill="#9200ff"/>
<path d="M443,301.8 447.1,302.9 449,296.6 445,299Z" fill="#2b1ffe"/>
<path d="M387.1,273 391.1,274.6 394.2,282.1 390.2,279.7Z" fill="#ff0000"/>
<path d="M539.4,205.5 543.9,205.1 545.6,201.6 541.1,201.9Z" fill="#ec0000"/>
<path d="M479.6,302.5 484,301.1 485.8,298.1 481.5,299.2Z" fill="#2e1bfe"/>
<path d="M418.2,290.9 422.2,290.6 424.6,296.6 420.8,299.9Z" fill="#7c00ff"/>
<path d="M515.5,260.7 520.5,255.2 522.2,252.4 517.1,258.1Z" fill="#ff0000"/>
<path d="M505.5,274.6 510.5,268.4 512.1,265.8 507.2,272.2Z" fill="#ff0000"/>
<path d="M447.1,302.9 451.2,307 453.2,304.9 449,296.6Z" fill="#1a3cfb"/>
<path d="M495.6,287.7 500.4,281.8 502.1,279.4 497.3,285.3Z" fill="#ff65c4"/>
<path d="M545.6,201.6 550.2,201.4 551.8,198.5 547.2,198.5Z" fill="#e80000"/>
<path d="M564,193.6 568.6,194.3 570,191.8 565.5,191Z" fill="#e00000"/>
<path d="M537.5,210.1 542.1,209.7 543.9,205.1 539.4,205.5Z" fill="#ef0000"/>
<path d="M551.8,198.5 556.4,198.6 557.9,195.8 553.4,195.6Z" fill="#e50000"/>
<path d="M461.5,305.9 465.6,308.3 467.5,305.8 463.4,303.7Z" fill="#087ec8"/>
<path d="M557.9,195.8 562.5,196.2 564,193.6 559.5,193.2Z" fill="#e20000"/>
<path d="M471.7,308.5 476,306.6 477.8,305.6 473.5,306Z" fill="#0396b2"/>
<path d="M455.3,310.2 459.6,308.4 461.5,305.9 457.3,307.7Z" fill="#00bd70"/>
<path d="M391.1,274.6 395.1,276.2 398,282.1 394.2,282.1Z" fill="#ff0000"/>
<path d="M535.6,215.1 540.2,214.5 542.1,209.7 537.5,210.1Z" fill="#f30000"/>
<path d="M465.6,308.3 469.8,311 471.7,308.5 467.5,305.8Z" fill="#00b87b"/>
<path d="M485.8,298.1 490.3,295 492.1,292.5 487.6,295.7Z" fill="#9200ff"/>
<path d="M477.8,305.6 482.2,303.8 484,301.1 479.6,302.5Z" fill="#2628fd"/>
<path d="M533.7,220.4 538.3,219.7 540.2,214.5 535.6,215.1Z" fill="#f70000"/>
<path d="M440.9,302.3 445.1,303.7 447.1,302.9 443,301.8Z" fill="#2922fe"/>
<path d="M531.8,226 536.4,225 538.3,219.7 533.7,220.4Z" fill="#fc0000"/>
<path d="M513.8,263.2 518.8,257.9 520.5,255.2 515.5,260.7Z" fill="#ff0000"/>
<path d="M350.8,231.2 356.6,246.6 359.1,245.3 353.5,230.8Z" fill="#ff0000"/>
<path d="M529.8,232 534.5,230.5 536.4,225 531.8,226Z" fill="#ff0000"/>
<path d="M543.9,205.1 548.6,204.8 550.2,201.4 545.6,201.6Z" fill="#e90000"/>
<path d="M527.8,237.9 532.6,235.6 534.5,230.5 529.8,232Z" fill="#ff0000"/>
<path d="M503.8,277 508.7,271 510.5,268.4 505.5,274.6Z" fill="#ff0000"/>
<path d="M449.2,306.2 453.4,311.5 455.3,310.2 451.2,307Z" fill="#00af8f"/>
<path d="M525.8,243.6 530.7,240.4 532.6,235.6 527.8,237.9Z" fill="#ff0000"/>
<path d="M422.2,290.6 426.3,292 428.7,297.9 424.6,296.6Z" fill="#a500ff"/>
<path d="M395.1,276.2 399.2,277.7 402,284 398,282.1Z" fill="#ff0000"/>
<path d="M493.9,290.1 498.7,284.2 500.4,281.8 495.6,287.7Z" fill="#ff65c4"/>
<path d="M550.2,201.4 554.8,201.4 556.4,198.6 551.8,198.5Z" fill="#e60000"/>
<path d="M562.5,196.2 567.1,196.7 568.6,194.3 564,193.6Z" fill="#e10000"/>
<path d="M445.1,303.7 449.2,306.2 451.2,307 447.1,302.9Z" fill="#1f34fc"/>
<path d="M556.4,198.6 561,198.9 562.5,196.2 557.9,195.8Z" fill="#e30000"/>
<path d="M523.9,248.8 528.9,244.7 530.7,240.4 525.8,243.6Z" fill="#ff0000"/>
<path d="M359.5,253.4 363.7,257.1 367.2,263.4 363.1,260.5Z" fill="#ff0000"/>
<path d="M363.7,257.1 367.9,260.3 371.2,265.8 367.2,263.4Z" fill="#ff0000"/>
<path d="M542.1,209.7 546.7,209.3 548.6,204.8 543.9,205.1Z" fill="#ec0000"/>
<path d="M355.1,248.8 359.5,253.4 363.1,260.5 358.9,256.6Z" fill="#ff0000"/>
<path d="M459.6,308.4 463.7,310.6 465.6,308.3 461.5,305.9Z" fill="#0a75d0"/>
<path d="M426.3,292 430.4,294 432.8,301.1 428.7,297.9Z" fill="#9800ff"/>
<path d="M367.9,260.3 372,263.1 375.2,268 371.2,265.8Z" fill="#ff0000"/>
<path d="M399.2,277.7 403.2,279.2 406.1,286.2 402,284Z" fill="#ff0000"/>
<path d="M469.8,311 474.1,309.1 476,306.6 471.7,308.5Z" fill="#097acc"/>
<path d="M430.4,294 434.6,296.3 436.9,305 432.8,301.1Z" fill="#7700ff"/>
<path d="M540.2,214.5 544.9,214.1 546.7,209.3 542.1,209.7Z" fill="#f00000"/>
<path d="M522.2,252.4 527.1,248 528.9,244.7 523.9,248.8Z" fill="#ff0000"/>
<path d="M463.7,310.6 467.9,313.5 469.8,311 465.6,308.3Z" fill="#00b77e"/>
<path d="M484,301.1 488.5,297.4 490.3,295 485.8,298.1Z" fill="#8f00ff"/>
<path d="M453.4,311.5 457.6,308.3 459.6,308.4 455.3,310.2Z" fill="#058bbc"/>
<path d="M512.1,265.8 517.1,260.7 518.8,257.9 513.8,263.2Z" fill="#ff0000"/>
<path d="M548.6,204.8 553.2,204.6 554.8,201.4 550.2,201.4Z" fill="#e70000"/>
<path d="M372,263.1 376.1,265.3 379.1,269.8 375.2,268Z" fill="#ff0000"/>
<path d="M538.3,219.7 543,219 544.9,214.1 540.2,214.5Z" fill="#f50000"/>
<path d="M476,306.6 480.4,305.6 482.2,303.8 477.8,305.6Z" fill="#2b20fe"/>
<path d="M502.1,279.4 507,273.4 508.7,271 503.8,277Z" fill="#ff0000"/>
<path d="M561,198.9 565.6,199.2 567.1,196.7 562.5,196.2Z" fill="#e20000"/>
<path d="M554.8,201.4 559.5,201.6 561,198.9 556.4,198.6Z" fill="#e40000"/>
<path d="M536.4,225 541.1,224 543,219 538.3,219.7Z" fill="#f90000"/>
<path d="M492.1,292.5 496.9,286.6 498.7,284.2 493.9,290.1Z" fill="#ff65c4"/>
<path d="M403.2,279.2 407.3,280.7 410,286.3 406.1,286.2Z" fill="#ff0000"/>
<path d="M534.5,230.5 539.2,229 541.1,224 536.4,225Z" fill="#fe0000"/>
<path d="M376.1,265.3 380.1,267.1 383.1,271.4 379.1,269.8Z" fill="#ff0000"/>
<path d="M546.7,209.3 551.4,209.1 553.2,204.6 548.6,204.8Z" fill="#ea0000"/>
<path d="M434.6,296.3 438.8,296.4 440.9,302.3 436.9,305Z" fill="#8400ff"/>
<path d="M532.6,235.6 537.4,233.5 539.2,229 534.5,230.5Z" fill="#ff0000"/>
<path d="M520.5,255.2 525.5,250.9 527.1,248 522.2,252.4Z" fill="#ff0000"/>
<path d="M350.3,240.9 355.1,248.8 358.9,256.6 353.6,245Z" fill="#ff0000"/>
<path d="M348.1,231.7 353.6,245 356.6,246.6 350.8,231.2Z" fill="#ff0000"/>
<path d="M467.9,313.5 472.2,312.1 474.1,309.1 469.8,311Z" fill="#0782c4"/>
<path d="M482.2,303.8 486.7,299.9 488.5,297.4 484,301.1Z" fill="#8a00ff"/>
<path d="M544.9,214.1 549.6,213.7 551.4,209.1 546.7,209.3Z" fill="#ee0000"/>
<path d="M510.5,268.4 515.4,263.5 517.1,260.7 512.1,265.8Z" fill="#ff0000"/>
<path d="M530.7,240.4 535.6,237.6 537.4,233.5 532.6,235.6Z" fill="#ff0000"/>
<path d="M553.2,204.6 557.9,204.6 559.5,201.6 554.8,201.4Z" fill="#e60000"/>
<path d="M380.1,267.1 384.2,268.9 387.1,273 383.1,271.4Z" fill="#ff0000"/>
<path d="M407.3,280.7 411.4,282.1 414.1,287.9 410,286.3Z" fill="#ff0000"/>
<path d="M559.5,201.6 564.1,201.8 565.6,199.2 561,198.9Z" fill="#e30000"/>
<path d="M457.6,308.3 461.9,310.1 463.7,310.6 459.6,308.4Z" fill="#1f33fc"/>
<path d="M500.4,281.8 505.3,275.8 507,273.4 502.1,279.4Z" fill="#ff0000"/>
<path d="M461.9,310.1 466,316.1 467.9,313.5 463.7,310.6Z" fill="#068abd"/>
<path d="M543,219 547.7,218.3 549.6,213.7 544.9,214.1Z" fill="#f20000"/>
<path d="M474.1,309.1 478.5,308.1 480.4,305.6 476,306.6Z" fill="#3314ff"/>
<path d="M528.9,244.7 533.8,241.4 535.6,237.6 530.7,240.4Z" fill="#ff0000"/>
<path d="M490.3,295 495.1,289.1 496.9,286.6 492.1,292.5Z" fill="#ff65c4"/>
<path d="M541.1,224 545.9,223 547.7,218.3 543,219Z" fill="#f60000"/>
<path d="M518.8,257.9 523.8,253.9 525.5,250.9 520.5,255.2Z" fill="#ff0000"/>
<path d="M384.2,268.9 388.2,270.7 391.1,274.6 387.1,273Z" fill="#ff0000"/>
<path d="M411.4,282.1 415.5,283.6 418.2,290.9 414.1,287.9Z" fill="#ff0000"/>
<path d="M551.4,209.1 556.1,208.9 557.9,204.6 553.2,204.6Z" fill="#e80000"/>
<path d="M438.8,296.4 443,297.9 445.1,303.7 440.9,302.3Z" fill="#a600ff"/>
<path d="M539.2,229 544,227.7 545.9,223 541.1,224Z" fill="#fa0000"/>
<path d="M508.7,271 513.7,266.3 515.4,263.5 510.5,268.4Z" fill="#ff0000"/>
<path d="M466,316.1 470.4,313.1 472.2,312.1 467.9,313.5Z" fill="#0c6dd7"/>
<path d="M557.9,204.6 562.6,204.6 564.1,201.8 559.5,201.6Z" fill="#e40000"/>
<path d="M549.6,213.7 554.3,213.3 556.1,208.9 551.4,209.1Z" fill="#ec0000"/>
<path d="M480.4,305.6 484.9,302.4 486.7,299.9 482.2,303.8Z" fill="#8e00ff"/>
<path d="M527.1,248 532.1,244.7 533.8,241.4 528.9,244.7Z" fill="#ff0000"/>
<path d="M388.2,270.7 392.3,272.4 395.1,276.2 391.1,274.6Z" fill="#ff0000"/>
<path d="M537.4,233.5 542.2,231.8 544,227.7 539.2,229Z" fill="#fe0000"/>
<path d="M415.5,283.6 419.7,285 422.2,290.6 418.2,290.9Z" fill="#ff0000"/>
<path d="M443,297.9 447.2,299.6 449.2,306.2 445.1,303.7Z" fill="#9f00ff"/>
<path d="M498.7,284.2 503.6,278.3 505.3,275.8 500.4,281.8Z" fill="#ff0000"/>
<path d="M447.2,299.6 451.5,302.6 453.4,311.5 449.2,306.2Z" fill="#7800ff"/>
<path d="M547.7,218.3 552.5,217.7 554.3,213.3 549.6,213.7Z" fill="#ef0000"/>
<path d="M472.2,312.1 476.7,310.7 478.5,308.1 474.1,309.1Z" fill="#3116ff"/>
<path d="M517.1,260.7 522.1,256.8 523.8,253.9 518.8,257.9Z" fill="#ff0000"/>
<path d="M488.5,297.4 493.3,291.6 495.1,289.1 490.3,295Z" fill="#ff65c4"/>
<path d="M556.1,208.9 560.8,208.8 562.6,204.6 557.9,204.6Z" fill="#e60000"/>
<path d="M535.6,237.6 540.5,235.5 542.2,231.8 537.4,233.5Z" fill="#ff0000"/>
<path d="M392.3,272.4 396.4,274.1 399.2,277.7 395.1,276.2Z" fill="#ff0000"/>
<path d="M545.9,223 550.6,222.2 552.5,217.7 547.7,218.3Z" fill="#f30000"/>
<path d="M345.3,232.2 350.3,240.9 353.6,245 348.1,231.7Z" fill="#ff0000"/>
<path d="M360.4,253 364.7,256.6 367.9,260.3 363.7,257.1Z" fill="#ff0000"/>
<path d="M525.5,250.9 530.4,247.8 532.1,244.7 527.1,248Z" fill="#ff0000"/>
<path d="M364.7,256.6 369,260 372,263.1 367.9,260.3Z" fill="#ff0000"/>
<path d="M507,273.4 512,268.8 513.7,266.3 508.7,271Z" fill="#ff0000"/>
<path d="M356.1,248.9 360.4,253 363.7,257.1 359.5,253.4Z" fill="#ff0000"/>
<path d="M419.7,285 423.8,286.4 426.3,292 422.2,290.6Z" fill="#ff0000"/>
<path d="M451.5,302.6 455.7,302.4 457.6,308.3 453.4,311.5Z" fill="#7e00ff"/>
<path d="M554.3,213.3 559,213 560.8,208.8 556.1,208.9Z" fill="#ea0000"/>
<path d="M369,260 373.1,262.4 376.1,265.3 372,263.1Z" fill="#ff0000"/>
<path d="M544,227.7 548.8,226.6 550.6,222.2 545.9,223Z" fill="#f70000"/>
<path d="M478.5,308.1 483.1,305 484.9,302.4 480.4,305.6Z" fill="#9300ff"/>
<path d="M351.6,244 356.1,248.9 359.5,253.4 355.1,248.8Z" fill="#ff0000"/>
<path d="M533.8,241.4 538.8,239 540.5,235.5 535.6,237.6Z" fill="#ff0000"/>
<path d="M396.4,274.1 400.5,275.6 403.2,279.2 399.2,277.7Z" fill="#ff0000"/>
<path d="M515.4,263.5 520.3,259.8 522.1,256.8 517.1,260.7Z" fill="#ff0000"/>
<path d="M496.9,286.6 501.8,280.7 503.6,278.3 498.7,284.2Z" fill="#ff0000"/>
<path d="M552.5,217.7 557.3,217.2 559,213 554.3,213.3Z" fill="#ed0000"/>
<path d="M373.1,262.4 377.2,264.3 380.1,267.1 376.1,265.3Z" fill="#ff0000"/>
<path d="M470.4,313.1 474.7,314 476.7,310.7 472.2,312.1Z" fill="#3214ff"/>
<path d="M542.2,231.8 547.1,230.4 548.8,226.6 544,227.7Z" fill="#fa0000"/>
<path d="M423.8,286.4 428,287.8 430.4,294 426.3,292Z" fill="#ff0000"/>
<path d="M486.7,299.9 491.5,294 493.3,291.6 488.5,297.4Z" fill="#ff65c4"/>
<path d="M523.8,253.9 528.7,250.9 530.4,247.8 525.5,250.9Z" fill="#ff0000"/>
<path d="M400.5,275.6 404.7,277.1 407.3,280.7 403.2,279.2Z" fill="#ff0000"/>
<path d="M550.6,222.2 555.5,221.5 557.3,217.2 552.5,217.7Z" fill="#f00000"/>
<path d="M532.1,244.7 537,242.3 538.8,239 533.8,241.4Z" fill="#ff0000"/>
<path d="M377.2,264.3 381.3,266.2 384.2,268.9 380.1,267.1Z" fill="#ff0000"/>
<path d="M505.3,275.8 510.3,271.2 512,268.8 507,273.4Z" fill="#ff0000"/>
<path d="M346.9,237.5 351.6,244 355.1,248.8 350.3,240.9Z" fill="#ff0000"/>
<path d="M428,287.8 432.3,289.1 434.6,296.3 430.4,294Z" fill="#ff0000"/>
<path d="M540.5,235.5 545.4,233.9 547.1,230.4 542.2,231.8Z" fill="#fc0000"/>
<path d="M455.7,302.4 460,304 461.9,310.1 457.6,308.3Z" fill="#a200ff"/>
<path d="M460,304 464.3,307.3 466,316.1 461.9,310.1Z" fill="#7b00ff"/>
<path d="M513.7,266.3 518.6,262.8 520.3,259.8 515.4,263.5Z" fill="#ff0000"/>
<path d="M476.7,310.7 481.2,307.6 483.1,305 478.5,308.1Z" fill="#9300ff"/>
<path d="M548.8,226.6 553.7,225.8 555.5,221.5 550.6,222.2Z" fill="#f40000"/>
<path d="M404.7,277.1 408.8,278.7 411.4,282.1 407.3,280.7Z" fill="#ff0000"/>
<path d="M381.3,266.2 385.4,268.1 388.2,270.7 384.2,268.9Z" fill="#ff0000"/>
<path d="M495.1,289.1 500,283.2 501.8,280.7 496.9,286.6Z" fill="#ff0000"/>
<path d="M522.1,256.8 527,254 528.7,250.9 523.8,253.9Z" fill="#ff0000"/>
<path d="M484.9,302.4 489.7,296.4 491.5,294 486.7,299.9Z" fill="#ff66c2"/>
<path d="M530.4,247.8 535.3,245.5 537,242.3 532.1,244.7Z" fill="#ff0000"/>
<path d="M432.3,289.1 436.5,290.5 438.8,296.4 434.6,296.3Z" fill="#ff0000"/>
<path d="M538.8,239 543.7,237.3 545.4,233.9 540.5,235.5Z" fill="#fe0000"/>
<path d="M464.3,307.3 468.7,307.1 470.4,313.1 466,316.1Z" fill="#7a00ff"/>
<path d="M547.1,230.4 552,229.4 553.7,225.8 548.8,226.6Z" fill="#f60000"/>
<path d="M385.4,268.1 389.6,270 392.3,272.4 388.2,270.7Z" fill="#ff0000"/>
<path d="M408.8,278.7 413,280.2 415.5,283.6 411.4,282.1Z" fill="#ff0000"/>
<path d="M503.6,278.3 508.5,273.6 510.3,271.2 505.3,275.8Z" fill="#ff0000"/>
<path d="M342.4,232.7 346.9,237.5 350.3,240.9 345.3,232.2Z" fill="#ff0000"/>
<path d="M512,268.8 516.9,265.2 518.6,262.8 513.7,266.3Z" fill="#ff0000"/>
<path d="M474.7,314 479.3,310.2 481.2,307.6 476.7,310.7Z" fill="#8e00ff"/>
<path d="M520.3,259.8 525.2,257.1 527,254 522.1,256.8Z" fill="#ff0000"/>
<path d="M389.6,270 393.7,271.7 396.4,274.1 392.3,272.4Z" fill="#ff0000"/>
<path d="M361.7,254.5 366,258.3 369,260 364.7,256.6Z" fill="#ff0000"/>
<path d="M493.3,291.6 498.3,285.6 500,283.2 495.1,289.1Z" fill="#ff0000"/>
<path d="M528.7,250.9 533.6,248.8 535.3,245.5 530.4,247.8Z" fill="#ff0000"/>
<path d="M545.4,233.9 550.3,232.7 552,229.4 547.1,230.4Z" fill="#f80000"/>
<path d="M436.5,290.5 440.8,291.9 443,297.9 438.8,296.4Z" fill="#ff0000"/>
<path d="M357.3,250.6 361.7,254.5 364.7,256.6 360.4,253Z" fill="#ff0000"/>
<path d="M537,242.3 542,240.6 543.7,237.3 538.8,239Z" fill="#ff0000"/>
<path d="M366,258.3 370.2,260.7 373.1,262.4 369,260Z" fill="#ff0000"/>
<path d="M413,280.2 417.2,281.6 419.7,285 415.5,283.6Z" fill="#ff0000"/>
<path d="M352.9,246.3 357.3,250.6 360.4,253 356.1,248.9Z" fill="#ff0000"/>
<path d="M483.1,305 487.9,298.9 489.7,296.4 484.9,302.4Z" fill="#ff67c1"/>
<path d="M370.2,260.7 374.3,262.7 377.2,264.3 373.1,262.4Z" fill="#ff0000"/>
<path d="M393.7,271.7 397.9,273.3 400.5,275.6 396.4,274.1Z" fill="#ff0000"/>
<path d="M468.7,307.1 473.1,308.6 474.7,314 470.4,313.1Z" fill="#a400ff"/>
<path d="M348.4,241.2 352.9,246.3 356.1,248.9 351.6,244Z" fill="#ff0000"/>
<path d="M501.8,280.7 506.8,276 508.5,273.6 503.6,278.3Z" fill="#ff0000"/>
<path d="M440.8,291.9 445.1,293.2 447.2,299.6 443,297.9Z" fill="#ff0000"/>
<path d="M543.7,237.3 548.6,236.1 550.3,232.7 545.4,233.9Z" fill="#fa0000"/>
<path d="M518.6,262.8 523.5,260.3 525.2,257.1 520.3,259.8Z" fill="#ff0000"/>
<path d="M510.3,271.2 515.2,267.6 516.9,265.2 512,268.8Z" fill="#ff0000"/>
<path d="M417.2,281.6 421.4,282.8 423.8,286.4 419.7,285Z" fill="#ff0000"/>
<path d="M535.3,245.5 540.3,244 542,240.6 537,242.3Z" fill="#ff0000"/>
<path d="M527,254 531.9,252 533.6,248.8 528.7,250.9Z" fill="#ff0000"/>
<path d="M374.3,262.7 378.5,264.7 381.3,266.2 377.2,264.3Z" fill="#ff0000"/>
<path d="M397.9,273.3 402,274.9 404.7,277.1 400.5,275.6Z" fill="#ff0000"/>
<path d="M491.5,294 496.5,287.8 498.3,285.6 493.3,291.6Z" fill="#ff0000"/>
<path d="M445.1,293.2 449.4,294.5 451.5,302.6 447.2,299.6Z" fill="#ff0000"/>
<path d="M343.6,235 348.4,241.2 351.6,244 346.9,237.5Z" fill="#ff0000"/>
<path d="M378.5,264.7 382.7,266.6 385.4,268.1 381.3,266.2Z" fill="#ff0000"/>
<path d="M481.2,307.6 486,301.3 487.9,298.9 483.1,305Z" fill="#ff68bf"/>
<path d="M421.4,282.8 425.7,284.1 428,287.8 423.8,286.4Z" fill="#ff0000"/>
<path d="M542,240.6 546.9,239.4 548.6,236.1 543.7,237.3Z" fill="#fc0000"/>
<path d="M473.1,308.6 477.4,311.9 479.3,310.2 474.7,314Z" fill="#be00ff"/>
<path d="M533.6,248.8 538.5,247.3 540.3,244 535.3,245.5Z" fill="#ff0000"/>
<path d="M339.6,233.2 343.6,235 346.9,237.5 342.4,232.7Z" fill="#f90000"/>
<path d="M525.2,257.1 530.2,255.3 531.9,252 527,254Z" fill="#ff0000"/>
<path d="M402,274.9 406.2,276.4 408.8,278.7 404.7,277.1Z" fill="#ff0000"/>
<path d="M500,283.2 505,278.5 506.8,276 501.8,280.7Z" fill="#ff0000"/>
<path d="M516.9,265.2 521.8,262.7 523.5,260.3 518.6,262.8Z" fill="#ff0000"/>
<path d="M449.4,294.5 453.8,295.9 455.7,302.4 451.5,302.6Z" fill="#ff0000"/>
<path d="M382.7,266.6 386.8,268.6 389.6,270 385.4,268.1Z" fill="#ff0000"/>
<path d="M508.5,273.6 513.5,270.1 515.2,267.6 510.3,271.2Z" fill="#ff0000"/>
<path d="M425.7,284.1 429.9,285.4 432.3,289.1 428,287.8Z" fill="#ff0000"/>
<path d="M358.7,253.3 363.1,257.3 366,258.3 361.7,254.5Z" fill="#ff0000"/>
<path d="M540.3,244 545.2,242.9 546.9,239.4 542,240.6Z" fill="#fd0000"/>
<path d="M489.7,296.4 494.7,290 496.5,287.8 491.5,294Z" fill="#ff0000"/>
<path d="M406.2,276.4 410.5,278 413,280.2 408.8,278.7Z" fill="#ff0000"/>
<path d="M363.1,257.3 367.3,259.7 370.2,260.7 366,258.3Z" fill="#ff0000"/>
<path d="M354.3,249.4 358.7,253.3 361.7,254.5 357.3,250.6Z" fill="#ff0000"/>
<path d="M386.8,268.6 391,270.4 393.7,271.7 389.6,270Z" fill="#ff0000"/>
<path d="M531.9,252 536.8,250.7 538.5,247.3 533.6,248.8Z" fill="#ff0000"/>
<path d="M523.5,260.3 528.4,258.6 530.2,255.3 525.2,257.1Z" fill="#ff0000"/>
<path d="M479.3,310.2 484.1,303.7 486,301.3 481.2,307.6Z" fill="#ff6abc"/>
<path d="M349.9,245.5 354.3,249.4 357.3,250.6 352.9,246.3Z" fill="#ff0000"/>
<path d="M453.8,295.9 458.2,297.2 460,304 455.7,302.4Z" fill="#ff0000"/>
<path d="M367.3,259.7 371.5,261.7 374.3,262.7 370.2,260.7Z" fill="#ff0000"/>
<path d="M345.5,241.6 349.9,245.5 352.9,246.3 348.4,241.2Z" fill="#ff0000"/>
<path d="M498.3,285.6 503.2,280.9 505,278.5 500,283.2Z" fill="#ff0000"/>
<path d="M515.2,267.6 520.1,265.1 521.8,262.7 516.9,265.2Z" fill="#ff0000"/>
<path d="M429.9,285.4 434.2,286.7 436.5,290.5 432.3,289.1Z" fill="#ff0000"/>
<path d="M410.5,278 414.7,279.3 417.2,281.6 413,280.2Z" fill="#ff0000"/>
<path d="M391,270.4 395.2,271.9 397.9,273.3 393.7,271.7Z" fill="#ff0000"/>
<path d="M506.8,276 511.7,272.5 513.5,270.1 508.5,273.6Z" fill="#ff0000"/>
<path d="M538.5,247.3 543.5,246.3 545.2,242.9 540.3,244Z" fill="#ff0000"/>
<path d="M458.2,297.2 462.6,298.6 464.3,307.3 460,304Z" fill="#ff0000"/>
<path d="M371.5,261.7 375.7,263.7 378.5,264.7 374.3,262.7Z" fill="#ff0000"/>
<path d="M341.1,237.6 345.5,241.6 348.4,241.2 343.6,235Z" fill="#fa0000"/>
<path d="M530.2,255.3 535.1,254 536.8,250.7 531.9,252Z" fill="#ff0000"/>
<path d="M336.7,233.7 341.1,237.6 343.6,235 339.6,233.2Z" fill="#f70000"/>
<path d="M521.8,262.7 526.7,261 528.4,258.6 523.5,260.3Z" fill="#ff0000"/>
<path d="M487.9,298.9 492.8,292.2 494.7,290 489.7,296.4Z" fill="#ff0000"/>
<path d="M395.2,271.9 399.4,273.5 402,274.9 397.9,273.3Z" fill="#ff0000"/>
<path d="M434.2,286.7 438.6,287.9 440.8,291.9 436.5,290.5Z" fill="#ff0000"/>
<path d="M414.7,279.3 419,280.5 421.4,282.8 417.2,281.6Z" fill="#ff0000"/>
<path d="M375.7,263.7 379.9,265.8 382.7,266.6 378.5,264.7Z" fill="#ff0000"/>
<path d="M477.4,311.9 482.2,306.1 484.1,303.7 479.3,310.2Z" fill="#ff71b1"/>
<path d="M462.6,298.6 467,300 468.7,307.1 464.3,307.3Z" fill="#ff0000"/>
<path d="M536.8,250.7 541.7,249.7 543.5,246.3 538.5,247.3Z" fill="#ff0000"/>
<path d="M513.5,270.1 518.4,267.6 520.1,265.1 515.2,267.6Z" fill="#ff0000"/>
<path d="M496.5,287.8 501.5,282.9 503.2,280.9 498.3,285.6Z" fill="#ff0000"/>
<path d="M528.4,258.6 533.3,257.5 535.1,254 530.2,255.3Z" fill="#ff0000"/>
<path d="M379.9,265.8 384.1,267.8 386.8,268.6 382.7,266.6Z" fill="#ff0000"/>
<path d="M505,278.5 510,274.9 511.7,272.5 506.8,276Z" fill="#ff0000"/>
<path d="M399.4,273.5 403.7,275.1 406.2,276.4 402,274.9Z" fill="#ff0000"/>
<path d="M438.6,287.9 442.9,289.1 445.1,293.2 440.8,291.9Z" fill="#ff0000"/>
<path d="M419,280.5 423.3,281.7 425.7,284.1 421.4,282.8Z" fill="#ff0000"/>
<path d="M520.1,265.1 525,263.5 526.7,261 521.8,262.7Z" fill="#ff0000"/>
<path d="M384.1,267.8 388.4,269.6 391,270.4 386.8,268.6Z" fill="#ff0000"/>
<path d="M535.1,254 540,253.2 541.7,249.7 536.8,250.7Z" fill="#ff0000"/>
<path d="M467,300 471.5,301.4 473.1,308.6 468.7,307.1Z" fill="#ff0000"/>
<path d="M486,301.3 491,294.4 492.8,292.2 487.9,298.9Z" fill="#ff0000"/>
<path d="M403.7,275.1 407.9,276.7 410.5,278 406.2,276.4Z" fill="#ff0000"/>
<path d="M526.7,261 531.6,259.9 533.3,257.5 528.4,258.6Z" fill="#ff0000"/>
<path d="M442.9,289.1 447.3,290.2 449.4,294.5 445.1,293.2Z" fill="#ff0000"/>
<path d="M511.7,272.5 516.7,270 518.4,267.6 513.5,270.1Z" fill="#ff0000"/>
<path d="M423.3,281.7 427.6,282.9 429.9,285.4 425.7,284.1Z" fill="#ff0000"/>
<path d="M388.4,269.6 392.6,271.2 395.2,271.9 391,270.4Z" fill="#ff0000"/>
<path d="M471.5,301.4 476,302.5 477.4,311.9 473.1,308.6Z" fill="#ff0000"/>
<path d="M503.2,280.9 508.2,277.4 510,274.9 505,278.5Z" fill="#ff0000"/>
<path d="M494.7,290 499.7,284.8 501.5,282.9 496.5,287.8Z" fill="#ff0000"/>
<path d="M533.3,257.5 538.2,256.7 540,253.2 535.1,254Z" fill="#ff0000"/>
<path d="M407.9,276.7 412.2,278 414.7,279.3 410.5,278Z" fill="#ff0000"/>
<path d="M518.4,267.6 523.3,265.9 525,263.5 520.1,265.1Z" fill="#ff0000"/>
<path d="M447.3,290.2 451.7,291.4 453.8,295.9 449.4,294.5Z" fill="#ff0000"/>
<path d="M392.6,271.2 396.8,272.8 399.4,273.5 395.2,271.9Z" fill="#ff0000"/>
<path d="M427.6,282.9 431.9,284.1 434.2,286.7 429.9,285.4Z" fill="#ff0000"/>
<path d="M484.1,303.7 489.1,296.5 491,294.4 486,301.3Z" fill="#ff0000"/>
<path d="M525,263.5 530,262.4 531.6,259.9 526.7,261Z" fill="#ff0000"/>
<path d="M412.2,278 416.5,279.2 419,280.5 414.7,279.3Z" fill="#ff0000"/>
<path d="M510,274.9 514.9,272.4 516.7,270 511.7,272.5Z" fill="#ff0000"/>
<path d="M531.6,259.9 536.6,259.2 538.2,256.7 533.3,257.5Z" fill="#ff0000"/>
<path d="M396.8,272.8 401.1,274.4 403.7,275.1 399.4,273.5Z" fill="#ff0000"/>
<path d="M476,302.5 480.6,303 482.2,306.1 477.4,311.9Z" fill="#ff0000"/>
<path d="M451.7,291.4 456.2,292.6 458.2,297.2 453.8,295.9Z" fill="#ff0000"/>
<path d="M501.5,282.9 506.5,279.1 508.2,277.4 503.2,280.9Z" fill="#ff0000"/>
<path d="M492.8,292.2 497.9,286.8 499.7,284.8 494.7,290Z" fill="#ff0000"/>
<path d="M431.9,284.1 436.3,285.2 438.6,287.9 434.2,286.7Z" fill="#ff0000"/>
<path d="M516.7,270 521.6,268.4 523.3,265.9 518.4,267.6Z" fill="#ff0000"/>
<path d="M416.5,279.2 420.8,280.3 423.3,281.7 419,280.5Z" fill="#ff0000"/>
<path d="M401.1,274.4 405.4,276.1 407.9,276.7 403.7,275.1Z" fill="#ff0000"/>
<path d="M482.2,306.1 487.3,298.4 489.1,296.5 484.1,303.7Z" fill="#ff0000"/>
<path d="M456.2,292.6 460.6,293.9 462.6,298.6 458.2,297.2Z" fill="#ff0000"/>
<path d="M523.3,265.9 528.3,264.9 530,262.4 525,263.5Z" fill="#ff0000"/>
<path d="M436.3,285.2 440.7,286.3 442.9,289.1 438.6,287.9Z" fill="#ff0000"/>
<path d="M508.2,277.4 513.2,274.9 514.9,272.4 510,274.9Z" fill="#ff0000"/>
<path d="M530,262.4 534.9,261.7 536.6,259.2 531.6,259.9Z" fill="#ff0000"/>
<path d="M420.8,280.3 425.2,281.4 427.6,282.9 423.3,281.7Z" fill="#ff0000"/>
<path d="M405.4,276.1 409.7,277.4 412.2,278 407.9,276.7Z" fill="#ff0000"/>
<path d="M491,294.4 496,288.7 497.9,286.8 492.8,292.2Z" fill="#ff0000"/>
<path d="M499.7,284.8 504.7,280.8 506.5,279.1 501.5,282.9Z" fill="#ff0000"/>
<path d="M460.6,293.9 465.2,295.2 467,300 462.6,298.6Z" fill="#ff0000"/>
<path d="M514.9,272.4 519.9,270.8 521.6,268.4 516.7,270Z" fill="#ff0000"/>
<path d="M440.7,286.3 445.1,287.3 447.3,290.2 442.9,289.1Z" fill="#ff0000"/>
<path d="M521.6,268.4 526.6,267.4 528.3,264.9 523.3,265.9Z" fill="#ff0000"/>
<path d="M409.7,277.4 414,278.4 416.5,279.2 412.2,278Z" fill="#ff0000"/>
<path d="M425.2,281.4 429.6,282.6 431.9,284.1 427.6,282.9Z" fill="#ff0000"/>
<path d="M528.3,264.9 533.2,264.2 534.9,261.7 530,262.4Z" fill="#ff0000"/>
<path d="M506.5,279.1 511.5,276.4 513.2,274.9 508.2,277.4Z" fill="#ff0000"/>
<path d="M465.2,295.2 469.7,296.4 471.5,301.4 467,300Z" fill="#ff0000"/>
<path d="M445.1,287.3 449.6,288.4 451.7,291.4 447.3,290.2Z" fill="#ff0000"/>
<path d="M480.6,303 485.5,298.4 487.3,298.4 482.2,306.1Z" fill="#ff0000"/>
<path d="M513.2,274.9 518.1,273.3 519.9,270.8 514.9,272.4Z" fill="#ff0000"/>
<path d="M489.1,296.5 494.2,290.6 496,288.7 491,294.4Z" fill="#ff0000"/>
<path d="M414,278.4 418.4,279.5 420.8,280.3 416.5,279.2Z" fill="#ff0000"/>
<path d="M429.6,282.6 434,283.6 436.3,285.2 431.9,284.1Z" fill="#ff0000"/>
<path d="M497.9,286.8 502.9,282.5 504.7,280.8 499.7,284.8Z" fill="#ff0000"/>
<path d="M469.7,296.4 474.3,297.2 476,302.5 471.5,301.4Z" fill="#ff0000"/>
<path d="M519.9,270.8 524.8,269.9 526.6,267.4 521.6,268.4Z" fill="#ff0000"/>
<path d="M449.6,288.4 454.1,289.5 456.2,292.6 451.7,291.4Z" fill="#ff0000"/>
<path d="M526.6,267.4 531.5,266.7 533.2,264.2 528.3,264.9Z" fill="#ff0000"/>
<path d="M418.4,279.5 422.8,280.6 425.2,281.4 420.8,280.3Z" fill="#ff0000"/>
<path d="M434,283.6 438.4,284.5 440.7,286.3 436.3,285.2Z" fill="#ff0000"/>
<path d="M504.7,280.8 509.8,277.9 511.5,276.4 506.5,279.1Z" fill="#ff0000"/>
<path d="M474.3,297.2 479,297.6 480.6,303 476,302.5Z" fill="#ff0000"/>
<path d="M511.5,276.4 516.5,274.7 518.1,273.3 513.2,274.9Z" fill="#ff0000"/>
<path d="M454.1,289.5 458.6,290.7 460.6,293.9 456.2,292.6Z" fill="#ff0000"/>
<path d="M487.3,298.4 492.3,292.3 494.2,290.6 489.1,296.5Z" fill="#ff0000"/>
<path d="M496,288.7 501.1,284.2 502.9,282.5 497.9,286.8Z" fill="#ff0000"/>
<path d="M518.1,273.3 523.1,272.4 524.8,269.9 519.9,270.8Z" fill="#ff0000"/>
<path d="M422.8,280.6 427.2,281.7 429.6,282.6 425.2,281.4Z" fill="#ff0000"/>
<path d="M438.4,284.5 442.9,285.5 445.1,287.3 440.7,286.3Z" fill="#ff0000"/>
<path d="M524.8,269.9 529.8,269.3 531.5,266.7 526.6,267.4Z" fill="#ff0000"/>
<path d="M458.6,290.7 463.2,291.9 465.2,295.2 460.6,293.9Z" fill="#ff0000"/>
<path d="M502.9,282.5 508,279.3 509.8,277.9 504.7,280.8Z" fill="#ff0000"/>
<path d="M427.2,281.7 431.6,282.6 434,283.6 429.6,282.6Z" fill="#ff0000"/>
<path d="M442.9,285.5 447.4,286.5 449.6,288.4 445.1,287.3Z" fill="#ff0000"/>
<path d="M509.8,277.9 514.8,276 516.5,274.7 511.5,276.4Z" fill="#ff0000"/>
<path d="M516.5,274.7 521.5,273.7 523.1,272.4 518.1,273.3Z" fill="#ff0000"/>
<path d="M523.1,272.4 528.1,271.9 529.8,269.3 524.8,269.9Z" fill="#ff0000"/>
<path d="M463.2,291.9 467.8,293.1 469.7,296.4 465.2,295.2Z" fill="#ff0000"/>
<path d="M494.2,290.6 499.3,285.8 501.1,284.2 496,288.7Z" fill="#ff0000"/>
<path d="M479,297.6 483.8,295.4 485.5,298.4 480.6,303Z" fill="#ff0000"/>
<path d="M485.5,298.4 490.5,293 492.3,292.3 487.3,298.4Z" fill="#ff0000"/>
<path d="M431.6,282.6 436.1,283.5 438.4,284.5 434,283.6Z" fill="#ff0000"/>
<path d="M447.4,286.5 452,287.5 454.1,289.5 449.6,288.4Z" fill="#ff0000"/>
<path d="M467.8,293.1 472.5,293.6 474.3,297.2 469.7,296.4Z" fill="#ff0000"/>
<path d="M501.1,284.2 506.3,280.8 508,279.3 502.9,282.5Z" fill="#ff0000"/>
<path d="M436.1,283.5 440.6,284.4 442.9,285.5 438.4,284.5Z" fill="#ff0000"/>
<path d="M452,287.5 456.6,288.7 458.6,290.7 454.1,289.5Z" fill="#ff0000"/>
<path d="M521.5,273.7 526.5,273 528.1,271.9 523.1,272.4Z" fill="#ff0000"/>
<path d="M508,279.3 513.1,277.3 514.8,276 509.8,277.9Z" fill="#ff0000"/>
<path d="M492.3,292.3 497.5,287.4 499.3,285.8 494.2,290.6Z" fill="#ff0000"/>
<path d="M514.8,276 519.8,274.9 521.5,273.7 516.5,274.7Z" fill="#ff0000"/>
<path d="M472.5,293.6 477.2,293.8 479,297.6 474.3,297.2Z" fill="#ff0000"/>
<path d="M456.6,288.7 461.2,289.8 463.2,291.9 458.6,290.7Z" fill="#ff0000"/>
<path d="M440.6,284.4 445.2,285.3 447.4,286.5 442.9,285.5Z" fill="#ff0000"/>
<path d="M499.3,285.8 504.5,282.2 506.3,280.8 501.1,284.2Z" fill="#ff0000"/>
<path d="M483.8,295.4 488.8,291.9 490.5,293 485.5,298.4Z" fill="#ff0000"/>
<path d="M461.2,289.8 465.9,291 467.8,293.1 463.2,291.9Z" fill="#ff0000"/>
<path d="M519.8,274.9 524.9,274.1 526.5,273 521.5,273.7Z" fill="#ff0000"/>
<path d="M445.2,285.3 449.8,286.3 452,287.5 447.4,286.5Z" fill="#ff0000"/>
<path d="M506.3,280.8 511.4,278.6 513.1,277.3 508,279.3Z" fill="#ff0000"/>
<path d="M490.5,293 495.7,288.4 497.5,287.4 492.3,292.3Z" fill="#ff0000"/>
<path d="M513.1,277.3 518.2,276.1 519.8,274.9 514.8,276Z" fill="#ff0000"/>
<path d="M477.2,293.8 482.1,292.4 483.8,295.4 479,297.6Z" fill="#ff0000"/>
<path d="M465.9,291 470.6,291.3 472.5,293.6 467.8,293.1Z" fill="#ff0000"/>
<path d="M449.8,286.3 454.4,287.4 456.6,288.7 452,287.5Z" fill="#ff0000"/>
<path d="M497.5,287.4 502.7,283.6 504.5,282.2 499.3,285.8Z" fill="#ff0000"/>
<path d="M518.2,276.1 523.3,275.3 524.9,274.1 519.8,274.9Z" fill="#ff0000"/>
<path d="M504.5,282.2 509.6,279.9 511.4,278.6 506.3,280.8Z" fill="#ff0000"/>
<path d="M454.4,287.4 459.1,288.6 461.2,289.8 456.6,288.7Z" fill="#ff0000"/>
<path d="M511.4,278.6 516.5,277.3 518.2,276.1 513.1,277.3Z" fill="#ff0000"/>
<path d="M470.6,291.3 475.4,291.3 477.2,293.8 472.5,293.6Z" fill="#ff0000"/>
<path d="M488.8,291.9 493.9,288.2 495.7,288.4 490.5,293Z" fill="#ff0000"/>
<path d="M482.1,292.4 487,290.2 488.8,291.9 483.8,295.4Z" fill="#ff0000"/>
<path d="M459.1,288.6 463.8,289.7 465.9,291 461.2,289.8Z" fill="#ff0000"/>
<path d="M495.7,288.4 500.9,284.6 502.7,283.6 497.5,287.4Z" fill="#ff0000"/>
<path d="M502.7,283.6 507.9,281.1 509.6,279.9 504.5,282.2Z" fill="#ff0000"/>
<path d="M516.5,277.3 521.6,276.4 523.3,275.3 518.2,276.1Z" fill="#fe0000"/>
<path d="M475.4,291.3 480.2,290.2 482.1,292.4 477.2,293.8Z" fill="#ff0000"/>
<path d="M509.6,279.9 514.8,278.5 516.5,277.3 511.4,278.6Z" fill="#ff0000"/>
<path d="M463.8,289.7 468.6,289.9 470.6,291.3 465.9,291Z" fill="#ff0000"/>
<path d="M487,290.2 492.1,287.5 493.9,288.2 488.8,291.9Z" fill="#ff0000"/>
<path d="M493.9,288.2 499.1,284.9 500.9,284.6 495.7,288.4Z" fill="#ff0000"/>
<path d="M468.6,289.9 473.4,289.7 475.4,291.3 470.6,291.3Z" fill="#ff0000"/>
<path d="M500.9,284.6 506.1,282.1 507.9,281.1 502.7,283.6Z" fill="#ff0000"/>
<path d="M514.8,278.5 519.9,277.6 521.6,276.4 516.5,277.3Z" fill="#fc0000"/>
<path d="M507.9,281.1 513,279.6 514.8,278.5 509.6,279.9Z" fill="#fe0000"/>
<path d="M480.2,290.2 485.2,288.7 487,290.2 482.1,292.4Z" fill="#ff0000"/>
<path d="M473.4,289.7 478.4,288.7 480.2,290.2 475.4,291.3Z" fill="#ff0000"/>
<path d="M513,279.6 518.2,278.8 519.9,277.6 514.8,278.5Z" fill="#fa0000"/>
<path d="M492.1,287.5 497.3,284.8 499.1,284.9 493.9,288.2Z" fill="#ff0000"/>
<path d="M506.1,282.1 511.3,280.6 513,279.6 507.9,281.1Z" fill="#fb0000"/>
<path d="M499.1,284.9 504.3,282.6 506.1,282.1 500.9,284.6Z" fill="#fe0000"/>
<path d="M485.2,288.7 490.3,286.9 492.1,287.5 487,290.2Z" fill="#ff0000"/>
<path d="M478.4,288.7 483.4,287.6 485.2,288.7 480.2,290.2Z" fill="#ff0000"/>
<path d="M511.3,280.6 516.5,280 518.2,278.8 513,279.6Z" fill="#f70000"/>
<path d="M504.3,282.6 509.5,281.4 511.3,280.6 506.1,282.1Z" fill="#f90000"/>
<path d="M497.3,284.8 502.5,282.8 504.3,282.6 499.1,284.9Z" fill="#fa0000"/>
<path d="M490.3,286.9 495.5,284.8 497.3,284.8 492.1,287.5Z" fill="#fc0000"/>
<path d="M483.4,287.6 488.4,286.6 490.3,286.9 485.2,288.7Z" fill="#fc0000"/>
<path d="M509.5,281.4 514.7,281.2 516.5,280 511.3,280.6Z" fill="#f50000"/>
<path d="M502.5,282.8 507.8,281.8 509.5,281.4 504.3,282.6Z" fill="#f50000"/>
<path d="M495.5,284.8 500.7,283.3 502.5,282.8 497.3,284.8Z" fill="#f60000"/>
<path d="M488.4,286.6 493.6,285.5 495.5,284.8 490.3,286.9Z" fill="#f70000"/>
<path d="M507.8,281.8 512.9,282.4 514.7,281.2 509.5,281.4Z" fill="#f20000"/>
<path d="M500.7,283.3 506,282.3 507.8,281.8 502.5,282.8Z" fill="#f20000"/>
<path d="M493.6,285.5 498.8,285.1 500.7,283.3 495.5,284.8Z" fill="#f30000"/>
<path d="M506,282.3 511.1,283.7 512.9,282.4 507.8,281.8Z" fill="#f00000"/>
<path d="M498.8,285.1 504,285.3 506,282.3 500.7,283.3Z" fill="#f00000"/>
<path d="M504,285.3 509.3,285.3 511.1,283.7 506,282.3Z" fill="#ee0000"/>
</g>
<path d="M316.5,184.4 516.4,244.2M516.4,244.2 586.1,151.2M586.1,151.2 416.5,112.6M416.5,112.6 316.5,184.4M497.3,448.5 516.4,244.2M553,345.5 586.1,151.2M351.7,384.4 316.5,184.4M351.7,384.4 497.3,448.5M497.3,448.5 553,345.5" fill="none" stroke="#3434b4" stroke-width="0.8"/>
<defs><linearGradient id="barg" gradientUnits="userSpaceOnUse" x1="316.5" y1="184.4" x2="336.8" y2="301.4"><stop offset="0" stop-color="#c00808"/><stop offset="0.1" stop-color="#b40000"/><stop offset="0.38" stop-color="#b80000"/><stop offset="0.45" stop-color="#e00000"/><stop offset="0.58" stop-color="#ff0000"/><stop offset="0.795" stop-color="#ff0000"/><stop offset="0.805" stop-color="#ff6a98"/><stop offset="0.83" stop-color="#ff58d8"/><stop offset="0.86" stop-color="#e428ff"/><stop offset="0.89" stop-color="#9000ff"/><stop offset="0.915" stop-color="#2828ff"/><stop offset="0.93" stop-color="#0090c8"/><stop offset="0.945" stop-color="#00d038"/><stop offset="0.965" stop-color="#30e050"/><stop offset="1" stop-color="#a0f4a0"/></linearGradient></defs>
<path d="M316.5,185.9 L336.5,296.9" stroke="url(#barg)" stroke-width="9.2" stroke-linecap="round" fill="none"/>
<ellipse cx="316.5" cy="184.7" rx="4.6" ry="2" fill="#a81830"/>
<g font-family="Liberation Serif,serif" font-style="italic" font-size="8.5" fill="#1c1c98" stroke="#1c1c98" stroke-width="0.22">
<text x="360.5" y="405.6" text-anchor="middle">0 ft</text>
<text x="386.7" y="417.3" text-anchor="middle">20 ft</text>
<text x="414" y="430.6" text-anchor="middle">40 ft</text>
<text x="442.7" y="443.8" text-anchor="middle">60 ft</text>
<text x="472.8" y="457.8" text-anchor="middle">80 ft</text>
<text x="480.2" y="479.3" text-anchor="middle">90.0 ft</text>
<text x="332.2" y="408.1" text-anchor="middle">-15.0 ft</text>
<text x="525.2" y="438.9" text-anchor="middle">0 ft</text>
<text x="536.9" y="414.6" text-anchor="middle">20 ft</text>
<text x="548.3" y="391.8" text-anchor="middle">40 ft</text>
<text x="558.5" y="371.5" text-anchor="middle">60 ft</text>
<text x="568" y="352.6" text-anchor="middle">80 ft</text>
<text x="592.8" y="360.8" text-anchor="middle">80.0 ft</text>
<text x="542.3" y="470.6" text-anchor="middle">-15.0 ft</text>
<text x="309.7" y="192.6" text-anchor="end">4914 V</text>
<text x="316.8" y="220.3" text-anchor="end">4000 V</text>
<text x="321.6" y="245.5" text-anchor="end">3000 V</text>
<text x="326.5" y="268.7" text-anchor="end">2000 V</text>
<text x="330.6" y="291.3" text-anchor="end">1000 V</text>
<text x="329" y="311.3" text-anchor="end">0 V</text>
<text x="304.8" y="299.4" text-anchor="end">Safety Level</text>
<text x="311.3" y="328.1" text-anchor="end">Safe</text>
</g>
</svg></div>
<div id="status"><span class="rdy">Ready</span>
<div class="pane" style="left:589px;width:20px"></div><div class="pane" style="left:611px;width:22px"></div><div class="pane" style="left:634px;width:24px"></div>
<svg style="position:absolute;left:662px;top:5px" width="10" height="10" viewBox="0 0 10 10"><path d="M9.5 1L1 9.5M9.5 4L4 9.5M9.5 7L7 9.5" stroke="#8c8880" stroke-width="1"/><path d="M9.5 2L2 9.5M9.5 5L5 9.5M9.5 8L8 9.5" stroke="#fff" stroke-width="0.8"/></svg>
</div>
</div>
</body></html>
